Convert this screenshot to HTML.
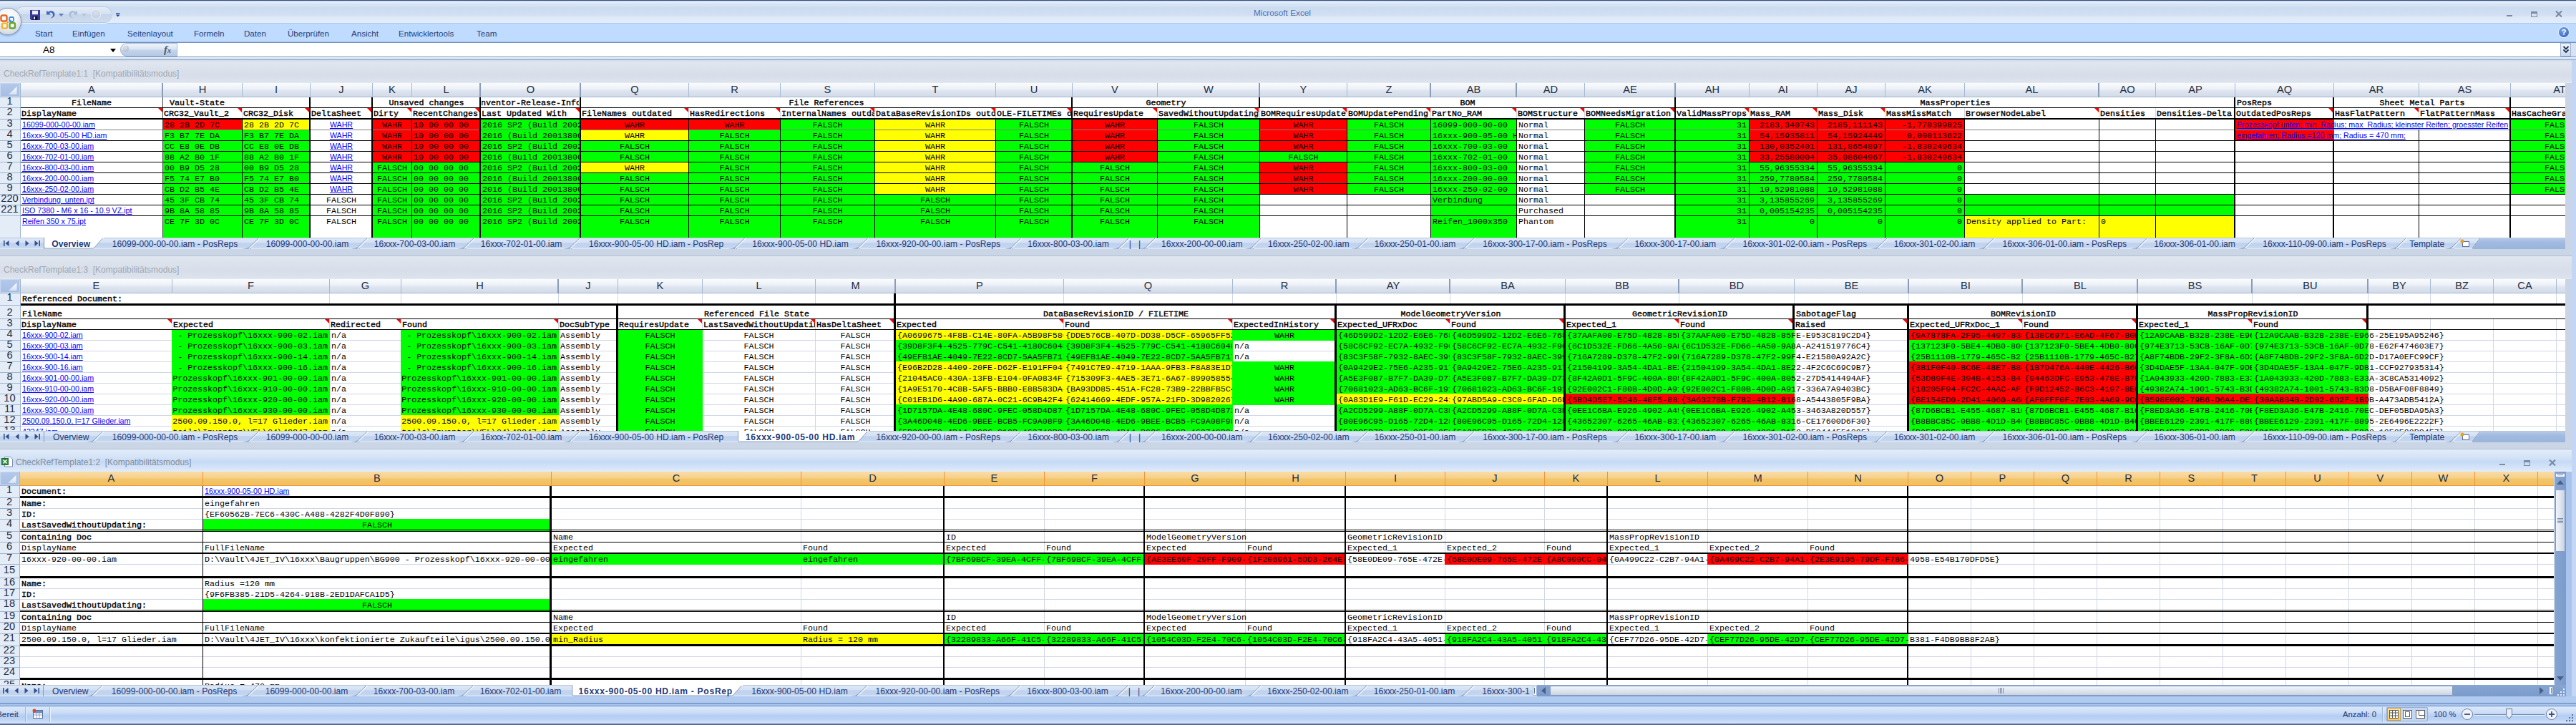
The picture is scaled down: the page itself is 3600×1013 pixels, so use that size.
<!DOCTYPE html><html><head><meta charset="utf-8"><title>Microsoft Excel</title><style>html,body{margin:0;padding:0}
body{width:3600px;height:1013px;position:relative;overflow:hidden;background:#dfe5ee;font-family:"Liberation Mono",monospace}
i{position:absolute;display:block}
.t{position:absolute;white-space:nowrap;overflow:hidden;font:11.67px "Liberation Mono",monospace;color:#000}
.b{-webkit-text-stroke:.4px #000}
.ui{font-family:"Liberation Sans",sans-serif;overflow:visible}
.l{font:10.67px "Liberation Sans",sans-serif;color:#00f;text-decoration:underline}
.h{font:14.67px "Liberation Sans",sans-serif;color:#1f2d42;text-align:center;overflow:visible}
.c{text-align:center}.r{text-align:right}
.rj{display:flex;justify-content:flex-end}
</style></head><body>
<i style="left:0px;top:0px;width:3600px;height:33px;background:linear-gradient(#31507f 0,#31507f 1px,#9db4d6 1px,#e6eefa 2px,#e3ecf8 4px,#d9e5f5 5px,#d3e1f3 9px,#cbdbf0 10px,#d2e0f3 22px,#dde8f7 23px,#e3edfa 32px,#a9c9f1 32px)"></i>
<i style="left:0px;top:33px;width:3600px;height:25px;background:#bfdbff"></i>
<i style="left:0px;top:58px;width:3600px;height:1px;background:#9fbfe8"></i>
<i style="left:0px;top:59px;width:3600px;height:1px;background:#7590b7"></i>
<i style="left:0px;top:60px;width:3600px;height:19px;background:#fff"></i>
<i style="left:0px;top:79px;width:3600px;height:1px;background:#6c8bb5"></i>
<i style="left:0px;top:80px;width:3600px;height:2px;background:#f4f8fd"></i>
<i style="left:0px;top:82px;width:3600px;height:1px;background:#7f9fcb"></i>
<i style="left:0px;top:83px;width:3600px;height:1px;background:#b4c8e4"></i>
<i style="left:22px;top:10px;width:134px;height:21px;background:linear-gradient(#e4edf8,#d3e0f1 45%,#c4d4ea 50%,#cfdcee);border-radius:11px;box-shadow:0 0 0 1px #b9cbe4,0 1px 0 1px #eef4fb"></i>
<i style="left:-7px;top:12px;width:36px;height:36px;border-radius:50%;background:radial-gradient(circle at 50% 35%,#fff 0,#f4f6fa 40%,#d5dbe6 75%,#b9c2d2 100%);box-shadow:0 0 0 1px #8e9bb3,0 1px 3px 1px rgba(60,80,120,.45)"></i>
<svg style="position:absolute;left:0;top:19px" width="24" height="24" viewBox="0 0 24 24"><rect x="1.5" y="2.5" width="8" height="8" rx="2" fill="none" stroke="#e8641b" stroke-width="2.4"/><rect x="13" y="5" width="6" height="6" rx="1.5" fill="none" stroke="#3f8fd6" stroke-width="1.8"/><rect x="3" y="13.5" width="7" height="7" rx="1.5" fill="none" stroke="#f3b21b" stroke-width="2.2"/><rect x="13.5" y="13" width="7.5" height="7.5" rx="2" fill="none" stroke="#6aa52e" stroke-width="2.4"/><circle cx="11" cy="12" r="1" fill="#e8641b"/><circle cx="14.5" cy="9.5" r="1" fill="#3f8fd6"/></svg>
<svg style="position:absolute;left:42px;top:14px" width="14" height="14" viewBox="0 0 14 14"><path d="M0 0h14v14H1.5L0 12.5z" fill="#3a3a9a"/><rect x="3" y="0.8" width="8" height="5.4" fill="#eef0fa"/><rect x="3.5" y="8.5" width="7" height="5.5" fill="#15154a"/><rect x="5" y="9.5" width="2" height="3.5" fill="#dfe3f5"/></svg>
<svg style="position:absolute;left:64px;top:13px" width="14" height="14" viewBox="0 0 14 14"><path d="M1 1.5v6h6L4.8 5.3C7 3.6 10 5 10 8c0 2.200-1.500 3.800-4 4.500 4-.2 6.500-2.300 6.500-5.500C12.500 2.500 7 .8 3.200 3.700z" fill="#3e68b8"/></svg>
<svg style="position:absolute;left:82px;top:19px" width="7" height="4"><path d="M0 0h7L3.500 4z" fill="#5f7fb8"/></svg>
<svg style="position:absolute;left:95px;top:13px" width="14" height="14" viewBox="0 0 14 14"><path d="M13 1.500v6H7l2.200-2.200C7 3.600 4 5 4 8c0 2.200 1.500 3.800 4 4.500-4-.2-6.500-2.300-6.500-5.500C1.500 2.500 7 .8 10.800 3.700z" fill="#a9bcd8"/></svg>
<svg style="position:absolute;left:114px;top:19px" width="7" height="4"><path d="M0 0h7L3.500 4z" fill="#b9c4d6"/></svg>
<i style="left:128px;top:14px;width:12px;height:12px;border-radius:50%;background:radial-gradient(circle at 50% 30%,#d9e1ed,#c6d1e3 60%,#d5deeb);box-shadow:0 0 0 1.200px #e6ecf5"></i>
<svg style="position:absolute;left:162px;top:18px" width="6" height="6"><path d="M0 0h5.500v1.300H0zM0 2.600h5.500L2.750 5.600z" fill="#23408f"/></svg>
<div class="t ui" style="text-align:center;color:#4b6cb1;font-size:11.8px;left:1700px;top:9px;width:184px;height:18px;line-height:18px">Microsoft Excel</div>
<i style="left:3503px;top:21px;width:8px;height:2px;background:#7b8ba6"></i>
<i style="left:3537px;top:16px;width:7px;height:4px;border:1px solid #7b8ba6;border-top-width:3px"></i>
<svg style="position:absolute;left:3571px;top:15px" width="10" height="9"><path d="M1 .5 9 8.500M9 .5 1 8.500" stroke="#7b8ba6" stroke-width="2.200"/></svg>
<div class="t ui" style="color:#1e3f7d;font-size:11.6px;left:49px;top:38px;width:120px;height:18px;line-height:18px">Start</div>
<div class="t ui" style="color:#1e3f7d;font-size:11.6px;left:101px;top:38px;width:120px;height:18px;line-height:18px">Einfügen</div>
<div class="t ui" style="color:#1e3f7d;font-size:11.6px;left:178px;top:38px;width:120px;height:18px;line-height:18px">Seitenlayout</div>
<div class="t ui" style="color:#1e3f7d;font-size:11.6px;left:271px;top:38px;width:120px;height:18px;line-height:18px">Formeln</div>
<div class="t ui" style="color:#1e3f7d;font-size:11.6px;left:341px;top:38px;width:120px;height:18px;line-height:18px">Daten</div>
<div class="t ui" style="color:#1e3f7d;font-size:11.6px;left:402px;top:38px;width:120px;height:18px;line-height:18px">Überprüfen</div>
<div class="t ui" style="color:#1e3f7d;font-size:11.6px;left:491px;top:38px;width:120px;height:18px;line-height:18px">Ansicht</div>
<div class="t ui" style="color:#1e3f7d;font-size:11.6px;left:557px;top:38px;width:120px;height:18px;line-height:18px">Entwicklertools</div>
<div class="t ui" style="color:#1e3f7d;font-size:11.6px;left:666px;top:38px;width:120px;height:18px;line-height:18px">Team</div>
<i style="left:3576px;top:38px;width:14px;height:14px;border-radius:50%;background:radial-gradient(circle at 40% 30%,#7aa7ea,#2457b5);box-shadow:0 0 0 1px #e8f0fb"></i>
<div class="t ui" style="text-align:center;color:#fff;font-weight:bold;font-size:11px;left:3576px;top:38px;width:14px;height:14px;line-height:14px">?</div>
<div class="t ui" style="color:#000;font-size:13.5px;left:60px;top:61px;width:40px;height:18px;line-height:18px">A8</div>
<svg style="position:absolute;left:154px;top:68px" width="8" height="5"><path d="M0 0h8L4 5z" fill="#000"/></svg>
<i style="left:168px;top:60px;width:80px;height:19px;border-radius:10px 0 0 10px;background:linear-gradient(#f1f5fb,#dbe5f3 45%,#c2d3ea 55%,#b4c8e4);box-shadow:inset 0 0 0 1px #a8bbd8"></i>
<i style="left:172px;top:64px;width:8px;height:8px;border-radius:50%;background:radial-gradient(circle at 40% 35%,#dfe3ea,#a9b1be)"></i>
<div class="t " style="font:italic bold 15px 'Liberation Serif',serif;color:#4d5a6e;left:229px;top:60px;width:20px;height:18px;line-height:18px">f<span style="font-size:10px">x</span></div>
<i style="left:3578px;top:60px;width:15px;height:19px;background:linear-gradient(#f1f5fb,#c9d8ee);box-shadow:inset 0 0 0 1px #9db3d3"></i>
<svg style="position:absolute;left:3582px;top:64px" width="8" height="11"><path d="M.5 1 4 4.500 7.500 1M.5 5.500 4 9 7.500 5.500" stroke="#1b2b4a" stroke-width="1.800" fill="none"/></svg>
<i style="left:3593px;top:60px;width:7px;height:19px;background:#d6e3f5"></i>
<i style="left:0px;top:84px;width:3594px;height:32px;background:linear-gradient(#d3dbe7 0,#e0e6ef 3px,#d7dee9 65%,#dde3ed 95%,#e6ebf3)"></i>
<div class="t ui" style="color:#a1a9b4;font-size:12px;white-space:pre;left:5px;top:94px;width:400px;height:18px;line-height:18px">CheckRefTemplate1:1  [Kompatibilitätsmodus]</div>
<i style="left:0px;top:116px;width:3585px;height:216px;background:#fff"></i>
<i style="left:227px;top:136px;width:1px;height:196px;background:#d0d7e5"></i>
<i style="left:338px;top:136px;width:1px;height:196px;background:#d0d7e5"></i>
<i style="left:433px;top:136px;width:1px;height:196px;background:#d0d7e5"></i>
<i style="left:520px;top:136px;width:1px;height:196px;background:#d0d7e5"></i>
<i style="left:575px;top:136px;width:1px;height:196px;background:#d0d7e5"></i>
<i style="left:671px;top:136px;width:1px;height:196px;background:#d0d7e5"></i>
<i style="left:811px;top:136px;width:1px;height:196px;background:#d0d7e5"></i>
<i style="left:962px;top:136px;width:1px;height:196px;background:#d0d7e5"></i>
<i style="left:1090px;top:136px;width:1px;height:196px;background:#d0d7e5"></i>
<i style="left:1222px;top:136px;width:1px;height:196px;background:#d0d7e5"></i>
<i style="left:1391px;top:136px;width:1px;height:196px;background:#d0d7e5"></i>
<i style="left:1498px;top:136px;width:1px;height:196px;background:#d0d7e5"></i>
<i style="left:1617px;top:136px;width:1px;height:196px;background:#d0d7e5"></i>
<i style="left:1760px;top:136px;width:1px;height:196px;background:#d0d7e5"></i>
<i style="left:1882px;top:136px;width:1px;height:196px;background:#d0d7e5"></i>
<i style="left:1999px;top:136px;width:1px;height:196px;background:#d0d7e5"></i>
<i style="left:2119px;top:136px;width:1px;height:196px;background:#d0d7e5"></i>
<i style="left:2214px;top:136px;width:1px;height:196px;background:#d0d7e5"></i>
<i style="left:2341px;top:136px;width:1px;height:196px;background:#d0d7e5"></i>
<i style="left:2444px;top:136px;width:1px;height:196px;background:#d0d7e5"></i>
<i style="left:2539px;top:136px;width:1px;height:196px;background:#d0d7e5"></i>
<i style="left:2634px;top:136px;width:1px;height:196px;background:#d0d7e5"></i>
<i style="left:2745px;top:136px;width:1px;height:196px;background:#d0d7e5"></i>
<i style="left:2933px;top:136px;width:1px;height:196px;background:#d0d7e5"></i>
<i style="left:3012px;top:136px;width:1px;height:196px;background:#d0d7e5"></i>
<i style="left:3123px;top:136px;width:1px;height:196px;background:#d0d7e5"></i>
<i style="left:3261px;top:136px;width:1px;height:196px;background:#d0d7e5"></i>
<i style="left:3380px;top:136px;width:1px;height:196px;background:#d0d7e5"></i>
<i style="left:3508px;top:136px;width:1px;height:196px;background:#d0d7e5"></i>
<i style="left:29px;top:150px;width:3556px;height:1px;background:#d0d7e5"></i>
<i style="left:29px;top:166px;width:3556px;height:1px;background:#d0d7e5"></i>
<i style="left:29px;top:181px;width:3556px;height:1px;background:#d0d7e5"></i>
<i style="left:29px;top:196px;width:3556px;height:1px;background:#d0d7e5"></i>
<i style="left:29px;top:211px;width:3556px;height:1px;background:#d0d7e5"></i>
<i style="left:29px;top:226px;width:3556px;height:1px;background:#d0d7e5"></i>
<i style="left:29px;top:241px;width:3556px;height:1px;background:#d0d7e5"></i>
<i style="left:29px;top:256px;width:3556px;height:1px;background:#d0d7e5"></i>
<i style="left:29px;top:271px;width:3556px;height:1px;background:#d0d7e5"></i>
<i style="left:29px;top:286px;width:3556px;height:1px;background:#d0d7e5"></i>
<i style="left:29px;top:301px;width:3556px;height:1px;background:#d0d7e5"></i>
<i style="left:228px;top:136px;width:205px;height:14px;background:#fff"></i>
<i style="left:521px;top:136px;width:150px;height:14px;background:#fff"></i>
<i style="left:812px;top:136px;width:686px;height:14px;background:#fff"></i>
<i style="left:1499px;top:136px;width:261px;height:14px;background:#fff"></i>
<i style="left:1761px;top:136px;width:580px;height:14px;background:#fff"></i>
<i style="left:2342px;top:136px;width:781px;height:14px;background:#fff"></i>
<i style="left:3262px;top:136px;width:246px;height:14px;background:#fff"></i>
<div class="t l" style="left:31px;top:167px;width:196px;height:15px;line-height:15px">16099-000-00-00.iam</div>
<div class="t l" style="left:31px;top:182px;width:196px;height:15px;line-height:15px">16xxx-900-05-00 HD.iam</div>
<div class="t l" style="left:31px;top:197px;width:196px;height:15px;line-height:15px">16xxx-700-03-00.iam</div>
<div class="t l" style="left:31px;top:212px;width:196px;height:15px;line-height:15px">16xxx-702-01-00.iam</div>
<div class="t l" style="left:31px;top:227px;width:196px;height:15px;line-height:15px">16xxx-800-03-00.iam</div>
<div class="t l" style="left:31px;top:242px;width:196px;height:15px;line-height:15px">16xxx-200-00-00.iam</div>
<div class="t l" style="left:31px;top:257px;width:196px;height:15px;line-height:15px">16xxx-250-02-00.iam</div>
<div class="t l" style="left:31px;top:272px;width:196px;height:15px;line-height:15px">Verbindung_unten.ipt</div>
<div class="t l" style="left:31px;top:287px;width:196px;height:15px;line-height:15px">ISO 7380 - M6 x 16 - 10.9 VZ.ipt</div>
<div class="t l" style="left:31px;top:302px;width:196px;height:15px;line-height:15px">Reifen 350 x 75.ipt</div>
<i style="left:227px;top:166px;width:112px;height:16px;background:#f00"></i>
<i style="left:227px;top:181px;width:112px;height:16px;background:#0f0"></i>
<i style="left:227px;top:196px;width:112px;height:16px;background:#0f0"></i>
<i style="left:227px;top:211px;width:112px;height:16px;background:#0f0"></i>
<i style="left:227px;top:226px;width:112px;height:16px;background:#0f0"></i>
<i style="left:227px;top:241px;width:112px;height:16px;background:#0f0"></i>
<i style="left:227px;top:256px;width:112px;height:16px;background:#0f0"></i>
<i style="left:227px;top:271px;width:112px;height:16px;background:#0f0"></i>
<i style="left:227px;top:286px;width:112px;height:16px;background:#0f0"></i>
<i style="left:227px;top:301px;width:112px;height:31px;background:#0f0"></i>
<div class="t " style="left:230px;top:168px;width:108px;height:15px;line-height:15px">28 2B 2D 7C</div>
<div class="t " style="left:230px;top:183px;width:108px;height:15px;line-height:15px">F3 B7 7E DA</div>
<div class="t " style="left:230px;top:198px;width:108px;height:15px;line-height:15px">CC E8 0E DB</div>
<div class="t " style="left:230px;top:213px;width:108px;height:15px;line-height:15px">88 A2 B0 1F</div>
<div class="t " style="left:230px;top:228px;width:108px;height:15px;line-height:15px">00 B9 D5 28</div>
<div class="t " style="left:230px;top:243px;width:108px;height:15px;line-height:15px">F5 74 E7 B0</div>
<div class="t " style="left:230px;top:258px;width:108px;height:15px;line-height:15px">CB D2 B5 4E</div>
<div class="t " style="left:230px;top:273px;width:108px;height:15px;line-height:15px">45 3F CB 74</div>
<div class="t " style="left:230px;top:288px;width:108px;height:15px;line-height:15px">9B 8A 58 85</div>
<div class="t " style="left:230px;top:303px;width:108px;height:15px;line-height:15px">CE 7F 3D 0C</div>
<i style="left:338px;top:166px;width:96px;height:16px;background:#ff0"></i>
<i style="left:338px;top:181px;width:96px;height:16px;background:#0f0"></i>
<i style="left:338px;top:196px;width:96px;height:16px;background:#0f0"></i>
<i style="left:338px;top:211px;width:96px;height:16px;background:#0f0"></i>
<i style="left:338px;top:226px;width:96px;height:16px;background:#0f0"></i>
<i style="left:338px;top:241px;width:96px;height:16px;background:#0f0"></i>
<i style="left:338px;top:256px;width:96px;height:16px;background:#0f0"></i>
<i style="left:338px;top:271px;width:96px;height:16px;background:#0f0"></i>
<i style="left:338px;top:286px;width:96px;height:16px;background:#0f0"></i>
<i style="left:338px;top:301px;width:96px;height:31px;background:#0f0"></i>
<div class="t " style="left:341px;top:168px;width:92px;height:15px;line-height:15px">28 2B 2D 7C</div>
<div class="t " style="left:341px;top:183px;width:92px;height:15px;line-height:15px">F3 B7 7E DA</div>
<div class="t " style="left:341px;top:198px;width:92px;height:15px;line-height:15px">CC E8 0E DB</div>
<div class="t " style="left:341px;top:213px;width:92px;height:15px;line-height:15px">88 A2 B0 1F</div>
<div class="t " style="left:341px;top:228px;width:92px;height:15px;line-height:15px">00 B9 D5 28</div>
<div class="t " style="left:341px;top:243px;width:92px;height:15px;line-height:15px">F5 74 E7 B0</div>
<div class="t " style="left:341px;top:258px;width:92px;height:15px;line-height:15px">CB D2 B5 4E</div>
<div class="t " style="left:341px;top:273px;width:92px;height:15px;line-height:15px">45 3F CB 74</div>
<div class="t " style="left:341px;top:288px;width:92px;height:15px;line-height:15px">9B 8A 58 85</div>
<div class="t " style="left:341px;top:303px;width:92px;height:15px;line-height:15px">CE 7F 3D 0C</div>
<div class="t l c" style="left:434px;top:167px;width:86px;height:15px;line-height:15px">WAHR</div>
<div class="t l c" style="left:434px;top:182px;width:86px;height:15px;line-height:15px">WAHR</div>
<div class="t l c" style="left:434px;top:197px;width:86px;height:15px;line-height:15px">WAHR</div>
<div class="t l c" style="left:434px;top:212px;width:86px;height:15px;line-height:15px">WAHR</div>
<div class="t l c" style="left:434px;top:227px;width:86px;height:15px;line-height:15px">WAHR</div>
<div class="t l c" style="left:434px;top:242px;width:86px;height:15px;line-height:15px">WAHR</div>
<div class="t l c" style="left:434px;top:257px;width:86px;height:15px;line-height:15px">WAHR</div>
<div class="t c" style="left:434px;top:273px;width:86px;height:15px;line-height:15px">FALSCH</div>
<div class="t c" style="left:434px;top:288px;width:86px;height:15px;line-height:15px">FALSCH</div>
<div class="t c" style="left:434px;top:303px;width:86px;height:15px;line-height:15px">FALSCH</div>
<i style="left:520px;top:166px;width:56px;height:16px;background:#f00"></i>
<i style="left:520px;top:181px;width:56px;height:16px;background:#f00"></i>
<i style="left:520px;top:196px;width:56px;height:16px;background:#f00"></i>
<i style="left:520px;top:211px;width:56px;height:16px;background:#f00"></i>
<i style="left:520px;top:226px;width:56px;height:16px;background:#0f0"></i>
<i style="left:520px;top:241px;width:56px;height:16px;background:#0f0"></i>
<i style="left:520px;top:256px;width:56px;height:16px;background:#0f0"></i>
<i style="left:520px;top:271px;width:56px;height:16px;background:#0f0"></i>
<i style="left:520px;top:286px;width:56px;height:16px;background:#0f0"></i>
<i style="left:520px;top:301px;width:56px;height:31px;background:#0f0"></i>
<div class="t c" style="left:521px;top:168px;width:54px;height:15px;line-height:15px">WAHR</div>
<div class="t c" style="left:521px;top:183px;width:54px;height:15px;line-height:15px">WAHR</div>
<div class="t c" style="left:521px;top:198px;width:54px;height:15px;line-height:15px">WAHR</div>
<div class="t c" style="left:521px;top:213px;width:54px;height:15px;line-height:15px">WAHR</div>
<div class="t c" style="left:521px;top:228px;width:54px;height:15px;line-height:15px">FALSCH</div>
<div class="t c" style="left:521px;top:243px;width:54px;height:15px;line-height:15px">FALSCH</div>
<div class="t c" style="left:521px;top:258px;width:54px;height:15px;line-height:15px">FALSCH</div>
<div class="t c" style="left:521px;top:273px;width:54px;height:15px;line-height:15px">FALSCH</div>
<div class="t c" style="left:521px;top:288px;width:54px;height:15px;line-height:15px">FALSCH</div>
<div class="t c" style="left:521px;top:303px;width:54px;height:15px;line-height:15px">FALSCH</div>
<i style="left:575px;top:166px;width:97px;height:16px;background:#f00"></i>
<i style="left:575px;top:181px;width:97px;height:16px;background:#f00"></i>
<i style="left:575px;top:196px;width:97px;height:16px;background:#f00"></i>
<i style="left:575px;top:211px;width:97px;height:16px;background:#f00"></i>
<i style="left:575px;top:226px;width:97px;height:16px;background:#0f0"></i>
<i style="left:575px;top:241px;width:97px;height:16px;background:#0f0"></i>
<i style="left:575px;top:256px;width:97px;height:16px;background:#0f0"></i>
<i style="left:575px;top:271px;width:97px;height:16px;background:#0f0"></i>
<i style="left:575px;top:286px;width:97px;height:16px;background:#0f0"></i>
<i style="left:575px;top:301px;width:97px;height:31px;background:#0f0"></i>
<div class="t " style="left:578px;top:168px;width:93px;height:15px;line-height:15px">10 00 00 00</div>
<div class="t " style="left:578px;top:183px;width:93px;height:15px;line-height:15px">10 00 00 00</div>
<div class="t " style="left:578px;top:198px;width:93px;height:15px;line-height:15px">10 00 00 00</div>
<div class="t " style="left:578px;top:213px;width:93px;height:15px;line-height:15px">10 00 00 00</div>
<div class="t " style="left:578px;top:228px;width:93px;height:15px;line-height:15px">00 00 00 00</div>
<div class="t " style="left:578px;top:243px;width:93px;height:15px;line-height:15px">00 00 00 00</div>
<div class="t " style="left:578px;top:258px;width:93px;height:15px;line-height:15px">00 00 00 00</div>
<div class="t " style="left:578px;top:273px;width:93px;height:15px;line-height:15px">00 00 00 00</div>
<div class="t " style="left:578px;top:288px;width:93px;height:15px;line-height:15px">00 00 00 00</div>
<div class="t " style="left:578px;top:303px;width:93px;height:15px;line-height:15px">00 00 00 00</div>
<i style="left:671px;top:166px;width:141px;height:16px;background:#0f0"></i>
<i style="left:671px;top:181px;width:141px;height:16px;background:#0f0"></i>
<i style="left:671px;top:196px;width:141px;height:16px;background:#0f0"></i>
<i style="left:671px;top:211px;width:141px;height:16px;background:#0f0"></i>
<i style="left:671px;top:226px;width:141px;height:16px;background:#0f0"></i>
<i style="left:671px;top:241px;width:141px;height:16px;background:#0f0"></i>
<i style="left:671px;top:256px;width:141px;height:16px;background:#0f0"></i>
<i style="left:671px;top:271px;width:141px;height:16px;background:#0f0"></i>
<i style="left:671px;top:286px;width:141px;height:16px;background:#0f0"></i>
<i style="left:671px;top:301px;width:141px;height:31px;background:#0f0"></i>
<div class="t " style="left:674px;top:168px;width:137px;height:15px;line-height:15px">2016 SP2 (Build 200220000, 220)</div>
<div class="t " style="left:674px;top:183px;width:137px;height:15px;line-height:15px">2016 (Build 200138000, 138)</div>
<div class="t " style="left:674px;top:198px;width:137px;height:15px;line-height:15px">2016 SP2 (Build 200220000, 220)</div>
<div class="t " style="left:674px;top:213px;width:137px;height:15px;line-height:15px">2016 (Build 200138000, 138)</div>
<div class="t " style="left:674px;top:228px;width:137px;height:15px;line-height:15px">2016 SP2 (Build 200220000, 220)</div>
<div class="t " style="left:674px;top:243px;width:137px;height:15px;line-height:15px">2016 (Build 200138000, 138)</div>
<div class="t " style="left:674px;top:258px;width:137px;height:15px;line-height:15px">2016 (Build 200138000, 138)</div>
<div class="t " style="left:674px;top:273px;width:137px;height:15px;line-height:15px">2016 SP2 (Build 200220000, 220)</div>
<div class="t " style="left:674px;top:288px;width:137px;height:15px;line-height:15px">2016 SP2 (Build 200220000, 220)</div>
<div class="t " style="left:674px;top:303px;width:137px;height:15px;line-height:15px">2016 SP2 (Build 200220000, 220)</div>
<i style="left:811px;top:166px;width:152px;height:16px;background:#f00"></i>
<i style="left:811px;top:181px;width:152px;height:16px;background:#ff0"></i>
<i style="left:811px;top:196px;width:152px;height:16px;background:#0f0"></i>
<i style="left:811px;top:211px;width:152px;height:16px;background:#0f0"></i>
<i style="left:811px;top:226px;width:152px;height:16px;background:#ff0"></i>
<i style="left:811px;top:241px;width:152px;height:16px;background:#0f0"></i>
<i style="left:811px;top:256px;width:152px;height:16px;background:#0f0"></i>
<i style="left:811px;top:271px;width:152px;height:16px;background:#0f0"></i>
<i style="left:811px;top:286px;width:152px;height:16px;background:#0f0"></i>
<i style="left:811px;top:301px;width:152px;height:31px;background:#0f0"></i>
<div class="t c" style="left:812px;top:168px;width:150px;height:15px;line-height:15px">WAHR</div>
<div class="t c" style="left:812px;top:183px;width:150px;height:15px;line-height:15px">WAHR</div>
<div class="t c" style="left:812px;top:198px;width:150px;height:15px;line-height:15px">FALSCH</div>
<div class="t c" style="left:812px;top:213px;width:150px;height:15px;line-height:15px">FALSCH</div>
<div class="t c" style="left:812px;top:228px;width:150px;height:15px;line-height:15px">WAHR</div>
<div class="t c" style="left:812px;top:243px;width:150px;height:15px;line-height:15px">FALSCH</div>
<div class="t c" style="left:812px;top:258px;width:150px;height:15px;line-height:15px">FALSCH</div>
<div class="t c" style="left:812px;top:273px;width:150px;height:15px;line-height:15px">FALSCH</div>
<div class="t c" style="left:812px;top:288px;width:150px;height:15px;line-height:15px">FALSCH</div>
<div class="t c" style="left:812px;top:303px;width:150px;height:15px;line-height:15px">FALSCH</div>
<i style="left:962px;top:166px;width:129px;height:16px;background:#f00"></i>
<i style="left:962px;top:181px;width:129px;height:16px;background:#0f0"></i>
<i style="left:962px;top:196px;width:129px;height:16px;background:#0f0"></i>
<i style="left:962px;top:211px;width:129px;height:16px;background:#0f0"></i>
<i style="left:962px;top:226px;width:129px;height:16px;background:#0f0"></i>
<i style="left:962px;top:241px;width:129px;height:16px;background:#0f0"></i>
<i style="left:962px;top:256px;width:129px;height:16px;background:#0f0"></i>
<i style="left:962px;top:271px;width:129px;height:16px;background:#0f0"></i>
<i style="left:962px;top:286px;width:129px;height:16px;background:#0f0"></i>
<i style="left:962px;top:301px;width:129px;height:31px;background:#0f0"></i>
<div class="t c" style="left:963px;top:168px;width:127px;height:15px;line-height:15px">WAHR</div>
<div class="t c" style="left:963px;top:183px;width:127px;height:15px;line-height:15px">FALSCH</div>
<div class="t c" style="left:963px;top:198px;width:127px;height:15px;line-height:15px">FALSCH</div>
<div class="t c" style="left:963px;top:213px;width:127px;height:15px;line-height:15px">FALSCH</div>
<div class="t c" style="left:963px;top:228px;width:127px;height:15px;line-height:15px">FALSCH</div>
<div class="t c" style="left:963px;top:243px;width:127px;height:15px;line-height:15px">FALSCH</div>
<div class="t c" style="left:963px;top:258px;width:127px;height:15px;line-height:15px">FALSCH</div>
<div class="t c" style="left:963px;top:273px;width:127px;height:15px;line-height:15px">FALSCH</div>
<div class="t c" style="left:963px;top:288px;width:127px;height:15px;line-height:15px">FALSCH</div>
<div class="t c" style="left:963px;top:303px;width:127px;height:15px;line-height:15px">FALSCH</div>
<i style="left:1090px;top:166px;width:133px;height:16px;background:#0f0"></i>
<i style="left:1090px;top:181px;width:133px;height:16px;background:#0f0"></i>
<i style="left:1090px;top:196px;width:133px;height:16px;background:#0f0"></i>
<i style="left:1090px;top:211px;width:133px;height:16px;background:#0f0"></i>
<i style="left:1090px;top:226px;width:133px;height:16px;background:#0f0"></i>
<i style="left:1090px;top:241px;width:133px;height:16px;background:#0f0"></i>
<i style="left:1090px;top:256px;width:133px;height:16px;background:#0f0"></i>
<i style="left:1090px;top:271px;width:133px;height:16px;background:#0f0"></i>
<i style="left:1090px;top:286px;width:133px;height:16px;background:#0f0"></i>
<i style="left:1090px;top:301px;width:133px;height:31px;background:#0f0"></i>
<div class="t c" style="left:1091px;top:168px;width:131px;height:15px;line-height:15px">FALSCH</div>
<div class="t c" style="left:1091px;top:183px;width:131px;height:15px;line-height:15px">FALSCH</div>
<div class="t c" style="left:1091px;top:198px;width:131px;height:15px;line-height:15px">FALSCH</div>
<div class="t c" style="left:1091px;top:213px;width:131px;height:15px;line-height:15px">FALSCH</div>
<div class="t c" style="left:1091px;top:228px;width:131px;height:15px;line-height:15px">FALSCH</div>
<div class="t c" style="left:1091px;top:243px;width:131px;height:15px;line-height:15px">FALSCH</div>
<div class="t c" style="left:1091px;top:258px;width:131px;height:15px;line-height:15px">FALSCH</div>
<div class="t c" style="left:1091px;top:273px;width:131px;height:15px;line-height:15px">FALSCH</div>
<div class="t c" style="left:1091px;top:288px;width:131px;height:15px;line-height:15px">FALSCH</div>
<div class="t c" style="left:1091px;top:303px;width:131px;height:15px;line-height:15px">FALSCH</div>
<i style="left:1222px;top:166px;width:170px;height:16px;background:#ff0"></i>
<i style="left:1222px;top:181px;width:170px;height:16px;background:#ff0"></i>
<i style="left:1222px;top:196px;width:170px;height:16px;background:#ff0"></i>
<i style="left:1222px;top:211px;width:170px;height:16px;background:#ff0"></i>
<i style="left:1222px;top:226px;width:170px;height:16px;background:#ff0"></i>
<i style="left:1222px;top:241px;width:170px;height:16px;background:#ff0"></i>
<i style="left:1222px;top:256px;width:170px;height:16px;background:#ff0"></i>
<i style="left:1222px;top:271px;width:170px;height:16px;background:#0f0"></i>
<i style="left:1222px;top:286px;width:170px;height:16px;background:#0f0"></i>
<i style="left:1222px;top:301px;width:170px;height:31px;background:#0f0"></i>
<div class="t c" style="left:1223px;top:168px;width:168px;height:15px;line-height:15px">WAHR</div>
<div class="t c" style="left:1223px;top:183px;width:168px;height:15px;line-height:15px">WAHR</div>
<div class="t c" style="left:1223px;top:198px;width:168px;height:15px;line-height:15px">WAHR</div>
<div class="t c" style="left:1223px;top:213px;width:168px;height:15px;line-height:15px">WAHR</div>
<div class="t c" style="left:1223px;top:228px;width:168px;height:15px;line-height:15px">WAHR</div>
<div class="t c" style="left:1223px;top:243px;width:168px;height:15px;line-height:15px">WAHR</div>
<div class="t c" style="left:1223px;top:258px;width:168px;height:15px;line-height:15px">WAHR</div>
<div class="t c" style="left:1223px;top:273px;width:168px;height:15px;line-height:15px">FALSCH</div>
<div class="t c" style="left:1223px;top:288px;width:168px;height:15px;line-height:15px">FALSCH</div>
<div class="t c" style="left:1223px;top:303px;width:168px;height:15px;line-height:15px">FALSCH</div>
<i style="left:1391px;top:166px;width:108px;height:16px;background:#0f0"></i>
<i style="left:1391px;top:181px;width:108px;height:16px;background:#0f0"></i>
<i style="left:1391px;top:196px;width:108px;height:16px;background:#0f0"></i>
<i style="left:1391px;top:211px;width:108px;height:16px;background:#0f0"></i>
<i style="left:1391px;top:226px;width:108px;height:16px;background:#0f0"></i>
<i style="left:1391px;top:241px;width:108px;height:16px;background:#0f0"></i>
<i style="left:1391px;top:256px;width:108px;height:16px;background:#0f0"></i>
<i style="left:1391px;top:271px;width:108px;height:16px;background:#0f0"></i>
<i style="left:1391px;top:286px;width:108px;height:16px;background:#0f0"></i>
<i style="left:1391px;top:301px;width:108px;height:31px;background:#0f0"></i>
<div class="t c" style="left:1392px;top:168px;width:106px;height:15px;line-height:15px">FALSCH</div>
<div class="t c" style="left:1392px;top:183px;width:106px;height:15px;line-height:15px">FALSCH</div>
<div class="t c" style="left:1392px;top:198px;width:106px;height:15px;line-height:15px">FALSCH</div>
<div class="t c" style="left:1392px;top:213px;width:106px;height:15px;line-height:15px">FALSCH</div>
<div class="t c" style="left:1392px;top:228px;width:106px;height:15px;line-height:15px">FALSCH</div>
<div class="t c" style="left:1392px;top:243px;width:106px;height:15px;line-height:15px">FALSCH</div>
<div class="t c" style="left:1392px;top:258px;width:106px;height:15px;line-height:15px">FALSCH</div>
<div class="t c" style="left:1392px;top:273px;width:106px;height:15px;line-height:15px">FALSCH</div>
<div class="t c" style="left:1392px;top:288px;width:106px;height:15px;line-height:15px">FALSCH</div>
<div class="t c" style="left:1392px;top:303px;width:106px;height:15px;line-height:15px">FALSCH</div>
<i style="left:1498px;top:166px;width:120px;height:16px;background:#f00"></i>
<i style="left:1498px;top:181px;width:120px;height:16px;background:#f00"></i>
<i style="left:1498px;top:196px;width:120px;height:16px;background:#f00"></i>
<i style="left:1498px;top:211px;width:120px;height:16px;background:#f00"></i>
<i style="left:1498px;top:226px;width:120px;height:16px;background:#0f0"></i>
<i style="left:1498px;top:241px;width:120px;height:16px;background:#0f0"></i>
<i style="left:1498px;top:256px;width:120px;height:16px;background:#0f0"></i>
<i style="left:1498px;top:271px;width:120px;height:16px;background:#0f0"></i>
<i style="left:1498px;top:286px;width:120px;height:16px;background:#0f0"></i>
<i style="left:1498px;top:301px;width:120px;height:31px;background:#0f0"></i>
<div class="t c" style="left:1499px;top:168px;width:118px;height:15px;line-height:15px">WAHR</div>
<div class="t c" style="left:1499px;top:183px;width:118px;height:15px;line-height:15px">WAHR</div>
<div class="t c" style="left:1499px;top:198px;width:118px;height:15px;line-height:15px">WAHR</div>
<div class="t c" style="left:1499px;top:213px;width:118px;height:15px;line-height:15px">WAHR</div>
<div class="t c" style="left:1499px;top:228px;width:118px;height:15px;line-height:15px">FALSCH</div>
<div class="t c" style="left:1499px;top:243px;width:118px;height:15px;line-height:15px">FALSCH</div>
<div class="t c" style="left:1499px;top:258px;width:118px;height:15px;line-height:15px">FALSCH</div>
<div class="t c" style="left:1499px;top:273px;width:118px;height:15px;line-height:15px">FALSCH</div>
<div class="t c" style="left:1499px;top:288px;width:118px;height:15px;line-height:15px">FALSCH</div>
<div class="t c" style="left:1499px;top:303px;width:118px;height:15px;line-height:15px">FALSCH</div>
<i style="left:1617px;top:166px;width:144px;height:16px;background:#0f0"></i>
<i style="left:1617px;top:181px;width:144px;height:16px;background:#0f0"></i>
<i style="left:1617px;top:196px;width:144px;height:16px;background:#0f0"></i>
<i style="left:1617px;top:211px;width:144px;height:16px;background:#0f0"></i>
<i style="left:1617px;top:226px;width:144px;height:16px;background:#0f0"></i>
<i style="left:1617px;top:241px;width:144px;height:16px;background:#0f0"></i>
<i style="left:1617px;top:256px;width:144px;height:16px;background:#0f0"></i>
<i style="left:1617px;top:271px;width:144px;height:16px;background:#0f0"></i>
<i style="left:1617px;top:286px;width:144px;height:16px;background:#0f0"></i>
<i style="left:1617px;top:301px;width:144px;height:31px;background:#0f0"></i>
<div class="t c" style="left:1618px;top:168px;width:142px;height:15px;line-height:15px">FALSCH</div>
<div class="t c" style="left:1618px;top:183px;width:142px;height:15px;line-height:15px">FALSCH</div>
<div class="t c" style="left:1618px;top:198px;width:142px;height:15px;line-height:15px">FALSCH</div>
<div class="t c" style="left:1618px;top:213px;width:142px;height:15px;line-height:15px">FALSCH</div>
<div class="t c" style="left:1618px;top:228px;width:142px;height:15px;line-height:15px">FALSCH</div>
<div class="t c" style="left:1618px;top:243px;width:142px;height:15px;line-height:15px">FALSCH</div>
<div class="t c" style="left:1618px;top:258px;width:142px;height:15px;line-height:15px">FALSCH</div>
<div class="t c" style="left:1618px;top:273px;width:142px;height:15px;line-height:15px">FALSCH</div>
<div class="t c" style="left:1618px;top:288px;width:142px;height:15px;line-height:15px">FALSCH</div>
<div class="t c" style="left:1618px;top:303px;width:142px;height:15px;line-height:15px">FALSCH</div>
<i style="left:1760px;top:166px;width:123px;height:16px;background:#f00"></i>
<i style="left:1760px;top:181px;width:123px;height:16px;background:#f00"></i>
<i style="left:1760px;top:196px;width:123px;height:16px;background:#f00"></i>
<i style="left:1760px;top:211px;width:123px;height:16px;background:#0f0"></i>
<i style="left:1760px;top:226px;width:123px;height:16px;background:#f00"></i>
<i style="left:1760px;top:241px;width:123px;height:16px;background:#f00"></i>
<i style="left:1760px;top:256px;width:123px;height:16px;background:#f00"></i>
<div class="t c" style="left:1761px;top:168px;width:121px;height:15px;line-height:15px">WAHR</div>
<div class="t c" style="left:1761px;top:183px;width:121px;height:15px;line-height:15px">WAHR</div>
<div class="t c" style="left:1761px;top:198px;width:121px;height:15px;line-height:15px">WAHR</div>
<div class="t c" style="left:1761px;top:213px;width:121px;height:15px;line-height:15px">FALSCH</div>
<div class="t c" style="left:1761px;top:228px;width:121px;height:15px;line-height:15px">WAHR</div>
<div class="t c" style="left:1761px;top:243px;width:121px;height:15px;line-height:15px">WAHR</div>
<div class="t c" style="left:1761px;top:258px;width:121px;height:15px;line-height:15px">WAHR</div>
<i style="left:1882px;top:166px;width:118px;height:16px;background:#0f0"></i>
<i style="left:1882px;top:181px;width:118px;height:16px;background:#0f0"></i>
<i style="left:1882px;top:196px;width:118px;height:16px;background:#0f0"></i>
<i style="left:1882px;top:211px;width:118px;height:16px;background:#0f0"></i>
<i style="left:1882px;top:226px;width:118px;height:16px;background:#0f0"></i>
<i style="left:1882px;top:241px;width:118px;height:16px;background:#0f0"></i>
<i style="left:1882px;top:256px;width:118px;height:16px;background:#0f0"></i>
<div class="t c" style="left:1883px;top:168px;width:116px;height:15px;line-height:15px">FALSCH</div>
<div class="t c" style="left:1883px;top:183px;width:116px;height:15px;line-height:15px">FALSCH</div>
<div class="t c" style="left:1883px;top:198px;width:116px;height:15px;line-height:15px">FALSCH</div>
<div class="t c" style="left:1883px;top:213px;width:116px;height:15px;line-height:15px">FALSCH</div>
<div class="t c" style="left:1883px;top:228px;width:116px;height:15px;line-height:15px">FALSCH</div>
<div class="t c" style="left:1883px;top:243px;width:116px;height:15px;line-height:15px">FALSCH</div>
<div class="t c" style="left:1883px;top:258px;width:116px;height:15px;line-height:15px">FALSCH</div>
<i style="left:1999px;top:166px;width:121px;height:16px;background:#0f0"></i>
<i style="left:1999px;top:181px;width:121px;height:16px;background:#0f0"></i>
<i style="left:1999px;top:196px;width:121px;height:16px;background:#0f0"></i>
<i style="left:1999px;top:211px;width:121px;height:16px;background:#0f0"></i>
<i style="left:1999px;top:226px;width:121px;height:16px;background:#0f0"></i>
<i style="left:1999px;top:241px;width:121px;height:16px;background:#0f0"></i>
<i style="left:1999px;top:256px;width:121px;height:16px;background:#0f0"></i>
<i style="left:1999px;top:271px;width:121px;height:16px;background:#0f0"></i>
<i style="left:1999px;top:286px;width:121px;height:16px;background:#0f0"></i>
<i style="left:1999px;top:301px;width:121px;height:31px;background:#0f0"></i>
<div class="t " style="left:2002px;top:168px;width:117px;height:15px;line-height:15px">16099-000-00-00</div>
<div class="t " style="left:2002px;top:183px;width:117px;height:15px;line-height:15px">16xxx-900-05-00 HD</div>
<div class="t " style="left:2002px;top:198px;width:117px;height:15px;line-height:15px">16xxx-700-03-00</div>
<div class="t " style="left:2002px;top:213px;width:117px;height:15px;line-height:15px">16xxx-702-01-00</div>
<div class="t " style="left:2002px;top:228px;width:117px;height:15px;line-height:15px">16xxx-800-03-00</div>
<div class="t " style="left:2002px;top:243px;width:117px;height:15px;line-height:15px">16xxx-200-00-00</div>
<div class="t " style="left:2002px;top:258px;width:117px;height:15px;line-height:15px">16xxx-250-02-00</div>
<div class="t " style="left:2002px;top:273px;width:117px;height:15px;line-height:15px">Verbindung</div>
<div class="t " style="left:2002px;top:303px;width:117px;height:15px;line-height:15px">Reifen_1000x350</div>
<div class="t " style="left:2122px;top:168px;width:92px;height:15px;line-height:15px">Normal</div>
<div class="t " style="left:2122px;top:183px;width:92px;height:15px;line-height:15px">Normal</div>
<div class="t " style="left:2122px;top:198px;width:92px;height:15px;line-height:15px">Normal</div>
<div class="t " style="left:2122px;top:213px;width:92px;height:15px;line-height:15px">Normal</div>
<div class="t " style="left:2122px;top:228px;width:92px;height:15px;line-height:15px">Normal</div>
<div class="t " style="left:2122px;top:243px;width:92px;height:15px;line-height:15px">Normal</div>
<div class="t " style="left:2122px;top:258px;width:92px;height:15px;line-height:15px">Normal</div>
<div class="t " style="left:2122px;top:273px;width:92px;height:15px;line-height:15px">Normal</div>
<div class="t " style="left:2122px;top:288px;width:92px;height:15px;line-height:15px">Purchased</div>
<div class="t " style="left:2122px;top:303px;width:92px;height:15px;line-height:15px">Phantom</div>
<i style="left:2214px;top:166px;width:128px;height:16px;background:#0f0"></i>
<i style="left:2214px;top:181px;width:128px;height:16px;background:#0f0"></i>
<i style="left:2214px;top:196px;width:128px;height:16px;background:#0f0"></i>
<i style="left:2214px;top:211px;width:128px;height:16px;background:#0f0"></i>
<i style="left:2214px;top:226px;width:128px;height:16px;background:#0f0"></i>
<i style="left:2214px;top:241px;width:128px;height:16px;background:#0f0"></i>
<i style="left:2214px;top:256px;width:128px;height:16px;background:#0f0"></i>
<div class="t c" style="left:2215px;top:168px;width:126px;height:15px;line-height:15px">FALSCH</div>
<div class="t c" style="left:2215px;top:183px;width:126px;height:15px;line-height:15px">FALSCH</div>
<div class="t c" style="left:2215px;top:198px;width:126px;height:15px;line-height:15px">FALSCH</div>
<div class="t c" style="left:2215px;top:213px;width:126px;height:15px;line-height:15px">FALSCH</div>
<div class="t c" style="left:2215px;top:228px;width:126px;height:15px;line-height:15px">FALSCH</div>
<div class="t c" style="left:2215px;top:243px;width:126px;height:15px;line-height:15px">FALSCH</div>
<div class="t c" style="left:2215px;top:258px;width:126px;height:15px;line-height:15px">FALSCH</div>
<i style="left:2341px;top:166px;width:104px;height:16px;background:#0f0"></i>
<i style="left:2341px;top:181px;width:104px;height:16px;background:#0f0"></i>
<i style="left:2341px;top:196px;width:104px;height:16px;background:#0f0"></i>
<i style="left:2341px;top:211px;width:104px;height:16px;background:#0f0"></i>
<i style="left:2341px;top:226px;width:104px;height:16px;background:#0f0"></i>
<i style="left:2341px;top:241px;width:104px;height:16px;background:#0f0"></i>
<i style="left:2341px;top:256px;width:104px;height:16px;background:#0f0"></i>
<i style="left:2341px;top:271px;width:104px;height:16px;background:#0f0"></i>
<i style="left:2341px;top:286px;width:104px;height:16px;background:#0f0"></i>
<i style="left:2341px;top:301px;width:104px;height:31px;background:#0f0"></i>
<div class="t r" style="left:2342px;top:168px;width:99px;height:15px;line-height:15px">31</div>
<div class="t r" style="left:2342px;top:183px;width:99px;height:15px;line-height:15px">31</div>
<div class="t r" style="left:2342px;top:198px;width:99px;height:15px;line-height:15px">31</div>
<div class="t r" style="left:2342px;top:213px;width:99px;height:15px;line-height:15px">31</div>
<div class="t r" style="left:2342px;top:228px;width:99px;height:15px;line-height:15px">31</div>
<div class="t r" style="left:2342px;top:243px;width:99px;height:15px;line-height:15px">31</div>
<div class="t r" style="left:2342px;top:258px;width:99px;height:15px;line-height:15px">31</div>
<div class="t r" style="left:2342px;top:273px;width:99px;height:15px;line-height:15px">31</div>
<div class="t r" style="left:2342px;top:288px;width:99px;height:15px;line-height:15px">31</div>
<div class="t r" style="left:2342px;top:303px;width:99px;height:15px;line-height:15px">31</div>
<i style="left:2444px;top:166px;width:96px;height:16px;background:#f00"></i>
<i style="left:2444px;top:181px;width:96px;height:16px;background:#f00"></i>
<i style="left:2444px;top:196px;width:96px;height:16px;background:#f00"></i>
<i style="left:2444px;top:211px;width:96px;height:16px;background:#f00"></i>
<i style="left:2444px;top:226px;width:96px;height:16px;background:#0f0"></i>
<i style="left:2444px;top:241px;width:96px;height:16px;background:#0f0"></i>
<i style="left:2444px;top:256px;width:96px;height:16px;background:#0f0"></i>
<i style="left:2444px;top:271px;width:96px;height:16px;background:#0f0"></i>
<i style="left:2444px;top:286px;width:96px;height:16px;background:#0f0"></i>
<i style="left:2444px;top:301px;width:96px;height:31px;background:#0f0"></i>
<div class="t r" style="left:2445px;top:168px;width:91px;height:15px;line-height:15px">2183,340743</div>
<div class="t r" style="left:2445px;top:183px;width:91px;height:15px;line-height:15px">54,15935811</div>
<div class="t r" style="left:2445px;top:198px;width:91px;height:15px;line-height:15px">130,0352401</div>
<div class="t r" style="left:2445px;top:213px;width:91px;height:15px;line-height:15px">33,25580004</div>
<div class="t r" style="left:2445px;top:228px;width:91px;height:15px;line-height:15px">55,96355334</div>
<div class="t r" style="left:2445px;top:243px;width:91px;height:15px;line-height:15px">259,7780584</div>
<div class="t r" style="left:2445px;top:258px;width:91px;height:15px;line-height:15px">10,52981088</div>
<div class="t r" style="left:2445px;top:273px;width:91px;height:15px;line-height:15px">3,135855269</div>
<div class="t r" style="left:2445px;top:288px;width:91px;height:15px;line-height:15px">0,005154235</div>
<div class="t r" style="left:2445px;top:303px;width:91px;height:15px;line-height:15px">0</div>
<i style="left:2539px;top:166px;width:96px;height:16px;background:#f00"></i>
<i style="left:2539px;top:181px;width:96px;height:16px;background:#f00"></i>
<i style="left:2539px;top:196px;width:96px;height:16px;background:#f00"></i>
<i style="left:2539px;top:211px;width:96px;height:16px;background:#f00"></i>
<i style="left:2539px;top:226px;width:96px;height:16px;background:#0f0"></i>
<i style="left:2539px;top:241px;width:96px;height:16px;background:#0f0"></i>
<i style="left:2539px;top:256px;width:96px;height:16px;background:#0f0"></i>
<i style="left:2539px;top:271px;width:96px;height:16px;background:#0f0"></i>
<i style="left:2539px;top:286px;width:96px;height:16px;background:#0f0"></i>
<i style="left:2539px;top:301px;width:96px;height:31px;background:#0f0"></i>
<div class="t r" style="left:2540px;top:168px;width:91px;height:15px;line-height:15px">2185,111143</div>
<div class="t r" style="left:2540px;top:183px;width:91px;height:15px;line-height:15px">54,15924449</div>
<div class="t r" style="left:2540px;top:198px;width:91px;height:15px;line-height:15px">131,8654897</div>
<div class="t r" style="left:2540px;top:213px;width:91px;height:15px;line-height:15px">35,08604967</div>
<div class="t r" style="left:2540px;top:228px;width:91px;height:15px;line-height:15px">55,96355334</div>
<div class="t r" style="left:2540px;top:243px;width:91px;height:15px;line-height:15px">259,7780584</div>
<div class="t r" style="left:2540px;top:258px;width:91px;height:15px;line-height:15px">10,52981088</div>
<div class="t r" style="left:2540px;top:273px;width:91px;height:15px;line-height:15px">3,135855269</div>
<div class="t r" style="left:2540px;top:288px;width:91px;height:15px;line-height:15px">0,005154235</div>
<div class="t r" style="left:2540px;top:303px;width:91px;height:15px;line-height:15px">0</div>
<i style="left:2634px;top:166px;width:112px;height:16px;background:#f00"></i>
<i style="left:2634px;top:181px;width:112px;height:16px;background:#f00"></i>
<i style="left:2634px;top:196px;width:112px;height:16px;background:#f00"></i>
<i style="left:2634px;top:211px;width:112px;height:16px;background:#f00"></i>
<i style="left:2634px;top:226px;width:112px;height:16px;background:#0f0"></i>
<i style="left:2634px;top:241px;width:112px;height:16px;background:#0f0"></i>
<i style="left:2634px;top:256px;width:112px;height:16px;background:#0f0"></i>
<i style="left:2634px;top:271px;width:112px;height:16px;background:#0f0"></i>
<i style="left:2634px;top:286px;width:112px;height:16px;background:#0f0"></i>
<i style="left:2634px;top:301px;width:112px;height:31px;background:#0f0"></i>
<div class="t r" style="left:2635px;top:168px;width:107px;height:15px;line-height:15px">-1,770399825</div>
<div class="t r" style="left:2635px;top:183px;width:107px;height:15px;line-height:15px">0,000113622</div>
<div class="t r" style="left:2635px;top:198px;width:107px;height:15px;line-height:15px">-1,830249634</div>
<div class="t r" style="left:2635px;top:213px;width:107px;height:15px;line-height:15px">-1,830249634</div>
<div class="t r" style="left:2635px;top:228px;width:107px;height:15px;line-height:15px">0</div>
<div class="t r" style="left:2635px;top:243px;width:107px;height:15px;line-height:15px">0</div>
<div class="t r" style="left:2635px;top:258px;width:107px;height:15px;line-height:15px">0</div>
<div class="t r" style="left:2635px;top:273px;width:107px;height:15px;line-height:15px">0</div>
<div class="t r" style="left:2635px;top:288px;width:107px;height:15px;line-height:15px">0</div>
<div class="t r" style="left:2635px;top:303px;width:107px;height:15px;line-height:15px">0</div>
<i style="left:2745px;top:271px;width:189px;height:16px;background:#0f0"></i>
<i style="left:2745px;top:286px;width:189px;height:16px;background:#0f0"></i>
<i style="left:2745px;top:301px;width:189px;height:31px;background:#ff0"></i>
<div class="t " style="left:2748px;top:303px;width:185px;height:15px;line-height:15px">Density applied to Part:</div>
<i style="left:2933px;top:271px;width:80px;height:16px;background:#0f0"></i>
<i style="left:2933px;top:286px;width:80px;height:16px;background:#0f0"></i>
<i style="left:2933px;top:301px;width:80px;height:31px;background:#ff0"></i>
<div class="t " style="left:2936px;top:303px;width:76px;height:15px;line-height:15px">0</div>
<i style="left:3012px;top:271px;width:112px;height:16px;background:#0f0"></i>
<i style="left:3012px;top:286px;width:112px;height:16px;background:#0f0"></i>
<i style="left:3012px;top:301px;width:112px;height:31px;background:#ff0"></i>
<i style="left:3123px;top:166px;width:139px;height:16px;background:#f00"></i>
<i style="left:3123px;top:181px;width:139px;height:16px;background:#f00"></i>
<i style="left:3508px;top:166px;width:77px;height:16px;background:#0f0"></i>
<i style="left:3508px;top:181px;width:77px;height:16px;background:#0f0"></i>
<i style="left:3508px;top:196px;width:77px;height:16px;background:#0f0"></i>
<i style="left:3508px;top:211px;width:77px;height:16px;background:#0f0"></i>
<i style="left:3508px;top:226px;width:77px;height:16px;background:#0f0"></i>
<i style="left:3508px;top:241px;width:77px;height:16px;background:#0f0"></i>
<i style="left:3508px;top:256px;width:77px;height:16px;background:#0f0"></i>
<div class="t c" style="clip-path:inset(0 60px 0 0);left:3509px;top:168px;width:136px;height:15px;line-height:15px">FALSCH</div>
<div class="t c" style="clip-path:inset(0 60px 0 0);left:3509px;top:183px;width:136px;height:15px;line-height:15px">FALSCH</div>
<div class="t c" style="clip-path:inset(0 60px 0 0);left:3509px;top:198px;width:136px;height:15px;line-height:15px">FALSCH</div>
<div class="t c" style="clip-path:inset(0 60px 0 0);left:3509px;top:213px;width:136px;height:15px;line-height:15px">FALSCH</div>
<div class="t c" style="clip-path:inset(0 60px 0 0);left:3509px;top:228px;width:136px;height:15px;line-height:15px">FALSCH</div>
<div class="t c" style="clip-path:inset(0 60px 0 0);left:3509px;top:243px;width:136px;height:15px;line-height:15px">FALSCH</div>
<div class="t c" style="clip-path:inset(0 60px 0 0);left:3509px;top:258px;width:136px;height:15px;line-height:15px">FALSCH</div>
<i style="left:28px;top:181px;width:3557px;height:1px;background:#808080"></i>
<i style="left:28px;top:196px;width:3557px;height:1px;background:#000"></i>
<i style="left:28px;top:211px;width:3557px;height:1px;background:#000"></i>
<i style="left:28px;top:226px;width:3557px;height:1px;background:#000"></i>
<i style="left:28px;top:241px;width:3557px;height:1px;background:#000"></i>
<i style="left:28px;top:256px;width:3557px;height:1px;background:#000"></i>
<i style="left:28px;top:271px;width:3557px;height:1px;background:#000"></i>
<i style="left:28px;top:286px;width:3557px;height:1px;background:#000"></i>
<i style="left:28px;top:301px;width:3557px;height:1px;background:#000"></i>
<i style="left:227px;top:135px;width:1px;height:197px;background:#444"></i>
<i style="left:338px;top:166px;width:1px;height:166px;background:#000"></i>
<i style="left:432px;top:135px;width:2px;height:197px;background:#000"></i>
<i style="left:519px;top:135px;width:2px;height:197px;background:#000"></i>
<i style="left:575px;top:166px;width:1px;height:166px;background:#000"></i>
<i style="left:670px;top:135px;width:2px;height:197px;background:#000"></i>
<i style="left:810px;top:135px;width:2px;height:197px;background:#000"></i>
<i style="left:962px;top:166px;width:1px;height:166px;background:#000"></i>
<i style="left:1090px;top:166px;width:1px;height:166px;background:#000"></i>
<i style="left:1222px;top:166px;width:1px;height:166px;background:#000"></i>
<i style="left:1391px;top:166px;width:1px;height:166px;background:#000"></i>
<i style="left:1497px;top:135px;width:2px;height:197px;background:#000"></i>
<i style="left:1617px;top:166px;width:1px;height:166px;background:#000"></i>
<i style="left:1759px;top:135px;width:2px;height:16px;background:#000"></i>
<i style="left:1760px;top:166px;width:1px;height:166px;background:#000"></i>
<i style="left:1882px;top:166px;width:1px;height:166px;background:#000"></i>
<i style="left:1999px;top:166px;width:1px;height:166px;background:#000"></i>
<i style="left:2119px;top:166px;width:1px;height:166px;background:#000"></i>
<i style="left:2214px;top:166px;width:1px;height:166px;background:#000"></i>
<i style="left:2340px;top:135px;width:2px;height:197px;background:#000"></i>
<i style="left:2444px;top:166px;width:1px;height:166px;background:#000"></i>
<i style="left:2539px;top:166px;width:1px;height:166px;background:#000"></i>
<i style="left:2634px;top:166px;width:1px;height:166px;background:#000"></i>
<i style="left:2745px;top:166px;width:1px;height:166px;background:#000"></i>
<i style="left:2933px;top:166px;width:1px;height:166px;background:#000"></i>
<i style="left:3012px;top:166px;width:1px;height:166px;background:#000"></i>
<i style="left:3122px;top:135px;width:2px;height:197px;background:#000"></i>
<i style="left:3260px;top:135px;width:2px;height:32px;background:#000"></i>
<i style="left:3260px;top:196px;width:2px;height:136px;background:#000"></i>
<i style="left:3380px;top:151px;width:1px;height:15px;background:#d0d7e5"></i>
<i style="left:3380px;top:181px;width:1px;height:151px;background:#000"></i>
<i style="left:3507px;top:135px;width:2px;height:197px;background:#000"></i>
<i style="left:28px;top:150px;width:3557px;height:1px;background:#000"></i>
<i style="left:28px;top:165px;width:3557px;height:2px;background:#000"></i>
<div class="t b c" style="left:29px;top:137px;width:198px;height:15px;line-height:15px">FileName</div>
<div class="t b" style="white-space:pre;left:230px;top:137px;width:203px;height:15px;line-height:15px"> Vault-State</div>
<div class="t b c" style="left:521px;top:137px;width:150px;height:15px;line-height:15px">Unsaved changes</div>
<div class="t b c" style="clip-path:inset(0 19px 0 24px);left:649px;top:137px;width:179px;height:15px;line-height:15px">Inventor-Release-Info</div>
<div class="t b c" style="left:812px;top:137px;width:686px;height:15px;line-height:15px">File References</div>
<div class="t b c" style="left:1499px;top:137px;width:261px;height:15px;line-height:15px">Geometry</div>
<div class="t b c" style="left:1761px;top:137px;width:580px;height:15px;line-height:15px">BOM</div>
<div class="t b c" style="left:2342px;top:137px;width:781px;height:15px;line-height:15px">MassProperties</div>
<div class="t b" style="left:3126px;top:137px;width:135px;height:15px;line-height:15px">PosReps</div>
<div class="t b c" style="left:3262px;top:137px;width:246px;height:15px;line-height:15px">Sheet Metal Parts</div>
<div class="t b" style="left:30px;top:152px;width:197px;height:15px;line-height:15px">DisplayName</div>
<svg style="position:absolute;left:221px;top:151px" width="6" height="6"><path d="M0 0h6v6z" fill="#f00"/></svg>
<div class="t b" style="left:229px;top:152px;width:109px;height:15px;line-height:15px">CRC32_Vault_2</div>
<svg style="position:absolute;left:332px;top:151px" width="6" height="6"><path d="M0 0h6v6z" fill="#f00"/></svg>
<div class="t b" style="left:340px;top:152px;width:93px;height:15px;line-height:15px">CRC32_Disk</div>
<svg style="position:absolute;left:426px;top:151px" width="6" height="6"><path d="M0 0h6v6z" fill="#f00"/></svg>
<div class="t b" style="left:435px;top:152px;width:85px;height:15px;line-height:15px">DeltaSheet</div>
<svg style="position:absolute;left:513px;top:151px" width="6" height="6"><path d="M0 0h6v6z" fill="#f00"/></svg>
<div class="t b" style="left:522px;top:152px;width:53px;height:15px;line-height:15px">Dirty</div>
<svg style="position:absolute;left:569px;top:151px" width="6" height="6"><path d="M0 0h6v6z" fill="#f00"/></svg>
<div class="t b" style="left:577px;top:152px;width:94px;height:15px;line-height:15px">RecentChanges</div>
<svg style="position:absolute;left:664px;top:151px" width="6" height="6"><path d="M0 0h6v6z" fill="#f00"/></svg>
<div class="t b" style="left:673px;top:152px;width:138px;height:15px;line-height:15px">Last Updated With</div>
<svg style="position:absolute;left:804px;top:151px" width="6" height="6"><path d="M0 0h6v6z" fill="#f00"/></svg>
<div class="t b" style="left:813px;top:152px;width:149px;height:15px;line-height:15px">FileNames outdated</div>
<svg style="position:absolute;left:956px;top:151px" width="6" height="6"><path d="M0 0h6v6z" fill="#f00"/></svg>
<div class="t b" style="left:964px;top:152px;width:126px;height:15px;line-height:15px">HasRedirections</div>
<svg style="position:absolute;left:1084px;top:151px" width="6" height="6"><path d="M0 0h6v6z" fill="#f00"/></svg>
<div class="t b" style="left:1092px;top:152px;width:130px;height:15px;line-height:15px">InternalNames outdated</div>
<svg style="position:absolute;left:1216px;top:151px" width="6" height="6"><path d="M0 0h6v6z" fill="#f00"/></svg>
<div class="t b" style="left:1224px;top:152px;width:167px;height:15px;line-height:15px">DataBaseRevisionIDs outdated</div>
<svg style="position:absolute;left:1385px;top:151px" width="6" height="6"><path d="M0 0h6v6z" fill="#f00"/></svg>
<div class="t b" style="left:1393px;top:152px;width:105px;height:15px;line-height:15px">OLE-FILETIMEs outdated</div>
<svg style="position:absolute;left:1491px;top:151px" width="6" height="6"><path d="M0 0h6v6z" fill="#f00"/></svg>
<div class="t b" style="left:1500px;top:152px;width:117px;height:15px;line-height:15px">RequiresUpdate</div>
<svg style="position:absolute;left:1611px;top:151px" width="6" height="6"><path d="M0 0h6v6z" fill="#f00"/></svg>
<div class="t b" style="left:1619px;top:152px;width:141px;height:15px;line-height:15px">SavedWithoutUpdating</div>
<svg style="position:absolute;left:1753px;top:151px" width="6" height="6"><path d="M0 0h6v6z" fill="#f00"/></svg>
<div class="t b" style="left:1762px;top:152px;width:120px;height:15px;line-height:15px">BOMRequiresUpdate</div>
<svg style="position:absolute;left:1876px;top:151px" width="6" height="6"><path d="M0 0h6v6z" fill="#f00"/></svg>
<div class="t b" style="left:1884px;top:152px;width:115px;height:15px;line-height:15px">BOMUpdatePending</div>
<svg style="position:absolute;left:1993px;top:151px" width="6" height="6"><path d="M0 0h6v6z" fill="#f00"/></svg>
<div class="t b" style="left:2001px;top:152px;width:118px;height:15px;line-height:15px">PartNo_RAM</div>
<svg style="position:absolute;left:2113px;top:151px" width="6" height="6"><path d="M0 0h6v6z" fill="#f00"/></svg>
<div class="t b" style="left:2121px;top:152px;width:93px;height:15px;line-height:15px">BOMStructure</div>
<svg style="position:absolute;left:2208px;top:151px" width="6" height="6"><path d="M0 0h6v6z" fill="#f00"/></svg>
<div class="t b" style="left:2216px;top:152px;width:125px;height:15px;line-height:15px">BOMNeedsMigration</div>
<svg style="position:absolute;left:2334px;top:151px" width="6" height="6"><path d="M0 0h6v6z" fill="#f00"/></svg>
<div class="t b" style="left:2343px;top:152px;width:101px;height:15px;line-height:15px">ValidMassProps</div>
<svg style="position:absolute;left:2438px;top:151px" width="6" height="6"><path d="M0 0h6v6z" fill="#f00"/></svg>
<div class="t b" style="left:2446px;top:152px;width:93px;height:15px;line-height:15px">Mass_RAM</div>
<svg style="position:absolute;left:2533px;top:151px" width="6" height="6"><path d="M0 0h6v6z" fill="#f00"/></svg>
<div class="t b" style="left:2541px;top:152px;width:93px;height:15px;line-height:15px">Mass_Disk</div>
<svg style="position:absolute;left:2628px;top:151px" width="6" height="6"><path d="M0 0h6v6z" fill="#f00"/></svg>
<div class="t b" style="left:2636px;top:152px;width:109px;height:15px;line-height:15px">MassMissMatch</div>
<div class="t b" style="left:2747px;top:152px;width:186px;height:15px;line-height:15px">BrowserNodeLabel</div>
<svg style="position:absolute;left:2927px;top:151px" width="6" height="6"><path d="M0 0h6v6z" fill="#f00"/></svg>
<div class="t b" style="left:2935px;top:152px;width:77px;height:15px;line-height:15px">Densities</div>
<div class="t b" style="left:3014px;top:152px;width:109px;height:15px;line-height:15px">Densities-Delta</div>
<div class="t b" style="left:3125px;top:152px;width:136px;height:15px;line-height:15px">OutdatedPosReps</div>
<svg style="position:absolute;left:3254px;top:151px" width="6" height="6"><path d="M0 0h6v6z" fill="#f00"/></svg>
<div class="t b" style="left:3263px;top:152px;width:117px;height:15px;line-height:15px">HasFlatPattern</div>
<svg style="position:absolute;left:3374px;top:151px" width="6" height="6"><path d="M0 0h6v6z" fill="#f00"/></svg>
<div class="t b" style="left:3382px;top:152px;width:126px;height:15px;line-height:15px">FlatPatternMass</div>
<svg style="position:absolute;left:3501px;top:151px" width="6" height="6"><path d="M0 0h6v6z" fill="#f00"/></svg>
<div class="t b" style="clip-path:inset(0 60px 0 0);left:3510px;top:152px;width:135px;height:15px;line-height:15px">HasCacheGraphics</div>
<i style="left:3380px;top:167px;width:1px;height:14px;background:#fff"></i>
<div class="t l" style="left:3126px;top:167px;width:381px;height:15px;line-height:15px">Prozesskopf unten; min_Radius; max_Radius; kleinster Reifen; groesster Reifen</div>
<div class="t l" style="left:3126px;top:182px;width:381px;height:15px;line-height:15px">eingefahren; Radius =120 mm; Radius = 470 mm;</div>
<i style="left:29px;top:116px;width:3556px;height:19px;background:linear-gradient(#f9fbfd,#eef2f8 40%,#dde4ef 60%,#d3dbe9)"></i>
<i style="left:29px;top:135px;width:3556px;height:1px;background:#9eb6ce"></i>
<i style="left:226px;top:116px;width:2px;height:20px;background:#8a9cb8"></i>
<i style="left:338px;top:116px;width:1px;height:20px;background:#a4b9d4"></i>
<i style="left:433px;top:116px;width:1px;height:20px;background:#a4b9d4"></i>
<i style="left:520px;top:116px;width:1px;height:20px;background:#a4b9d4"></i>
<i style="left:575px;top:116px;width:1px;height:20px;background:#a4b9d4"></i>
<i style="left:670px;top:116px;width:2px;height:20px;background:#8a9cb8"></i>
<i style="left:810px;top:116px;width:2px;height:20px;background:#8a9cb8"></i>
<i style="left:962px;top:116px;width:1px;height:20px;background:#a4b9d4"></i>
<i style="left:1090px;top:116px;width:1px;height:20px;background:#a4b9d4"></i>
<i style="left:1222px;top:116px;width:1px;height:20px;background:#a4b9d4"></i>
<i style="left:1391px;top:116px;width:1px;height:20px;background:#a4b9d4"></i>
<i style="left:1498px;top:116px;width:1px;height:20px;background:#a4b9d4"></i>
<i style="left:1617px;top:116px;width:1px;height:20px;background:#a4b9d4"></i>
<i style="left:1759px;top:116px;width:2px;height:20px;background:#8a9cb8"></i>
<i style="left:1882px;top:116px;width:1px;height:20px;background:#a4b9d4"></i>
<i style="left:1998px;top:116px;width:2px;height:20px;background:#8a9cb8"></i>
<i style="left:2118px;top:116px;width:2px;height:20px;background:#8a9cb8"></i>
<i style="left:2214px;top:116px;width:1px;height:20px;background:#a4b9d4"></i>
<i style="left:2340px;top:116px;width:2px;height:20px;background:#8a9cb8"></i>
<i style="left:2444px;top:116px;width:1px;height:20px;background:#a4b9d4"></i>
<i style="left:2539px;top:116px;width:1px;height:20px;background:#a4b9d4"></i>
<i style="left:2634px;top:116px;width:1px;height:20px;background:#a4b9d4"></i>
<i style="left:2745px;top:116px;width:1px;height:20px;background:#a4b9d4"></i>
<i style="left:2932px;top:116px;width:2px;height:20px;background:#8a9cb8"></i>
<i style="left:3012px;top:116px;width:1px;height:20px;background:#a4b9d4"></i>
<i style="left:3123px;top:116px;width:1px;height:20px;background:#a4b9d4"></i>
<i style="left:3261px;top:116px;width:1px;height:20px;background:#a4b9d4"></i>
<i style="left:3380px;top:116px;width:1px;height:20px;background:#a4b9d4"></i>
<i style="left:3508px;top:116px;width:1px;height:20px;background:#a4b9d4"></i>
<div class="t h" style="left:29px;top:116px;width:198px;height:19px;line-height:19px">A</div>
<div class="t h" style="left:228px;top:116px;width:110px;height:19px;line-height:19px">H</div>
<div class="t h" style="left:339px;top:116px;width:94px;height:19px;line-height:19px">I</div>
<div class="t h" style="left:434px;top:116px;width:86px;height:19px;line-height:19px">J</div>
<div class="t h" style="left:521px;top:116px;width:54px;height:19px;line-height:19px">K</div>
<div class="t h" style="left:576px;top:116px;width:95px;height:19px;line-height:19px">L</div>
<div class="t h" style="left:672px;top:116px;width:139px;height:19px;line-height:19px">O</div>
<div class="t h" style="left:812px;top:116px;width:150px;height:19px;line-height:19px">Q</div>
<div class="t h" style="left:963px;top:116px;width:127px;height:19px;line-height:19px">R</div>
<div class="t h" style="left:1091px;top:116px;width:131px;height:19px;line-height:19px">S</div>
<div class="t h" style="left:1223px;top:116px;width:168px;height:19px;line-height:19px">T</div>
<div class="t h" style="left:1392px;top:116px;width:106px;height:19px;line-height:19px">U</div>
<div class="t h" style="left:1499px;top:116px;width:118px;height:19px;line-height:19px">V</div>
<div class="t h" style="left:1618px;top:116px;width:142px;height:19px;line-height:19px">W</div>
<div class="t h" style="left:1761px;top:116px;width:121px;height:19px;line-height:19px">Y</div>
<div class="t h" style="left:1883px;top:116px;width:116px;height:19px;line-height:19px">Z</div>
<div class="t h" style="left:2000px;top:116px;width:119px;height:19px;line-height:19px">AB</div>
<div class="t h" style="left:2120px;top:116px;width:94px;height:19px;line-height:19px">AD</div>
<div class="t h" style="left:2215px;top:116px;width:126px;height:19px;line-height:19px">AE</div>
<div class="t h" style="left:2342px;top:116px;width:102px;height:19px;line-height:19px">AH</div>
<div class="t h" style="left:2445px;top:116px;width:94px;height:19px;line-height:19px">AI</div>
<div class="t h" style="left:2540px;top:116px;width:94px;height:19px;line-height:19px">AJ</div>
<div class="t h" style="left:2635px;top:116px;width:110px;height:19px;line-height:19px">AK</div>
<div class="t h" style="left:2746px;top:116px;width:187px;height:19px;line-height:19px">AL</div>
<div class="t h" style="left:2934px;top:116px;width:78px;height:19px;line-height:19px">AO</div>
<div class="t h" style="left:3013px;top:116px;width:110px;height:19px;line-height:19px">AP</div>
<div class="t h" style="left:3124px;top:116px;width:137px;height:19px;line-height:19px">AQ</div>
<div class="t h" style="left:3262px;top:116px;width:118px;height:19px;line-height:19px">AR</div>
<div class="t h" style="left:3381px;top:116px;width:127px;height:19px;line-height:19px">AS</div>
<div class="t h" style="clip-path:inset(0 60px 0 0);left:3509px;top:116px;width:136px;height:19px;line-height:19px">AT</div>
<i style="left:0px;top:116px;width:28px;height:216px;background:#e4ecf7"></i>
<i style="left:28px;top:116px;width:1px;height:216px;background:#9eb6ce"></i>
<i style="left:0px;top:135px;width:28px;height:1px;background:#9eb6ce"></i>
<i style="left:0px;top:150px;width:28px;height:1px;background:#9eb6ce"></i>
<i style="left:0px;top:166px;width:28px;height:1px;background:#9eb6ce"></i>
<i style="left:0px;top:181px;width:28px;height:1px;background:#9eb6ce"></i>
<i style="left:0px;top:196px;width:28px;height:1px;background:#9eb6ce"></i>
<i style="left:0px;top:211px;width:28px;height:1px;background:#9eb6ce"></i>
<i style="left:0px;top:226px;width:28px;height:1px;background:#9eb6ce"></i>
<i style="left:0px;top:241px;width:28px;height:1px;background:#9eb6ce"></i>
<i style="left:0px;top:256px;width:28px;height:1px;background:#9eb6ce"></i>
<i style="left:0px;top:271px;width:28px;height:1px;background:#9eb6ce"></i>
<i style="left:0px;top:286px;width:28px;height:1px;background:#9eb6ce"></i>
<i style="left:0px;top:301px;width:28px;height:1px;background:#9eb6ce"></i>
<div class="t h" style="left:0;top:134px;width:27px;height:15px;line-height:15px;text-align:center;clip-path:inset(0px 0 0px 0)">1</div>
<div class="t h" style="left:0;top:149px;width:27px;height:15px;line-height:15px;text-align:center;clip-path:inset(0px 0 0px 0)">2</div>
<div class="t h" style="left:0;top:165px;width:27px;height:15px;line-height:15px;text-align:center;clip-path:inset(0px 0 0px 0)">3</div>
<div class="t h" style="left:0;top:180px;width:27px;height:15px;line-height:15px;text-align:center;clip-path:inset(0px 0 0px 0)">4</div>
<div class="t h" style="left:0;top:195px;width:27px;height:15px;line-height:15px;text-align:center;clip-path:inset(0px 0 0px 0)">5</div>
<div class="t h" style="left:0;top:210px;width:27px;height:15px;line-height:15px;text-align:center;clip-path:inset(0px 0 0px 0)">6</div>
<div class="t h" style="left:0;top:225px;width:27px;height:15px;line-height:15px;text-align:center;clip-path:inset(0px 0 0px 0)">7</div>
<div class="t h" style="left:0;top:240px;width:27px;height:15px;line-height:15px;text-align:center;clip-path:inset(0px 0 0px 0)">8</div>
<div class="t h" style="left:0;top:255px;width:27px;height:15px;line-height:15px;text-align:center;clip-path:inset(0px 0 0px 0)">9</div>
<div class="t h" style="left:0;top:270px;width:27px;height:15px;line-height:15px;text-align:center;clip-path:inset(0px 0 0px 0)">220</div>
<div class="t h" style="left:0;top:285px;width:27px;height:15px;line-height:15px;text-align:center;clip-path:inset(0px 0 0px 0)">221</div>
<i style="left:0px;top:116px;width:28px;height:19px;background:linear-gradient(#b4c9ea,#a6bee4);box-shadow:0 0 0 1px #c9d8ef inset"></i>
<svg style="position:absolute;left:12px;top:121px" width="12" height="11"><defs><linearGradient id="cg116" x1="0" y1="0" x2="0" y2="1"><stop offset="0" stop-color="#fff"/><stop offset="1" stop-color="#d5e0f1"/></linearGradient></defs><path d="M11.500 0v11H0z" fill="url(#cg116)"/></svg>
<i style="left:3585px;top:116px;width:9px;height:232px;background:#c9d5e7"></i>
<i style="left:0px;top:332px;width:3585px;height:16px;background:linear-gradient(#dde7f6 0,#d6e2f4 40%,#bfd2ee 50%,#c3d5ef 85%,#e3ecf8 100%)"></i>
<i style="left:0px;top:332px;width:3585px;height:1px;background:#b9c7dd"></i>
<svg style="position:absolute;left:5px;top:336px" width="8" height="8"><path d="M0 0h1.600v8H0zM7.500 0v8L2.500 4z" fill="#2f4f8f"/></svg>
<svg style="position:absolute;left:21px;top:336px" width="6" height="8"><path d="M5.500 0v8L.5 4z" fill="#2f4f8f"/></svg>
<svg style="position:absolute;left:35px;top:336px" width="6" height="8"><path d="M.5 0v8L5.500 4z" fill="#2f4f8f"/></svg>
<svg style="position:absolute;left:48px;top:336px" width="8" height="8"><path d="M6.400 0H8v8H6.400zM.5 0v8L5.500 4z" fill="#2f4f8f"/></svg>
<svg style="position:absolute;left:0;top:332px" width="3585" height="16"><path d="M338.7 16H350.7V13z" fill="#9fb6da"/><path d="M345.7 14.5Q347.7 14.5 348.7 13L361.2 1" stroke="#8195b7" fill="none"/><path d="M347.7 15Q349.7 15 350.5 13L362.8 1" stroke="#f6f9fd" stroke-width="1.3" fill="none"/><path d="M490.5 16H502.5V13z" fill="#9fb6da"/><path d="M497.5 14.5Q499.5 14.5 500.5 13L513.0 1" stroke="#8195b7" fill="none"/><path d="M499.5 15Q501.5 15 502.3 13L514.6 1" stroke="#f6f9fd" stroke-width="1.3" fill="none"/><path d="M639.5 16H651.5V13z" fill="#9fb6da"/><path d="M646.5 14.5Q648.5 14.5 649.5 13L662.0 1" stroke="#8195b7" fill="none"/><path d="M648.5 15Q650.5 15 651.3 13L663.6 1" stroke="#f6f9fd" stroke-width="1.3" fill="none"/><path d="M787.4 16H799.4V13z" fill="#9fb6da"/><path d="M794.4 14.5Q796.4 14.5 797.4 13L809.9 1" stroke="#8195b7" fill="none"/><path d="M796.4 15Q798.4 15 799.2 13L811.5 1" stroke="#f6f9fd" stroke-width="1.3" fill="none"/><path d="M1018.1 16H1030.1V13z" fill="#9fb6da"/><path d="M1025.1 14.5Q1027.1 14.5 1028.1 13L1040.6 1" stroke="#8195b7" fill="none"/><path d="M1027.1 15Q1029.1 15 1029.9 13L1042.2 1" stroke="#f6f9fd" stroke-width="1.3" fill="none"/><path d="M1190.1 16H1202.1V13z" fill="#9fb6da"/><path d="M1197.1 14.5Q1199.1 14.5 1200.1 13L1212.6 1" stroke="#8195b7" fill="none"/><path d="M1199.1 15Q1201.1 15 1201.9 13L1214.2 1" stroke="#f6f9fd" stroke-width="1.3" fill="none"/><path d="M1404.1 16H1416.1V13z" fill="#9fb6da"/><path d="M1411.1 14.5Q1413.1 14.5 1414.1 13L1426.6 1" stroke="#8195b7" fill="none"/><path d="M1413.1 15Q1415.1 15 1415.9 13L1428.2 1" stroke="#f6f9fd" stroke-width="1.3" fill="none"/><path d="M1554.7 16H1566.7V13z" fill="#9fb6da"/><path d="M1561.7 14.5Q1563.7 14.5 1564.7 13L1577.2 1" stroke="#8195b7" fill="none"/><path d="M1563.7 15Q1565.7 15 1566.5 13L1578.8 1" stroke="#f6f9fd" stroke-width="1.3" fill="none"/><path d="M1591.6 16H1603.6V13z" fill="#9fb6da"/><path d="M1598.6 14.5Q1600.6 14.5 1601.6 13L1614.1 1" stroke="#8195b7" fill="none"/><path d="M1600.6 15Q1602.6 15 1603.4 13L1615.7 1" stroke="#f6f9fd" stroke-width="1.3" fill="none"/><path d="M1740.1 16H1752.1V13z" fill="#9fb6da"/><path d="M1747.1 14.5Q1749.1 14.5 1750.1 13L1762.6 1" stroke="#8195b7" fill="none"/><path d="M1749.1 15Q1751.1 15 1751.9 13L1764.2 1" stroke="#f6f9fd" stroke-width="1.3" fill="none"/><path d="M1888.5 16H1900.5V13z" fill="#9fb6da"/><path d="M1895.5 14.5Q1897.5 14.5 1898.5 13L1911.0 1" stroke="#8195b7" fill="none"/><path d="M1897.5 15Q1899.5 15 1900.3 13L1912.6 1" stroke="#f6f9fd" stroke-width="1.3" fill="none"/><path d="M2037.4 16H2049.4V13z" fill="#9fb6da"/><path d="M2044.4 14.5Q2046.4 14.5 2047.4 13L2059.9 1" stroke="#8195b7" fill="none"/><path d="M2046.4 15Q2048.4 15 2049.2 13L2061.5 1" stroke="#f6f9fd" stroke-width="1.3" fill="none"/><path d="M2252.2 16H2264.2V13z" fill="#9fb6da"/><path d="M2259.2 14.5Q2261.2 14.5 2262.2 13L2274.7 1" stroke="#8195b7" fill="none"/><path d="M2261.2 15Q2263.2 15 2264.0 13L2276.3 1" stroke="#f6f9fd" stroke-width="1.3" fill="none"/><path d="M2401.2 16H2413.2V13z" fill="#9fb6da"/><path d="M2408.2 14.5Q2410.2 14.5 2411.2 13L2423.7 1" stroke="#8195b7" fill="none"/><path d="M2410.2 15Q2412.2 15 2413.0 13L2425.3 1" stroke="#f6f9fd" stroke-width="1.3" fill="none"/><path d="M2614.5 16H2626.5V13z" fill="#9fb6da"/><path d="M2621.5 14.5Q2623.5 14.5 2624.5 13L2637.0 1" stroke="#8195b7" fill="none"/><path d="M2623.5 15Q2625.5 15 2626.3 13L2638.6 1" stroke="#f6f9fd" stroke-width="1.3" fill="none"/><path d="M2764.1 16H2776.1V13z" fill="#9fb6da"/><path d="M2771.1 14.5Q2773.1 14.5 2774.1 13L2786.6 1" stroke="#8195b7" fill="none"/><path d="M2773.1 15Q2775.1 15 2775.9 13L2788.2 1" stroke="#f6f9fd" stroke-width="1.3" fill="none"/><path d="M2978.1 16H2990.1V13z" fill="#9fb6da"/><path d="M2985.1 14.5Q2987.1 14.5 2988.1 13L3000.6 1" stroke="#8195b7" fill="none"/><path d="M2987.1 15Q2989.1 15 2989.9 13L3002.2 1" stroke="#f6f9fd" stroke-width="1.3" fill="none"/><path d="M3127.5 16H3139.5V13z" fill="#9fb6da"/><path d="M3134.5 14.5Q3136.5 14.5 3137.5 13L3150.0 1" stroke="#8195b7" fill="none"/><path d="M3136.5 15Q3138.5 15 3139.3 13L3151.6 1" stroke="#f6f9fd" stroke-width="1.3" fill="none"/><path d="M3339.8 16H3351.8V13z" fill="#9fb6da"/><path d="M3346.8 14.5Q3348.8 14.5 3349.8 13L3362.3 1" stroke="#8195b7" fill="none"/><path d="M3348.8 15Q3350.8 15 3351.6 13L3363.9 1" stroke="#f6f9fd" stroke-width="1.3" fill="none"/><path d="M3417.0 16H3429.0V13z" fill="#9fb6da"/><path d="M3424.0 14.5Q3426.0 14.5 3427.0 13L3439.5 1" stroke="#8195b7" fill="none"/><path d="M3426.0 15Q3428.0 15 3428.8 13L3441.1 1" stroke="#f6f9fd" stroke-width="1.3" fill="none"/><path d="M61.6 -1V13Q61.6 15 63.6 15H129.2Q131.2 15 132.2 13.5L145.2 -1z" fill="#fff" stroke="#8a9cbc"/><path d="M62.1 0H145.2" stroke="#fff" stroke-width="2.200"/><defs><linearGradient id="tg332" x1="0" y1="0" x2="0" y2="1"><stop offset="0" stop-color="#b6c9e7"/><stop offset=".4" stop-color="#a1b9df"/><stop offset="1" stop-color="#9ab4dc"/></linearGradient></defs><path d="M3455.0 16L3467.0 1H3585V16z" fill="url(#tg332)"/><path d="M3455.0 15L3466.0 1" stroke="#8195b7" fill="none"/></svg>
<i style="left:61px;top:333px;width:1px;height:15px;background:#8b9cb9"></i>
<div class="t ui" style="color:#1e3a78;font-size:12.1px;text-align:center;font-weight:bold;left:-20.8px;top:333px;width:240px;height:16px;line-height:16px">Overview</div>
<div class="t ui" style="color:#1e3a78;font-size:12.1px;text-align:center;left:124.5px;top:333px;width:240px;height:16px;line-height:16px">16099-000-00-00.iam - PosReps</div>
<div class="t ui" style="color:#1e3a78;font-size:12.1px;text-align:center;left:309.5px;top:333px;width:240px;height:16px;line-height:16px">16099-000-00-00.iam</div>
<div class="t ui" style="color:#1e3a78;font-size:12.1px;text-align:center;left:459.5px;top:333px;width:240px;height:16px;line-height:16px">16xxx-700-03-00.iam</div>
<div class="t ui" style="color:#1e3a78;font-size:12.1px;text-align:center;left:608.5px;top:333px;width:240px;height:16px;line-height:16px">16xxx-702-01-00.iam</div>
<div class="t ui" style="color:#1e3a78;font-size:12.1px;text-align:center;left:797.2px;top:333px;width:240px;height:16px;line-height:16px">16xxx-900-05-00 HD.iam - PosRep</div>
<div class="t ui" style="color:#1e3a78;font-size:12.1px;text-align:center;left:998.5px;top:333px;width:240px;height:16px;line-height:16px">16xxx-900-05-00 HD.iam</div>
<div class="t ui" style="color:#1e3a78;font-size:12.1px;text-align:center;left:1191.3px;top:333px;width:240px;height:16px;line-height:16px">16xxx-920-00-00.iam - PosReps</div>
<div class="t ui" style="color:#1e3a78;font-size:12.1px;text-align:center;left:1373.1px;top:333px;width:240px;height:16px;line-height:16px">16xxx-800-03-00.iam</div>
<div class="t ui" style="color:#1e3a78;font-size:12.1px;text-align:center;left:1466.0px;top:333px;width:240px;height:16px;line-height:16px">|   |</div>
<div class="t ui" style="color:#1e3a78;font-size:12.1px;text-align:center;left:1559.8px;top:333px;width:240px;height:16px;line-height:16px">16xxx-200-00-00.iam</div>
<div class="t ui" style="color:#1e3a78;font-size:12.1px;text-align:center;left:1708.8px;top:333px;width:240px;height:16px;line-height:16px">16xxx-250-02-00.iam</div>
<div class="t ui" style="color:#1e3a78;font-size:12.1px;text-align:center;left:1857.5px;top:333px;width:240px;height:16px;line-height:16px">16xxx-250-01-00.iam</div>
<div class="t ui" style="color:#1e3a78;font-size:12.1px;text-align:center;left:2039.0px;top:333px;width:240px;height:16px;line-height:16px">16xxx-300-17-00.iam - PosReps</div>
<div class="t ui" style="color:#1e3a78;font-size:12.1px;text-align:center;left:2221.2px;top:333px;width:240px;height:16px;line-height:16px">16xxx-300-17-00.iam</div>
<div class="t ui" style="color:#1e3a78;font-size:12.1px;text-align:center;left:2402.3px;top:333px;width:240px;height:16px;line-height:16px">16xxx-301-02-00.iam - PosReps</div>
<div class="t ui" style="color:#1e3a78;font-size:12.1px;text-align:center;left:2583.5px;top:333px;width:240px;height:16px;line-height:16px">16xxx-301-02-00.iam</div>
<div class="t ui" style="color:#1e3a78;font-size:12.1px;text-align:center;left:2765.3px;top:333px;width:240px;height:16px;line-height:16px">16xxx-306-01-00.iam - PosReps</div>
<div class="t ui" style="color:#1e3a78;font-size:12.1px;text-align:center;left:2947.1px;top:333px;width:240px;height:16px;line-height:16px">16xxx-306-01-00.iam</div>
<div class="t ui" style="color:#1e3a78;font-size:12.1px;text-align:center;left:3128.5px;top:333px;width:240px;height:16px;line-height:16px">16xxx-110-09-00.iam - PosReps</div>
<div class="t ui" style="color:#1e3a78;font-size:12.1px;text-align:center;left:3271.7px;top:333px;width:240px;height:16px;line-height:16px">Template</div>
<svg style="position:absolute;left:3438px;top:334px" width="14" height="12"><rect x="3.500" y="3.500" width="9" height="7" fill="#fff" stroke="#5a6f96"/><path d="M3 0v6M0 3h6M1 1l4 4M5 1 1 5" stroke="#e8a020" stroke-width="1.200"/></svg>
<i style="left:0px;top:348px;width:3600px;height:10px;background:#cad5e6"></i>
<i style="left:0px;top:357px;width:3600px;height:1px;background:#b3bfd2"></i>
<i style="left:0px;top:358px;width:3594px;height:32px;background:linear-gradient(#e0e6ef,#d7dee9 65%,#dde3ed 95%,#e6ebf3)"></i>
<div class="t ui" style="color:#a1a9b4;font-size:12px;white-space:pre;left:5px;top:368px;width:400px;height:18px;line-height:18px">CheckRefTemplate1:3  [Kompatibilitätsmodus]</div>
<i style="left:0px;top:390px;width:3585px;height:212px;background:#fff"></i>
<i style="left:240px;top:410px;width:1px;height:192px;background:#d0d7e5"></i>
<i style="left:460px;top:410px;width:1px;height:192px;background:#d0d7e5"></i>
<i style="left:560px;top:410px;width:1px;height:192px;background:#d0d7e5"></i>
<i style="left:780px;top:410px;width:1px;height:192px;background:#d0d7e5"></i>
<i style="left:863px;top:410px;width:1px;height:192px;background:#d0d7e5"></i>
<i style="left:981px;top:410px;width:1px;height:192px;background:#d0d7e5"></i>
<i style="left:1139px;top:410px;width:1px;height:192px;background:#d0d7e5"></i>
<i style="left:1251px;top:410px;width:1px;height:192px;background:#d0d7e5"></i>
<i style="left:1486px;top:410px;width:1px;height:192px;background:#d0d7e5"></i>
<i style="left:1722px;top:410px;width:1px;height:192px;background:#d0d7e5"></i>
<i style="left:1867px;top:410px;width:1px;height:192px;background:#d0d7e5"></i>
<i style="left:2026px;top:410px;width:1px;height:192px;background:#d0d7e5"></i>
<i style="left:2187px;top:410px;width:1px;height:192px;background:#d0d7e5"></i>
<i style="left:2346px;top:410px;width:1px;height:192px;background:#d0d7e5"></i>
<i style="left:2507px;top:410px;width:1px;height:192px;background:#d0d7e5"></i>
<i style="left:2667px;top:410px;width:1px;height:192px;background:#d0d7e5"></i>
<i style="left:2826px;top:410px;width:1px;height:192px;background:#d0d7e5"></i>
<i style="left:2987px;top:410px;width:1px;height:192px;background:#d0d7e5"></i>
<i style="left:3147px;top:410px;width:1px;height:192px;background:#d0d7e5"></i>
<i style="left:3309px;top:410px;width:1px;height:192px;background:#d0d7e5"></i>
<i style="left:3396px;top:410px;width:1px;height:192px;background:#d0d7e5"></i>
<i style="left:3484px;top:410px;width:1px;height:192px;background:#d0d7e5"></i>
<i style="left:3572px;top:410px;width:1px;height:192px;background:#d0d7e5"></i>
<i style="left:29px;top:426px;width:3556px;height:1px;background:#d0d7e5"></i>
<i style="left:29px;top:445px;width:3556px;height:1px;background:#d0d7e5"></i>
<i style="left:29px;top:460px;width:3556px;height:1px;background:#d0d7e5"></i>
<i style="left:29px;top:475px;width:3556px;height:1px;background:#d0d7e5"></i>
<i style="left:29px;top:490px;width:3556px;height:1px;background:#d0d7e5"></i>
<i style="left:29px;top:505px;width:3556px;height:1px;background:#d0d7e5"></i>
<i style="left:29px;top:520px;width:3556px;height:1px;background:#d0d7e5"></i>
<i style="left:29px;top:535px;width:3556px;height:1px;background:#d0d7e5"></i>
<i style="left:29px;top:550px;width:3556px;height:1px;background:#d0d7e5"></i>
<i style="left:29px;top:565px;width:3556px;height:1px;background:#d0d7e5"></i>
<i style="left:29px;top:580px;width:3556px;height:1px;background:#d0d7e5"></i>
<i style="left:29px;top:595px;width:3556px;height:1px;background:#d0d7e5"></i>
<i style="left:29px;top:410px;width:431px;height:16px;background:#fff"></i>
<i style="left:29px;top:427px;width:3555px;height:18px;background:#fff"></i>
<div class="t l" style="left:31px;top:461px;width:209px;height:15px;line-height:15px">16xxx-900-02.iam</div>
<div class="t l" style="left:31px;top:476px;width:209px;height:15px;line-height:15px">16xxx-900-03.iam</div>
<div class="t l" style="left:31px;top:491px;width:209px;height:15px;line-height:15px">16xxx-900-14.iam</div>
<div class="t l" style="left:31px;top:506px;width:209px;height:15px;line-height:15px">16xxx-900-16.iam</div>
<div class="t l" style="left:31px;top:521px;width:209px;height:15px;line-height:15px">16xxx-901-00-00.iam</div>
<div class="t l" style="left:31px;top:536px;width:209px;height:15px;line-height:15px">16xxx-910-00-00.iam</div>
<div class="t l" style="left:31px;top:551px;width:209px;height:15px;line-height:15px">16xxx-920-00-00.iam</div>
<div class="t l" style="left:31px;top:566px;width:209px;height:15px;line-height:15px">16xxx-930-00-00.iam</div>
<div class="t l" style="left:31px;top:581px;width:209px;height:15px;line-height:15px">2500.09.150.0, l=17 Glieder.iam</div>
<div class="t l" style="left:31px;top:596px;width:209px;height:15px;line-height:15px">42247.iam</div>
<i style="left:240px;top:460px;width:221px;height:16px;background:#0f0"></i>
<i style="left:240px;top:475px;width:221px;height:16px;background:#0f0"></i>
<i style="left:240px;top:490px;width:221px;height:16px;background:#0f0"></i>
<i style="left:240px;top:505px;width:221px;height:16px;background:#0f0"></i>
<i style="left:240px;top:520px;width:221px;height:16px;background:#0f0"></i>
<i style="left:240px;top:535px;width:221px;height:16px;background:#0f0"></i>
<i style="left:240px;top:550px;width:221px;height:16px;background:#0f0"></i>
<i style="left:240px;top:565px;width:221px;height:16px;background:#0f0"></i>
<i style="left:240px;top:580px;width:221px;height:16px;background:#ff0"></i>
<i style="left:240px;top:595px;width:221px;height:7px;background:#ff0"></i>
<div class="t rj" style="left:241px;top:462px;width:217px;height:15px;line-height:15px"><span>D:\Vault\4JET_IV\16xxx\Baugruppen\BG900 - Prozesskopf\16xxx-900-02.iam</span></div>
<div class="t rj" style="left:241px;top:477px;width:217px;height:15px;line-height:15px"><span>D:\Vault\4JET_IV\16xxx\Baugruppen\BG900 - Prozesskopf\16xxx-900-03.iam</span></div>
<div class="t rj" style="left:241px;top:492px;width:217px;height:15px;line-height:15px"><span>D:\Vault\4JET_IV\16xxx\Baugruppen\BG900 - Prozesskopf\16xxx-900-14.iam</span></div>
<div class="t rj" style="left:241px;top:507px;width:217px;height:15px;line-height:15px"><span>D:\Vault\4JET_IV\16xxx\Baugruppen\BG900 - Prozesskopf\16xxx-900-16.iam</span></div>
<div class="t rj" style="left:241px;top:522px;width:217px;height:15px;line-height:15px"><span>D:\Vault\4JET_IV\16xxx\Baugruppen\BG900 - Prozesskopf\16xxx-901-00-00.iam</span></div>
<div class="t rj" style="left:241px;top:537px;width:217px;height:15px;line-height:15px"><span>D:\Vault\4JET_IV\16xxx\Baugruppen\BG900 - Prozesskopf\16xxx-910-00-00.iam</span></div>
<div class="t rj" style="left:241px;top:552px;width:217px;height:15px;line-height:15px"><span>D:\Vault\4JET_IV\16xxx\Baugruppen\BG900 - Prozesskopf\16xxx-920-00-00.iam</span></div>
<div class="t rj" style="left:241px;top:567px;width:217px;height:15px;line-height:15px"><span>D:\Vault\4JET_IV\16xxx\Baugruppen\BG900 - Prozesskopf\16xxx-930-00-00.iam</span></div>
<div class="t rj" style="left:241px;top:582px;width:217px;height:15px;line-height:15px"><span>D:\Vault\4JET_IV\16xxx\konfektionierte Zukaufteile\igus\2500.09.150.0, l=17 Glieder.iam</span></div>
<div class="t rj" style="left:241px;top:597px;width:217px;height:15px;line-height:15px"><span>D:\Vault\Bibliotheken\Kaufteile\Inventor\VEL\04\42247.iam</span></div>
<i style="left:560px;top:460px;width:221px;height:16px;background:#0f0"></i>
<i style="left:560px;top:475px;width:221px;height:16px;background:#0f0"></i>
<i style="left:560px;top:490px;width:221px;height:16px;background:#0f0"></i>
<i style="left:560px;top:505px;width:221px;height:16px;background:#0f0"></i>
<i style="left:560px;top:520px;width:221px;height:16px;background:#0f0"></i>
<i style="left:560px;top:535px;width:221px;height:16px;background:#0f0"></i>
<i style="left:560px;top:550px;width:221px;height:16px;background:#0f0"></i>
<i style="left:560px;top:565px;width:221px;height:16px;background:#0f0"></i>
<i style="left:560px;top:580px;width:221px;height:16px;background:#ff0"></i>
<i style="left:560px;top:595px;width:221px;height:7px;background:#ff0"></i>
<div class="t rj" style="left:561px;top:462px;width:217px;height:15px;line-height:15px"><span>D:\Vault\4JET_IV\16xxx\Baugruppen\BG900 - Prozesskopf\16xxx-900-02.iam</span></div>
<div class="t rj" style="left:561px;top:477px;width:217px;height:15px;line-height:15px"><span>D:\Vault\4JET_IV\16xxx\Baugruppen\BG900 - Prozesskopf\16xxx-900-03.iam</span></div>
<div class="t rj" style="left:561px;top:492px;width:217px;height:15px;line-height:15px"><span>D:\Vault\4JET_IV\16xxx\Baugruppen\BG900 - Prozesskopf\16xxx-900-14.iam</span></div>
<div class="t rj" style="left:561px;top:507px;width:217px;height:15px;line-height:15px"><span>D:\Vault\4JET_IV\16xxx\Baugruppen\BG900 - Prozesskopf\16xxx-900-16.iam</span></div>
<div class="t rj" style="left:561px;top:522px;width:217px;height:15px;line-height:15px"><span>D:\Vault\4JET_IV\16xxx\Baugruppen\BG900 - Prozesskopf\16xxx-901-00-00.iam</span></div>
<div class="t rj" style="left:561px;top:537px;width:217px;height:15px;line-height:15px"><span>D:\Vault\4JET_IV\16xxx\Baugruppen\BG900 - Prozesskopf\16xxx-910-00-00.iam</span></div>
<div class="t rj" style="left:561px;top:552px;width:217px;height:15px;line-height:15px"><span>D:\Vault\4JET_IV\16xxx\Baugruppen\BG900 - Prozesskopf\16xxx-920-00-00.iam</span></div>
<div class="t rj" style="left:561px;top:567px;width:217px;height:15px;line-height:15px"><span>D:\Vault\4JET_IV\16xxx\Baugruppen\BG900 - Prozesskopf\16xxx-930-00-00.iam</span></div>
<div class="t rj" style="left:561px;top:582px;width:217px;height:15px;line-height:15px"><span>D:\Vault\4JET_IV\16xxx\konfektionierte Zukaufteile\igus\2500.09.150.0, l=17 Glieder.iam</span></div>
<div class="t rj" style="left:561px;top:597px;width:217px;height:15px;line-height:15px"><span>D:\Vault\Bibliotheken\Kaufteile\Inventor\VEL\04\42247.iam</span></div>
<div class="t " style="left:463px;top:462px;width:97px;height:15px;line-height:15px">n/a</div>
<div class="t " style="left:463px;top:477px;width:97px;height:15px;line-height:15px">n/a</div>
<div class="t " style="left:463px;top:492px;width:97px;height:15px;line-height:15px">n/a</div>
<div class="t " style="left:463px;top:507px;width:97px;height:15px;line-height:15px">n/a</div>
<div class="t " style="left:463px;top:522px;width:97px;height:15px;line-height:15px">n/a</div>
<div class="t " style="left:463px;top:537px;width:97px;height:15px;line-height:15px">n/a</div>
<div class="t " style="left:463px;top:552px;width:97px;height:15px;line-height:15px">n/a</div>
<div class="t " style="left:463px;top:567px;width:97px;height:15px;line-height:15px">n/a</div>
<div class="t " style="left:463px;top:582px;width:97px;height:15px;line-height:15px">n/a</div>
<div class="t " style="left:463px;top:597px;width:97px;height:15px;line-height:15px">n/a</div>
<div class="t " style="left:783px;top:462px;width:80px;height:15px;line-height:15px">Assembly</div>
<div class="t " style="left:783px;top:477px;width:80px;height:15px;line-height:15px">Assembly</div>
<div class="t " style="left:783px;top:492px;width:80px;height:15px;line-height:15px">Assembly</div>
<div class="t " style="left:783px;top:507px;width:80px;height:15px;line-height:15px">Assembly</div>
<div class="t " style="left:783px;top:522px;width:80px;height:15px;line-height:15px">Assembly</div>
<div class="t " style="left:783px;top:537px;width:80px;height:15px;line-height:15px">Assembly</div>
<div class="t " style="left:783px;top:552px;width:80px;height:15px;line-height:15px">Assembly</div>
<div class="t " style="left:783px;top:567px;width:80px;height:15px;line-height:15px">Assembly</div>
<div class="t " style="left:783px;top:582px;width:80px;height:15px;line-height:15px">Assembly</div>
<div class="t " style="left:783px;top:597px;width:80px;height:15px;line-height:15px">Assembly</div>
<i style="left:863px;top:460px;width:119px;height:16px;background:#0f0"></i>
<i style="left:863px;top:475px;width:119px;height:16px;background:#0f0"></i>
<i style="left:863px;top:490px;width:119px;height:16px;background:#0f0"></i>
<i style="left:863px;top:505px;width:119px;height:16px;background:#0f0"></i>
<i style="left:863px;top:520px;width:119px;height:16px;background:#0f0"></i>
<i style="left:863px;top:535px;width:119px;height:16px;background:#0f0"></i>
<i style="left:863px;top:550px;width:119px;height:16px;background:#0f0"></i>
<i style="left:863px;top:565px;width:119px;height:16px;background:#0f0"></i>
<i style="left:863px;top:580px;width:119px;height:16px;background:#0f0"></i>
<i style="left:863px;top:595px;width:119px;height:7px;background:#0f0"></i>
<div class="t c" style="left:864px;top:462px;width:117px;height:15px;line-height:15px">FALSCH</div>
<div class="t c" style="left:864px;top:477px;width:117px;height:15px;line-height:15px">FALSCH</div>
<div class="t c" style="left:864px;top:492px;width:117px;height:15px;line-height:15px">FALSCH</div>
<div class="t c" style="left:864px;top:507px;width:117px;height:15px;line-height:15px">FALSCH</div>
<div class="t c" style="left:864px;top:522px;width:117px;height:15px;line-height:15px">FALSCH</div>
<div class="t c" style="left:864px;top:537px;width:117px;height:15px;line-height:15px">FALSCH</div>
<div class="t c" style="left:864px;top:552px;width:117px;height:15px;line-height:15px">FALSCH</div>
<div class="t c" style="left:864px;top:567px;width:117px;height:15px;line-height:15px">FALSCH</div>
<div class="t c" style="left:864px;top:582px;width:117px;height:15px;line-height:15px">FALSCH</div>
<div class="t c" style="left:864px;top:597px;width:117px;height:15px;line-height:15px">FALSCH</div>
<div class="t c" style="left:982px;top:462px;width:157px;height:15px;line-height:15px">FALSCH</div>
<div class="t c" style="left:982px;top:477px;width:157px;height:15px;line-height:15px">FALSCH</div>
<div class="t c" style="left:982px;top:492px;width:157px;height:15px;line-height:15px">FALSCH</div>
<div class="t c" style="left:982px;top:507px;width:157px;height:15px;line-height:15px">FALSCH</div>
<div class="t c" style="left:982px;top:522px;width:157px;height:15px;line-height:15px">FALSCH</div>
<div class="t c" style="left:982px;top:537px;width:157px;height:15px;line-height:15px">FALSCH</div>
<div class="t c" style="left:982px;top:552px;width:157px;height:15px;line-height:15px">FALSCH</div>
<div class="t c" style="left:982px;top:567px;width:157px;height:15px;line-height:15px">FALSCH</div>
<div class="t c" style="left:982px;top:582px;width:157px;height:15px;line-height:15px">FALSCH</div>
<div class="t c" style="left:982px;top:597px;width:157px;height:15px;line-height:15px">FALSCH</div>
<div class="t c" style="left:1140px;top:462px;width:111px;height:15px;line-height:15px">FALSCH</div>
<div class="t c" style="left:1140px;top:477px;width:111px;height:15px;line-height:15px">FALSCH</div>
<div class="t c" style="left:1140px;top:492px;width:111px;height:15px;line-height:15px">FALSCH</div>
<div class="t c" style="left:1140px;top:507px;width:111px;height:15px;line-height:15px">FALSCH</div>
<div class="t c" style="left:1140px;top:522px;width:111px;height:15px;line-height:15px">FALSCH</div>
<div class="t c" style="left:1140px;top:537px;width:111px;height:15px;line-height:15px">FALSCH</div>
<div class="t c" style="left:1140px;top:552px;width:111px;height:15px;line-height:15px">FALSCH</div>
<div class="t c" style="left:1140px;top:567px;width:111px;height:15px;line-height:15px">FALSCH</div>
<div class="t c" style="left:1140px;top:582px;width:111px;height:15px;line-height:15px">FALSCH</div>
<div class="t c" style="left:1140px;top:597px;width:111px;height:15px;line-height:15px">FALSCH</div>
<i style="left:1251px;top:460px;width:236px;height:16px;background:#ff0"></i>
<i style="left:1251px;top:475px;width:236px;height:16px;background:#0f0"></i>
<i style="left:1251px;top:490px;width:236px;height:16px;background:#0f0"></i>
<i style="left:1251px;top:505px;width:236px;height:16px;background:#ff0"></i>
<i style="left:1251px;top:520px;width:236px;height:16px;background:#ff0"></i>
<i style="left:1251px;top:535px;width:236px;height:16px;background:#ff0"></i>
<i style="left:1251px;top:550px;width:236px;height:16px;background:#ff0"></i>
<i style="left:1251px;top:565px;width:236px;height:16px;background:#0f0"></i>
<i style="left:1251px;top:580px;width:236px;height:16px;background:#0f0"></i>
<i style="left:1251px;top:595px;width:236px;height:7px;background:#0f0"></i>
<div class="t " style="left:1254px;top:462px;width:232px;height:15px;line-height:15px">{A0699675-4F8B-C14E-80FA-A5B98F58C6F2}</div>
<div class="t " style="left:1254px;top:477px;width:232px;height:15px;line-height:15px">{39D8F3F4-4525-779C-C541-4180C6048D31}</div>
<div class="t " style="left:1254px;top:492px;width:232px;height:15px;line-height:15px">{49EFB1AE-4049-7E22-8CD7-5AA5FB717E60}</div>
<div class="t " style="left:1254px;top:507px;width:232px;height:15px;line-height:15px">{E96B2D28-4409-20FE-D62F-E191FF0492B5}</div>
<div class="t " style="left:1254px;top:522px;width:232px;height:15px;line-height:15px">{21045AC0-430A-13FB-E104-0FA0834F4C2A}</div>
<div class="t " style="left:1254px;top:537px;width:232px;height:15px;line-height:15px">{1A9E5170-4C8B-5AF5-BBB0-E8B583DA4B77}</div>
<div class="t " style="left:1254px;top:552px;width:232px;height:15px;line-height:15px">{C01EB1D6-4A90-687A-0C21-6C9B42F48E13}</div>
<div class="t " style="left:1254px;top:567px;width:232px;height:15px;line-height:15px">{1D7157DA-4E48-680C-9FEC-058D4D872A96}</div>
<div class="t " style="left:1254px;top:582px;width:232px;height:15px;line-height:15px">{3A46D048-4ED6-9BEE-BCB5-FC9A08F98D04}</div>
<div class="t " style="left:1254px;top:597px;width:232px;height:15px;line-height:15px">{5B004EE0-4BA4-B0C6-C10B-460740B01F5C}</div>
<i style="left:1486px;top:460px;width:237px;height:16px;background:#ff0"></i>
<i style="left:1486px;top:475px;width:237px;height:16px;background:#0f0"></i>
<i style="left:1486px;top:490px;width:237px;height:16px;background:#0f0"></i>
<i style="left:1486px;top:505px;width:237px;height:16px;background:#ff0"></i>
<i style="left:1486px;top:520px;width:237px;height:16px;background:#ff0"></i>
<i style="left:1486px;top:535px;width:237px;height:16px;background:#ff0"></i>
<i style="left:1486px;top:550px;width:237px;height:16px;background:#ff0"></i>
<i style="left:1486px;top:565px;width:237px;height:16px;background:#0f0"></i>
<i style="left:1486px;top:580px;width:237px;height:16px;background:#0f0"></i>
<i style="left:1486px;top:595px;width:237px;height:7px;background:#0f0"></i>
<div class="t " style="left:1489px;top:462px;width:233px;height:15px;line-height:15px">{DDE576CB-407D-DD38-D5CF-65965FF52E1A}</div>
<div class="t " style="left:1489px;top:477px;width:233px;height:15px;line-height:15px">{39D8F3F4-4525-779C-C541-4180C6048D31}</div>
<div class="t " style="left:1489px;top:492px;width:233px;height:15px;line-height:15px">{49EFB1AE-4049-7E22-8CD7-5AA5FB717E60}</div>
<div class="t " style="left:1489px;top:507px;width:233px;height:15px;line-height:15px">{7491C7E9-4719-1AAA-9FB3-F8A83E1D7C55}</div>
<div class="t " style="left:1489px;top:522px;width:233px;height:15px;line-height:15px">{715309F3-4AE5-3E71-6A67-899058554D0E}</div>
<div class="t " style="left:1489px;top:537px;width:233px;height:15px;line-height:15px">{BA93DD85-451A-FC28-73B9-22BBFB5C4A91}</div>
<div class="t " style="left:1489px;top:552px;width:233px;height:15px;line-height:15px">{62414669-4EDF-957A-21FD-3D9820267F3B}</div>
<div class="t " style="left:1489px;top:567px;width:233px;height:15px;line-height:15px">{1D7157DA-4E48-680C-9FEC-058D4D872A96}</div>
<div class="t " style="left:1489px;top:582px;width:233px;height:15px;line-height:15px">{3A46D048-4ED6-9BEE-BCB5-FC9A08F98D04}</div>
<div class="t " style="left:1489px;top:597px;width:233px;height:15px;line-height:15px">{5B004EE0-4BA4-B0C6-C10B-460740B01F5C}</div>
<i style="left:1722px;top:460px;width:146px;height:16px;background:#0f0"></i>
<div class="t c" style="left:1723px;top:462px;width:144px;height:15px;line-height:15px">WAHR</div>
<div class="t " style="left:1725px;top:477px;width:142px;height:15px;line-height:15px">n/a</div>
<div class="t " style="left:1725px;top:492px;width:142px;height:15px;line-height:15px">n/a</div>
<i style="left:1722px;top:505px;width:146px;height:16px;background:#0f0"></i>
<div class="t c" style="left:1723px;top:507px;width:144px;height:15px;line-height:15px">WAHR</div>
<i style="left:1722px;top:520px;width:146px;height:16px;background:#0f0"></i>
<div class="t c" style="left:1723px;top:522px;width:144px;height:15px;line-height:15px">WAHR</div>
<i style="left:1722px;top:535px;width:146px;height:16px;background:#0f0"></i>
<div class="t c" style="left:1723px;top:537px;width:144px;height:15px;line-height:15px">WAHR</div>
<i style="left:1722px;top:550px;width:146px;height:16px;background:#0f0"></i>
<div class="t c" style="left:1723px;top:552px;width:144px;height:15px;line-height:15px">WAHR</div>
<div class="t " style="left:1725px;top:567px;width:142px;height:15px;line-height:15px">n/a</div>
<div class="t " style="left:1725px;top:582px;width:142px;height:15px;line-height:15px">n/a</div>
<div class="t " style="left:1725px;top:597px;width:142px;height:15px;line-height:15px">n/a</div>
<i style="left:1867px;top:460px;width:160px;height:16px;background:#0f0"></i>
<i style="left:1867px;top:475px;width:160px;height:16px;background:#0f0"></i>
<i style="left:1867px;top:490px;width:160px;height:16px;background:#0f0"></i>
<i style="left:1867px;top:505px;width:160px;height:16px;background:#0f0"></i>
<i style="left:1867px;top:520px;width:160px;height:16px;background:#0f0"></i>
<i style="left:1867px;top:535px;width:160px;height:16px;background:#0f0"></i>
<i style="left:1867px;top:550px;width:160px;height:16px;background:#ff0"></i>
<i style="left:1867px;top:565px;width:160px;height:16px;background:#0f0"></i>
<i style="left:1867px;top:580px;width:160px;height:16px;background:#0f0"></i>
<i style="left:1867px;top:595px;width:160px;height:7px;background:#0f0"></i>
<div class="t " style="left:1870px;top:462px;width:156px;height:15px;line-height:15px">{46D599D2-12D2-E6E6-7683-4C2B9A517E03}</div>
<div class="t " style="left:1870px;top:477px;width:156px;height:15px;line-height:15px">{58C6CF92-EC7A-4932-F900-4C2B9A517E03}</div>
<div class="t " style="left:1870px;top:492px;width:156px;height:15px;line-height:15px">{83C3F58F-7932-8AEC-3991-4C2B9A517E03}</div>
<div class="t " style="left:1870px;top:507px;width:156px;height:15px;line-height:15px">{0A9429E2-75E6-A235-9171-4C2B9A517E03}</div>
<div class="t " style="left:1870px;top:522px;width:156px;height:15px;line-height:15px">{A5E3F087-B7F7-DA39-D732-4C2B9A517E03}</div>
<div class="t " style="left:1870px;top:537px;width:156px;height:15px;line-height:15px">{70681023-AD63-BC6F-1913-4C2B9A517E03}</div>
<div class="t " style="left:1870px;top:552px;width:156px;height:15px;line-height:15px">{0A83D1E9-F61D-EC29-2411-4C2B9A517E03}</div>
<div class="t " style="left:1870px;top:567px;width:156px;height:15px;line-height:15px">{A2CD5299-A88F-0D7A-C3D5-4C2B9A517E03}</div>
<div class="t " style="left:1870px;top:582px;width:156px;height:15px;line-height:15px">{80E96C95-D165-72D4-1285-4C2B9A517E03}</div>
<div class="t " style="left:1870px;top:597px;width:156px;height:15px;line-height:15px">{5A0C5B7D-4B50-9956-0F14-4C2B9A517E03}</div>
<i style="left:2026px;top:460px;width:162px;height:16px;background:#0f0"></i>
<i style="left:2026px;top:475px;width:162px;height:16px;background:#0f0"></i>
<i style="left:2026px;top:490px;width:162px;height:16px;background:#0f0"></i>
<i style="left:2026px;top:505px;width:162px;height:16px;background:#0f0"></i>
<i style="left:2026px;top:520px;width:162px;height:16px;background:#0f0"></i>
<i style="left:2026px;top:535px;width:162px;height:16px;background:#0f0"></i>
<i style="left:2026px;top:550px;width:162px;height:16px;background:#ff0"></i>
<i style="left:2026px;top:565px;width:162px;height:16px;background:#0f0"></i>
<i style="left:2026px;top:580px;width:162px;height:16px;background:#0f0"></i>
<i style="left:2026px;top:595px;width:162px;height:7px;background:#0f0"></i>
<div class="t " style="left:2029px;top:462px;width:158px;height:15px;line-height:15px">{46D599D2-12D2-E6E6-7683-4C2B9A517E03}</div>
<div class="t " style="left:2029px;top:477px;width:158px;height:15px;line-height:15px">{58C6CF92-EC7A-4932-F900-4C2B9A517E03}</div>
<div class="t " style="left:2029px;top:492px;width:158px;height:15px;line-height:15px">{83C3F58F-7932-8AEC-3991-4C2B9A517E03}</div>
<div class="t " style="left:2029px;top:507px;width:158px;height:15px;line-height:15px">{0A9429E2-75E6-A235-9171-4C2B9A517E03}</div>
<div class="t " style="left:2029px;top:522px;width:158px;height:15px;line-height:15px">{A5E3F087-B7F7-DA39-D732-4C2B9A517E03}</div>
<div class="t " style="left:2029px;top:537px;width:158px;height:15px;line-height:15px">{70681023-AD63-BC6F-1913-4C2B9A517E03}</div>
<div class="t " style="left:2029px;top:552px;width:158px;height:15px;line-height:15px">{97ABD5A9-C3C0-6FAD-D6D2-4C2B9A517E03}</div>
<div class="t " style="left:2029px;top:567px;width:158px;height:15px;line-height:15px">{A2CD5299-A88F-0D7A-C3D5-4C2B9A517E03}</div>
<div class="t " style="left:2029px;top:582px;width:158px;height:15px;line-height:15px">{80E96C95-D165-72D4-1285-4C2B9A517E03}</div>
<div class="t " style="left:2029px;top:597px;width:158px;height:15px;line-height:15px">{5A0C5B7D-4B50-9956-0F14-4C2B9A517E03}</div>
<i style="left:2187px;top:460px;width:160px;height:16px;background:#0f0"></i>
<i style="left:2187px;top:475px;width:160px;height:16px;background:#0f0"></i>
<i style="left:2187px;top:490px;width:160px;height:16px;background:#0f0"></i>
<i style="left:2187px;top:505px;width:160px;height:16px;background:#0f0"></i>
<i style="left:2187px;top:520px;width:160px;height:16px;background:#0f0"></i>
<i style="left:2187px;top:535px;width:160px;height:16px;background:#0f0"></i>
<i style="left:2187px;top:550px;width:160px;height:16px;background:#f00"></i>
<i style="left:2187px;top:565px;width:160px;height:16px;background:#0f0"></i>
<i style="left:2187px;top:580px;width:160px;height:16px;background:#0f0"></i>
<i style="left:2187px;top:595px;width:160px;height:7px;background:#0f0"></i>
<div class="t " style="left:2190px;top:462px;width:156px;height:15px;line-height:15px">{37AAFA00-E75D-4828-85FE-E953C819C2D4}</div>
<div class="t " style="left:2190px;top:477px;width:156px;height:15px;line-height:15px">{6C1D532E-FD66-4A50-9A8A-A241519776C4}</div>
<div class="t " style="left:2190px;top:492px;width:156px;height:15px;line-height:15px">{716A7289-D378-47F2-99F4-E21580A92A2C}</div>
<div class="t " style="left:2190px;top:507px;width:156px;height:15px;line-height:15px">{21504199-3A54-4DA1-8E22-4F2C6C69C9B7}</div>
<div class="t " style="left:2190px;top:522px;width:156px;height:15px;line-height:15px">{8F42A0D1-5F9C-400A-8052-27D5414494AF}</div>
<div class="t " style="left:2190px;top:537px;width:156px;height:15px;line-height:15px">{92E002C1-F80B-4D0D-A917-336A7A9403BC}</div>
<div class="t " style="left:2190px;top:552px;width:156px;height:15px;line-height:15px">{5BD4D5E7-5C46-48F5-8811-A5443805F9BA}</div>
<div class="t " style="left:2190px;top:567px;width:156px;height:15px;line-height:15px">{0EE1C6BA-E926-4902-A453-3463A820D557}</div>
<div class="t " style="left:2190px;top:582px;width:156px;height:15px;line-height:15px">{43652307-6265-46AB-8316-CE17600D6F30}</div>
<div class="t " style="left:2190px;top:597px;width:156px;height:15px;line-height:15px">{01001F00-CB90-4991-B1F9-BF0444551895}</div>
<i style="left:2346px;top:460px;width:162px;height:16px;background:#0f0"></i>
<i style="left:2346px;top:475px;width:162px;height:16px;background:#0f0"></i>
<i style="left:2346px;top:490px;width:162px;height:16px;background:#0f0"></i>
<i style="left:2346px;top:505px;width:162px;height:16px;background:#0f0"></i>
<i style="left:2346px;top:520px;width:162px;height:16px;background:#0f0"></i>
<i style="left:2346px;top:535px;width:162px;height:16px;background:#0f0"></i>
<i style="left:2346px;top:550px;width:162px;height:16px;background:#f00"></i>
<i style="left:2346px;top:565px;width:162px;height:16px;background:#0f0"></i>
<i style="left:2346px;top:580px;width:162px;height:16px;background:#0f0"></i>
<i style="left:2346px;top:595px;width:162px;height:7px;background:#0f0"></i>
<div class="t " style="left:2349px;top:462px;width:318px;height:15px;line-height:15px">{37AAFA00-E75D-4828-85FE-E953C819C2D4}</div>
<div class="t " style="left:2349px;top:477px;width:318px;height:15px;line-height:15px">{6C1D532E-FD66-4A50-9A8A-A241519776C4}</div>
<div class="t " style="left:2349px;top:492px;width:318px;height:15px;line-height:15px">{716A7289-D378-47F2-99F4-E21580A92A2C}</div>
<div class="t " style="left:2349px;top:507px;width:318px;height:15px;line-height:15px">{21504199-3A54-4DA1-8E22-4F2C6C69C9B7}</div>
<div class="t " style="left:2349px;top:522px;width:318px;height:15px;line-height:15px">{8F42A0D1-5F9C-400A-8052-27D5414494AF}</div>
<div class="t " style="left:2349px;top:537px;width:318px;height:15px;line-height:15px">{92E002C1-F80B-4D0D-A917-336A7A9403BC}</div>
<div class="t " style="left:2349px;top:552px;width:318px;height:15px;line-height:15px">{3A63278B-F782-4B12-8168-A5443805F9BA}</div>
<div class="t " style="left:2349px;top:567px;width:318px;height:15px;line-height:15px">{0EE1C6BA-E926-4902-A453-3463A820D557}</div>
<div class="t " style="left:2349px;top:582px;width:318px;height:15px;line-height:15px">{43652307-6265-46AB-8316-CE17600D6F30}</div>
<div class="t " style="left:2349px;top:597px;width:318px;height:15px;line-height:15px">{01001F00-CB90-4991-B1F9-BF0444551895}</div>
<i style="left:2667px;top:460px;width:160px;height:16px;background:#f00"></i>
<i style="left:2667px;top:475px;width:160px;height:16px;background:#0f0"></i>
<i style="left:2667px;top:490px;width:160px;height:16px;background:#0f0"></i>
<i style="left:2667px;top:505px;width:160px;height:16px;background:#f00"></i>
<i style="left:2667px;top:520px;width:160px;height:16px;background:#f00"></i>
<i style="left:2667px;top:535px;width:160px;height:16px;background:#f00"></i>
<i style="left:2667px;top:550px;width:160px;height:16px;background:#f00"></i>
<i style="left:2667px;top:565px;width:160px;height:16px;background:#0f0"></i>
<i style="left:2667px;top:580px;width:160px;height:16px;background:#0f0"></i>
<i style="left:2667px;top:595px;width:160px;height:7px;background:#0f0"></i>
<div class="t " style="left:2670px;top:462px;width:156px;height:15px;line-height:15px">{9A7878FA-2F95-4497-8334-7D21A03C55F1}</div>
<div class="t " style="left:2670px;top:477px;width:156px;height:15px;line-height:15px">{137123F0-5BE4-4DB0-8004-7D21A03C55F1}</div>
<div class="t " style="left:2670px;top:492px;width:156px;height:15px;line-height:15px">{25B1110B-1779-465C-B274-7D21A03C55F1}</div>
<div class="t " style="left:2670px;top:507px;width:156px;height:15px;line-height:15px">{3B1F0F40-BC6E-48E7-B844-7D21A03C55F1}</div>
<div class="t " style="left:2670px;top:522px;width:156px;height:15px;line-height:15px">{53D89F4E-394B-4153-B474-7D21A03C55F1}</div>
<div class="t " style="left:2670px;top:537px;width:156px;height:15px;line-height:15px">{18205F94-FC2C-4AAC-AF14-7D21A03C55F1}</div>
<div class="t " style="left:2670px;top:552px;width:156px;height:15px;line-height:15px">{BE154ED0-2D41-4060-A6D4-7D21A03C55F1}</div>
<div class="t " style="left:2670px;top:567px;width:156px;height:15px;line-height:15px">{87D6BCB1-E455-4687-B104-7D21A03C55F1}</div>
<div class="t " style="left:2670px;top:582px;width:156px;height:15px;line-height:15px">{B8BBC85C-0BB8-4D1D-B404-7D21A03C55F1}</div>
<div class="t " style="left:2670px;top:597px;width:156px;height:15px;line-height:15px">{B0FCB49E-7EA0-490B-90C4-7D21A03C55F1}</div>
<i style="left:2826px;top:460px;width:162px;height:16px;background:#f00"></i>
<i style="left:2826px;top:475px;width:162px;height:16px;background:#0f0"></i>
<i style="left:2826px;top:490px;width:162px;height:16px;background:#0f0"></i>
<i style="left:2826px;top:505px;width:162px;height:16px;background:#f00"></i>
<i style="left:2826px;top:520px;width:162px;height:16px;background:#f00"></i>
<i style="left:2826px;top:535px;width:162px;height:16px;background:#f00"></i>
<i style="left:2826px;top:550px;width:162px;height:16px;background:#f00"></i>
<i style="left:2826px;top:565px;width:162px;height:16px;background:#0f0"></i>
<i style="left:2826px;top:580px;width:162px;height:16px;background:#0f0"></i>
<i style="left:2826px;top:595px;width:162px;height:7px;background:#0f0"></i>
<div class="t " style="left:2829px;top:462px;width:158px;height:15px;line-height:15px">{138C6971-E6AD-4F67-B0E4-7D21A03C55F1}</div>
<div class="t " style="left:2829px;top:477px;width:158px;height:15px;line-height:15px">{137123F0-5BE4-4DB0-8004-7D21A03C55F1}</div>
<div class="t " style="left:2829px;top:492px;width:158px;height:15px;line-height:15px">{25B1110B-1779-465C-B274-7D21A03C55F1}</div>
<div class="t " style="left:2829px;top:507px;width:158px;height:15px;line-height:15px">{1B7D476A-440E-4426-B604-7D21A03C55F1}</div>
<div class="t " style="left:2829px;top:522px;width:158px;height:15px;line-height:15px">{94463DFC-E953-478E-B704-7D21A03C55F1}</div>
<div class="t " style="left:2829px;top:537px;width:158px;height:15px;line-height:15px">{F9D12452-B6C3-4197-BE04-7D21A03C55F1}</div>
<div class="t " style="left:2829px;top:552px;width:158px;height:15px;line-height:15px">{AF0FFF0F-7E03-4A69-9C04-7D21A03C55F1}</div>
<div class="t " style="left:2829px;top:567px;width:158px;height:15px;line-height:15px">{87D6BCB1-E455-4687-B104-7D21A03C55F1}</div>
<div class="t " style="left:2829px;top:582px;width:158px;height:15px;line-height:15px">{B8BBC85C-0BB8-4D1D-B404-7D21A03C55F1}</div>
<div class="t " style="left:2829px;top:597px;width:158px;height:15px;line-height:15px">{B0FCB49E-7EA0-490B-90C4-7D21A03C55F1}</div>
<i style="left:2987px;top:460px;width:161px;height:16px;background:#0f0"></i>
<i style="left:2987px;top:475px;width:161px;height:16px;background:#0f0"></i>
<i style="left:2987px;top:490px;width:161px;height:16px;background:#0f0"></i>
<i style="left:2987px;top:505px;width:161px;height:16px;background:#0f0"></i>
<i style="left:2987px;top:520px;width:161px;height:16px;background:#0f0"></i>
<i style="left:2987px;top:535px;width:161px;height:16px;background:#0f0"></i>
<i style="left:2987px;top:550px;width:161px;height:16px;background:#f00"></i>
<i style="left:2987px;top:565px;width:161px;height:16px;background:#0f0"></i>
<i style="left:2987px;top:580px;width:161px;height:16px;background:#0f0"></i>
<i style="left:2987px;top:595px;width:161px;height:7px;background:#0f0"></i>
<div class="t " style="left:2990px;top:462px;width:157px;height:15px;line-height:15px">{12A9CAAB-B328-238E-E966-25E195A95246}</div>
<div class="t " style="left:2990px;top:477px;width:157px;height:15px;line-height:15px">{974E3713-53CB-16AF-0D78-E62F474603E7}</div>
<div class="t " style="left:2990px;top:492px;width:157px;height:15px;line-height:15px">{A8F74BDB-29F2-3F8A-6D2D-D17A0EFC99CF}</div>
<div class="t " style="left:2990px;top:507px;width:157px;height:15px;line-height:15px">{3D4DAE5F-13A4-047F-9DB1-CCF927935314}</div>
<div class="t " style="left:2990px;top:522px;width:157px;height:15px;line-height:15px">{1A043933-420D-7883-E33A-3C8CA5314092}</div>
<div class="t " style="left:2990px;top:537px;width:157px;height:15px;line-height:15px">{49382A74-1001-5743-B3D8-D5BAF08F8849}</div>
<div class="t " style="left:2990px;top:552px;width:157px;height:15px;line-height:15px">{B598E002-79B6-D6A4-DE1B-A473ADB5412A}</div>
<div class="t " style="left:2990px;top:567px;width:157px;height:15px;line-height:15px">{F8ED3A36-E47B-2416-70EC-DEF05BDA95A3}</div>
<div class="t " style="left:2990px;top:582px;width:157px;height:15px;line-height:15px">{BBEE6129-2391-417F-8895-2E6496E2222F}</div>
<div class="t " style="left:2990px;top:597px;width:157px;height:15px;line-height:15px">{21BB4BE7-EBBB-0B99-E999-19E0E90BC4E7}</div>
<i style="left:3147px;top:460px;width:163px;height:16px;background:#0f0"></i>
<i style="left:3147px;top:475px;width:163px;height:16px;background:#0f0"></i>
<i style="left:3147px;top:490px;width:163px;height:16px;background:#0f0"></i>
<i style="left:3147px;top:505px;width:163px;height:16px;background:#0f0"></i>
<i style="left:3147px;top:520px;width:163px;height:16px;background:#0f0"></i>
<i style="left:3147px;top:535px;width:163px;height:16px;background:#0f0"></i>
<i style="left:3147px;top:550px;width:163px;height:16px;background:#f00"></i>
<i style="left:3147px;top:565px;width:163px;height:16px;background:#0f0"></i>
<i style="left:3147px;top:580px;width:163px;height:16px;background:#0f0"></i>
<i style="left:3147px;top:595px;width:163px;height:7px;background:#0f0"></i>
<div class="t " style="left:3150px;top:462px;width:334px;height:15px;line-height:15px">{12A9CAAB-B328-238E-E966-25E195A95246}</div>
<div class="t " style="left:3150px;top:477px;width:334px;height:15px;line-height:15px">{974E3713-53CB-16AF-0D78-E62F474603E7}</div>
<div class="t " style="left:3150px;top:492px;width:334px;height:15px;line-height:15px">{A8F74BDB-29F2-3F8A-6D2D-D17A0EFC99CF}</div>
<div class="t " style="left:3150px;top:507px;width:334px;height:15px;line-height:15px">{3D4DAE5F-13A4-047F-9DB1-CCF927935314}</div>
<div class="t " style="left:3150px;top:522px;width:334px;height:15px;line-height:15px">{1A043933-420D-7883-E33A-3C8CA5314092}</div>
<div class="t " style="left:3150px;top:537px;width:334px;height:15px;line-height:15px">{49382A74-1001-5743-B3D8-D5BAF08F8849}</div>
<div class="t " style="left:3150px;top:552px;width:334px;height:15px;line-height:15px">{30AA884B-2D02-6D2F-1BDB-A473ADB5412A}</div>
<div class="t " style="left:3150px;top:567px;width:334px;height:15px;line-height:15px">{F8ED3A36-E47B-2416-70EC-DEF05BDA95A3}</div>
<div class="t " style="left:3150px;top:582px;width:334px;height:15px;line-height:15px">{BBEE6129-2391-417F-8895-2E6496E2222F}</div>
<div class="t " style="left:3150px;top:597px;width:334px;height:15px;line-height:15px">{21BB4BE7-EBBB-0B99-E999-19E0E90BC4E7}</div>
<div class="t b" style="left:31px;top:411px;width:209px;height:15px;line-height:15px">Referenced Document:</div>
<div class="t b" style="left:31px;top:432px;width:209px;height:15px;line-height:15px">FileName</div>
<div class="t b c" style="left:864px;top:432px;width:387px;height:15px;line-height:15px">Referenced File State</div>
<div class="t b c" style="left:1252px;top:432px;width:615px;height:15px;line-height:15px">DataBaseRevisionID / FILETIME</div>
<div class="t b c" style="left:1868px;top:432px;width:319px;height:15px;line-height:15px">ModelGeometryVersion</div>
<div class="t b c" style="left:2188px;top:432px;width:319px;height:15px;line-height:15px">GeometricRevisionID</div>
<div class="t b" style="left:2510px;top:432px;width:157px;height:15px;line-height:15px">SabotageFlag</div>
<div class="t b c" style="left:2668px;top:432px;width:319px;height:15px;line-height:15px">BOMRevisionID</div>
<div class="t b c" style="left:2988px;top:432px;width:321px;height:15px;line-height:15px">MassPropRevisionID</div>
<div class="t b" style="left:30px;top:447px;width:210px;height:15px;line-height:15px">DisplayName</div>
<svg style="position:absolute;left:234px;top:446px" width="6" height="6"><path d="M0 0h6v6z" fill="#f00"/></svg>
<div class="t b" style="left:242px;top:447px;width:218px;height:15px;line-height:15px">Expected</div>
<svg style="position:absolute;left:454px;top:446px" width="6" height="6"><path d="M0 0h6v6z" fill="#f00"/></svg>
<div class="t b" style="left:462px;top:447px;width:98px;height:15px;line-height:15px">Redirected</div>
<svg style="position:absolute;left:554px;top:446px" width="6" height="6"><path d="M0 0h6v6z" fill="#f00"/></svg>
<div class="t b" style="left:562px;top:447px;width:218px;height:15px;line-height:15px">Found</div>
<svg style="position:absolute;left:774px;top:446px" width="6" height="6"><path d="M0 0h6v6z" fill="#f00"/></svg>
<div class="t b" style="left:782px;top:447px;width:81px;height:15px;line-height:15px">DocSubType</div>
<div class="t b" style="left:865px;top:447px;width:116px;height:15px;line-height:15px">RequiresUpdate</div>
<svg style="position:absolute;left:975px;top:446px" width="6" height="6"><path d="M0 0h6v6z" fill="#f00"/></svg>
<div class="t b" style="left:983px;top:447px;width:156px;height:15px;line-height:15px">LastSavedWithoutUpdating</div>
<svg style="position:absolute;left:1133px;top:446px" width="6" height="6"><path d="M0 0h6v6z" fill="#f00"/></svg>
<div class="t b" style="left:1141px;top:447px;width:110px;height:15px;line-height:15px">HasDeltaSheet</div>
<svg style="position:absolute;left:1243px;top:446px" width="6" height="6"><path d="M0 0h6v6z" fill="#f00"/></svg>
<div class="t b" style="left:1253px;top:447px;width:233px;height:15px;line-height:15px">Expected</div>
<svg style="position:absolute;left:1480px;top:446px" width="6" height="6"><path d="M0 0h6v6z" fill="#f00"/></svg>
<div class="t b" style="left:1488px;top:447px;width:234px;height:15px;line-height:15px">Found</div>
<svg style="position:absolute;left:1716px;top:446px" width="6" height="6"><path d="M0 0h6v6z" fill="#f00"/></svg>
<div class="t b" style="left:1724px;top:447px;width:143px;height:15px;line-height:15px">ExpectedInHistory</div>
<svg style="position:absolute;left:1859px;top:446px" width="6" height="6"><path d="M0 0h6v6z" fill="#f00"/></svg>
<div class="t b" style="left:1869px;top:447px;width:157px;height:15px;line-height:15px">Expected_UFRxDoc</div>
<svg style="position:absolute;left:2020px;top:446px" width="6" height="6"><path d="M0 0h6v6z" fill="#f00"/></svg>
<div class="t b" style="left:2028px;top:447px;width:159px;height:15px;line-height:15px">Found</div>
<svg style="position:absolute;left:2179px;top:446px" width="6" height="6"><path d="M0 0h6v6z" fill="#f00"/></svg>
<div class="t b" style="left:2189px;top:447px;width:157px;height:15px;line-height:15px">Expected_1</div>
<svg style="position:absolute;left:2340px;top:446px" width="6" height="6"><path d="M0 0h6v6z" fill="#f00"/></svg>
<div class="t b" style="left:2348px;top:447px;width:159px;height:15px;line-height:15px">Found</div>
<svg style="position:absolute;left:2499px;top:446px" width="6" height="6"><path d="M0 0h6v6z" fill="#f00"/></svg>
<div class="t b" style="left:2509px;top:447px;width:158px;height:15px;line-height:15px">Raised</div>
<svg style="position:absolute;left:2659px;top:446px" width="6" height="6"><path d="M0 0h6v6z" fill="#f00"/></svg>
<div class="t b" style="left:2669px;top:447px;width:157px;height:15px;line-height:15px">Expected_UFRxDoc_1</div>
<svg style="position:absolute;left:2820px;top:446px" width="6" height="6"><path d="M0 0h6v6z" fill="#f00"/></svg>
<div class="t b" style="left:2828px;top:447px;width:159px;height:15px;line-height:15px">Found</div>
<svg style="position:absolute;left:2979px;top:446px" width="6" height="6"><path d="M0 0h6v6z" fill="#f00"/></svg>
<div class="t b" style="left:2989px;top:447px;width:158px;height:15px;line-height:15px">Expected_1</div>
<svg style="position:absolute;left:3141px;top:446px" width="6" height="6"><path d="M0 0h6v6z" fill="#f00"/></svg>
<div class="t b" style="left:3149px;top:447px;width:160px;height:15px;line-height:15px">Found</div>
<svg style="position:absolute;left:3301px;top:446px" width="6" height="6"><path d="M0 0h6v6z" fill="#f00"/></svg>
<i style="left:28px;top:424px;width:3557px;height:3px;background:#000"></i>
<i style="left:28px;top:445px;width:3557px;height:1px;background:#000"></i>
<i style="left:28px;top:460px;width:3557px;height:1px;background:#000"></i>
<i style="left:2985px;top:426px;width:3px;height:176px;background:#000"></i>
<i style="left:2505px;top:426px;width:3px;height:35px;background:#000"></i>
<i style="left:1865px;top:426px;width:3px;height:176px;background:#000"></i>
<i style="left:2665px;top:426px;width:3px;height:176px;background:#000"></i>
<i style="left:1249px;top:409px;width:3px;height:193px;background:#000"></i>
<i style="left:2185px;top:426px;width:3px;height:176px;background:#000"></i>
<i style="left:861px;top:426px;width:3px;height:176px;background:#000"></i>
<i style="left:3307px;top:426px;width:3px;height:35px;background:#000"></i>
<i style="left:29px;top:390px;width:3556px;height:19px;background:linear-gradient(#f9fbfd,#eef2f8 40%,#dde4ef 60%,#d3dbe9)"></i>
<i style="left:29px;top:409px;width:3556px;height:1px;background:#9eb6ce"></i>
<i style="left:240px;top:390px;width:1px;height:20px;background:#a4b9d4"></i>
<i style="left:460px;top:390px;width:1px;height:20px;background:#a4b9d4"></i>
<i style="left:560px;top:390px;width:1px;height:20px;background:#a4b9d4"></i>
<i style="left:779px;top:390px;width:2px;height:20px;background:#8a9cb8"></i>
<i style="left:863px;top:390px;width:1px;height:20px;background:#a4b9d4"></i>
<i style="left:981px;top:390px;width:1px;height:20px;background:#a4b9d4"></i>
<i style="left:1139px;top:390px;width:1px;height:20px;background:#a4b9d4"></i>
<i style="left:1250px;top:390px;width:2px;height:20px;background:#8a9cb8"></i>
<i style="left:1486px;top:390px;width:1px;height:20px;background:#a4b9d4"></i>
<i style="left:1722px;top:390px;width:1px;height:20px;background:#a4b9d4"></i>
<i style="left:1866px;top:390px;width:2px;height:20px;background:#8a9cb8"></i>
<i style="left:2025px;top:390px;width:2px;height:20px;background:#8a9cb8"></i>
<i style="left:2187px;top:390px;width:1px;height:20px;background:#a4b9d4"></i>
<i style="left:2345px;top:390px;width:2px;height:20px;background:#8a9cb8"></i>
<i style="left:2507px;top:390px;width:1px;height:20px;background:#a4b9d4"></i>
<i style="left:2666px;top:390px;width:2px;height:20px;background:#8a9cb8"></i>
<i style="left:2825px;top:390px;width:2px;height:20px;background:#8a9cb8"></i>
<i style="left:2986px;top:390px;width:2px;height:20px;background:#8a9cb8"></i>
<i style="left:3146px;top:390px;width:2px;height:20px;background:#8a9cb8"></i>
<i style="left:3308px;top:390px;width:2px;height:20px;background:#8a9cb8"></i>
<i style="left:3396px;top:390px;width:1px;height:20px;background:#a4b9d4"></i>
<i style="left:3484px;top:390px;width:1px;height:20px;background:#a4b9d4"></i>
<i style="left:3572px;top:390px;width:1px;height:20px;background:#a4b9d4"></i>
<div class="t h" style="left:29px;top:390px;width:211px;height:19px;line-height:19px">E</div>
<div class="t h" style="left:241px;top:390px;width:219px;height:19px;line-height:19px">F</div>
<div class="t h" style="left:461px;top:390px;width:99px;height:19px;line-height:19px">G</div>
<div class="t h" style="left:561px;top:390px;width:219px;height:19px;line-height:19px">H</div>
<div class="t h" style="left:781px;top:390px;width:82px;height:19px;line-height:19px">J</div>
<div class="t h" style="left:864px;top:390px;width:117px;height:19px;line-height:19px">K</div>
<div class="t h" style="left:982px;top:390px;width:157px;height:19px;line-height:19px">L</div>
<div class="t h" style="left:1140px;top:390px;width:111px;height:19px;line-height:19px">M</div>
<div class="t h" style="left:1252px;top:390px;width:234px;height:19px;line-height:19px">P</div>
<div class="t h" style="left:1487px;top:390px;width:235px;height:19px;line-height:19px">Q</div>
<div class="t h" style="left:1723px;top:390px;width:144px;height:19px;line-height:19px">R</div>
<div class="t h" style="left:1868px;top:390px;width:158px;height:19px;line-height:19px">AY</div>
<div class="t h" style="left:2027px;top:390px;width:160px;height:19px;line-height:19px">BA</div>
<div class="t h" style="left:2188px;top:390px;width:158px;height:19px;line-height:19px">BB</div>
<div class="t h" style="left:2347px;top:390px;width:160px;height:19px;line-height:19px">BD</div>
<div class="t h" style="left:2508px;top:390px;width:159px;height:19px;line-height:19px">BE</div>
<div class="t h" style="left:2668px;top:390px;width:158px;height:19px;line-height:19px">BI</div>
<div class="t h" style="left:2827px;top:390px;width:160px;height:19px;line-height:19px">BL</div>
<div class="t h" style="left:2988px;top:390px;width:159px;height:19px;line-height:19px">BS</div>
<div class="t h" style="left:3148px;top:390px;width:161px;height:19px;line-height:19px">BU</div>
<div class="t h" style="left:3310px;top:390px;width:86px;height:19px;line-height:19px">BY</div>
<div class="t h" style="left:3397px;top:390px;width:87px;height:19px;line-height:19px">BZ</div>
<div class="t h" style="left:3485px;top:390px;width:87px;height:19px;line-height:19px">CA</div>
<div class="t h" style="clip-path:inset(0 75px 0 0);left:3573px;top:390px;width:87px;height:19px;line-height:19px">CB</div>
<i style="left:0px;top:390px;width:28px;height:212px;background:#e4ecf7"></i>
<i style="left:28px;top:390px;width:1px;height:212px;background:#9eb6ce"></i>
<i style="left:0px;top:409px;width:28px;height:1px;background:#9eb6ce"></i>
<i style="left:0px;top:426px;width:28px;height:1px;background:#9eb6ce"></i>
<i style="left:0px;top:445px;width:28px;height:1px;background:#9eb6ce"></i>
<i style="left:0px;top:460px;width:28px;height:1px;background:#9eb6ce"></i>
<i style="left:0px;top:475px;width:28px;height:1px;background:#9eb6ce"></i>
<i style="left:0px;top:490px;width:28px;height:1px;background:#9eb6ce"></i>
<i style="left:0px;top:505px;width:28px;height:1px;background:#9eb6ce"></i>
<i style="left:0px;top:520px;width:28px;height:1px;background:#9eb6ce"></i>
<i style="left:0px;top:535px;width:28px;height:1px;background:#9eb6ce"></i>
<i style="left:0px;top:550px;width:28px;height:1px;background:#9eb6ce"></i>
<i style="left:0px;top:565px;width:28px;height:1px;background:#9eb6ce"></i>
<i style="left:0px;top:580px;width:28px;height:1px;background:#9eb6ce"></i>
<i style="left:0px;top:595px;width:28px;height:1px;background:#9eb6ce"></i>
<div class="t h" style="left:0;top:408px;width:27px;height:15px;line-height:15px;text-align:center;clip-path:inset(0px 0 0px 0)">1</div>
<div class="t h" style="left:0;top:429px;width:27px;height:15px;line-height:15px;text-align:center;clip-path:inset(0px 0 0px 0)">2</div>
<div class="t h" style="left:0;top:444px;width:27px;height:15px;line-height:15px;text-align:center;clip-path:inset(0px 0 0px 0)">3</div>
<div class="t h" style="left:0;top:459px;width:27px;height:15px;line-height:15px;text-align:center;clip-path:inset(0px 0 0px 0)">4</div>
<div class="t h" style="left:0;top:474px;width:27px;height:15px;line-height:15px;text-align:center;clip-path:inset(0px 0 0px 0)">5</div>
<div class="t h" style="left:0;top:489px;width:27px;height:15px;line-height:15px;text-align:center;clip-path:inset(0px 0 0px 0)">6</div>
<div class="t h" style="left:0;top:504px;width:27px;height:15px;line-height:15px;text-align:center;clip-path:inset(0px 0 0px 0)">7</div>
<div class="t h" style="left:0;top:519px;width:27px;height:15px;line-height:15px;text-align:center;clip-path:inset(0px 0 0px 0)">8</div>
<div class="t h" style="left:0;top:534px;width:27px;height:15px;line-height:15px;text-align:center;clip-path:inset(0px 0 0px 0)">9</div>
<div class="t h" style="left:0;top:549px;width:27px;height:15px;line-height:15px;text-align:center;clip-path:inset(0px 0 0px 0)">10</div>
<div class="t h" style="left:0;top:564px;width:27px;height:15px;line-height:15px;text-align:center;clip-path:inset(0px 0 0px 0)">11</div>
<div class="t h" style="left:0;top:579px;width:27px;height:15px;line-height:15px;text-align:center;clip-path:inset(0px 0 0px 0)">12</div>
<div class="t h" style="left:0;top:594px;width:27px;height:15px;line-height:15px;text-align:center;clip-path:inset(0px 0 8px 0)">13</div>
<i style="left:0px;top:390px;width:28px;height:19px;background:linear-gradient(#b4c9ea,#a6bee4);box-shadow:0 0 0 1px #c9d8ef inset"></i>
<svg style="position:absolute;left:12px;top:395px" width="12" height="11"><defs><linearGradient id="cg390" x1="0" y1="0" x2="0" y2="1"><stop offset="0" stop-color="#fff"/><stop offset="1" stop-color="#d5e0f1"/></linearGradient></defs><path d="M11.500 0v11H0z" fill="url(#cg390)"/></svg>
<i style="left:3585px;top:390px;width:9px;height:228px;background:#c9d5e7"></i>
<i style="left:0px;top:602px;width:3585px;height:16px;background:linear-gradient(#dde7f6 0,#d6e2f4 40%,#bfd2ee 50%,#c3d5ef 85%,#e3ecf8 100%)"></i>
<i style="left:0px;top:602px;width:3585px;height:1px;background:#b9c7dd"></i>
<svg style="position:absolute;left:5px;top:606px" width="8" height="8"><path d="M0 0h1.600v8H0zM7.500 0v8L2.500 4z" fill="#2f4f8f"/></svg>
<svg style="position:absolute;left:21px;top:606px" width="6" height="8"><path d="M5.500 0v8L.5 4z" fill="#2f4f8f"/></svg>
<svg style="position:absolute;left:35px;top:606px" width="6" height="8"><path d="M.5 0v8L5.500 4z" fill="#2f4f8f"/></svg>
<svg style="position:absolute;left:48px;top:606px" width="8" height="8"><path d="M6.400 0H8v8H6.400zM.5 0v8L5.500 4z" fill="#2f4f8f"/></svg>
<svg style="position:absolute;left:0;top:602px" width="3585" height="16"><path d="M121.2 16H133.2V13z" fill="#9fb6da"/><path d="M128.2 14.5Q130.2 14.5 131.2 13L143.7 1" stroke="#8195b7" fill="none"/><path d="M130.2 15Q132.2 15 133.0 13L145.3 1" stroke="#f6f9fd" stroke-width="1.3" fill="none"/><path d="M338.7 16H350.7V13z" fill="#9fb6da"/><path d="M345.7 14.5Q347.7 14.5 348.7 13L361.2 1" stroke="#8195b7" fill="none"/><path d="M347.7 15Q349.7 15 350.5 13L362.8 1" stroke="#f6f9fd" stroke-width="1.3" fill="none"/><path d="M490.5 16H502.5V13z" fill="#9fb6da"/><path d="M497.5 14.5Q499.5 14.5 500.5 13L513.0 1" stroke="#8195b7" fill="none"/><path d="M499.5 15Q501.5 15 502.3 13L514.6 1" stroke="#f6f9fd" stroke-width="1.3" fill="none"/><path d="M639.5 16H651.5V13z" fill="#9fb6da"/><path d="M646.5 14.5Q648.5 14.5 649.5 13L662.0 1" stroke="#8195b7" fill="none"/><path d="M648.5 15Q650.5 15 651.3 13L663.6 1" stroke="#f6f9fd" stroke-width="1.3" fill="none"/><path d="M787.4 16H799.4V13z" fill="#9fb6da"/><path d="M794.4 14.5Q796.4 14.5 797.4 13L809.9 1" stroke="#8195b7" fill="none"/><path d="M796.4 15Q798.4 15 799.2 13L811.5 1" stroke="#f6f9fd" stroke-width="1.3" fill="none"/><path d="M1404.1 16H1416.1V13z" fill="#9fb6da"/><path d="M1411.1 14.5Q1413.1 14.5 1414.1 13L1426.6 1" stroke="#8195b7" fill="none"/><path d="M1413.1 15Q1415.1 15 1415.9 13L1428.2 1" stroke="#f6f9fd" stroke-width="1.3" fill="none"/><path d="M1554.7 16H1566.7V13z" fill="#9fb6da"/><path d="M1561.7 14.5Q1563.7 14.5 1564.7 13L1577.2 1" stroke="#8195b7" fill="none"/><path d="M1563.7 15Q1565.7 15 1566.5 13L1578.8 1" stroke="#f6f9fd" stroke-width="1.3" fill="none"/><path d="M1591.6 16H1603.6V13z" fill="#9fb6da"/><path d="M1598.6 14.5Q1600.6 14.5 1601.6 13L1614.1 1" stroke="#8195b7" fill="none"/><path d="M1600.6 15Q1602.6 15 1603.4 13L1615.7 1" stroke="#f6f9fd" stroke-width="1.3" fill="none"/><path d="M1740.1 16H1752.1V13z" fill="#9fb6da"/><path d="M1747.1 14.5Q1749.1 14.5 1750.1 13L1762.6 1" stroke="#8195b7" fill="none"/><path d="M1749.1 15Q1751.1 15 1751.9 13L1764.2 1" stroke="#f6f9fd" stroke-width="1.3" fill="none"/><path d="M1888.5 16H1900.5V13z" fill="#9fb6da"/><path d="M1895.5 14.5Q1897.5 14.5 1898.5 13L1911.0 1" stroke="#8195b7" fill="none"/><path d="M1897.5 15Q1899.5 15 1900.3 13L1912.6 1" stroke="#f6f9fd" stroke-width="1.3" fill="none"/><path d="M2037.4 16H2049.4V13z" fill="#9fb6da"/><path d="M2044.4 14.5Q2046.4 14.5 2047.4 13L2059.9 1" stroke="#8195b7" fill="none"/><path d="M2046.4 15Q2048.4 15 2049.2 13L2061.5 1" stroke="#f6f9fd" stroke-width="1.3" fill="none"/><path d="M2252.2 16H2264.2V13z" fill="#9fb6da"/><path d="M2259.2 14.5Q2261.2 14.5 2262.2 13L2274.7 1" stroke="#8195b7" fill="none"/><path d="M2261.2 15Q2263.2 15 2264.0 13L2276.3 1" stroke="#f6f9fd" stroke-width="1.3" fill="none"/><path d="M2401.2 16H2413.2V13z" fill="#9fb6da"/><path d="M2408.2 14.5Q2410.2 14.5 2411.2 13L2423.7 1" stroke="#8195b7" fill="none"/><path d="M2410.2 15Q2412.2 15 2413.0 13L2425.3 1" stroke="#f6f9fd" stroke-width="1.3" fill="none"/><path d="M2614.5 16H2626.5V13z" fill="#9fb6da"/><path d="M2621.5 14.5Q2623.5 14.5 2624.5 13L2637.0 1" stroke="#8195b7" fill="none"/><path d="M2623.5 15Q2625.5 15 2626.3 13L2638.6 1" stroke="#f6f9fd" stroke-width="1.3" fill="none"/><path d="M2764.1 16H2776.1V13z" fill="#9fb6da"/><path d="M2771.1 14.5Q2773.1 14.5 2774.1 13L2786.6 1" stroke="#8195b7" fill="none"/><path d="M2773.1 15Q2775.1 15 2775.9 13L2788.2 1" stroke="#f6f9fd" stroke-width="1.3" fill="none"/><path d="M2978.1 16H2990.1V13z" fill="#9fb6da"/><path d="M2985.1 14.5Q2987.1 14.5 2988.1 13L3000.6 1" stroke="#8195b7" fill="none"/><path d="M2987.1 15Q2989.1 15 2989.9 13L3002.2 1" stroke="#f6f9fd" stroke-width="1.3" fill="none"/><path d="M3127.5 16H3139.5V13z" fill="#9fb6da"/><path d="M3134.5 14.5Q3136.5 14.5 3137.5 13L3150.0 1" stroke="#8195b7" fill="none"/><path d="M3136.5 15Q3138.5 15 3139.3 13L3151.6 1" stroke="#f6f9fd" stroke-width="1.3" fill="none"/><path d="M3339.8 16H3351.8V13z" fill="#9fb6da"/><path d="M3346.8 14.5Q3348.8 14.5 3349.8 13L3362.3 1" stroke="#8195b7" fill="none"/><path d="M3348.8 15Q3350.8 15 3351.6 13L3363.9 1" stroke="#f6f9fd" stroke-width="1.3" fill="none"/><path d="M3417.0 16H3429.0V13z" fill="#9fb6da"/><path d="M3424.0 14.5Q3426.0 14.5 3427.0 13L3439.5 1" stroke="#8195b7" fill="none"/><path d="M3426.0 15Q3428.0 15 3428.8 13L3441.1 1" stroke="#f6f9fd" stroke-width="1.3" fill="none"/><path d="M1031.5 -1V13Q1031.5 15 1033.5 15H1197.8Q1199.8 15 1200.8 13.5L1213.8 -1z" fill="#fff" stroke="#8a9cbc"/><path d="M1032.0 0H1213.8" stroke="#fff" stroke-width="2.200"/><defs><linearGradient id="tg602" x1="0" y1="0" x2="0" y2="1"><stop offset="0" stop-color="#b6c9e7"/><stop offset=".4" stop-color="#a1b9df"/><stop offset="1" stop-color="#9ab4dc"/></linearGradient></defs><path d="M3455.0 16L3467.0 1H3585V16z" fill="url(#tg602)"/><path d="M3455.0 15L3466.0 1" stroke="#8195b7" fill="none"/></svg>
<i style="left:61px;top:603px;width:1px;height:15px;background:#8b9cb9"></i>
<div class="t ui" style="color:#1e3a78;font-size:12.1px;text-align:center;left:-20.8px;top:603px;width:240px;height:16px;line-height:16px">Overview</div>
<div class="t ui" style="color:#1e3a78;font-size:12.1px;text-align:center;left:124.5px;top:603px;width:240px;height:16px;line-height:16px">16099-000-00-00.iam - PosReps</div>
<div class="t ui" style="color:#1e3a78;font-size:12.1px;text-align:center;left:309.5px;top:603px;width:240px;height:16px;line-height:16px">16099-000-00-00.iam</div>
<div class="t ui" style="color:#1e3a78;font-size:12.1px;text-align:center;left:459.5px;top:603px;width:240px;height:16px;line-height:16px">16xxx-700-03-00.iam</div>
<div class="t ui" style="color:#1e3a78;font-size:12.1px;text-align:center;left:608.5px;top:603px;width:240px;height:16px;line-height:16px">16xxx-702-01-00.iam</div>
<div class="t ui" style="color:#1e3a78;font-size:12.1px;text-align:center;left:797.2px;top:603px;width:240px;height:16px;line-height:16px">16xxx-900-05-00 HD.iam - PosRep</div>
<div class="t ui" style="color:#1e3a78;font-size:12.1px;text-align:center;font-weight:bold;letter-spacing:.7px;left:998.5px;top:603px;width:240px;height:16px;line-height:16px">16xxx-900-05-00 HD.iam</div>
<div class="t ui" style="color:#1e3a78;font-size:12.1px;text-align:center;left:1191.3px;top:603px;width:240px;height:16px;line-height:16px">16xxx-920-00-00.iam - PosReps</div>
<div class="t ui" style="color:#1e3a78;font-size:12.1px;text-align:center;left:1373.1px;top:603px;width:240px;height:16px;line-height:16px">16xxx-800-03-00.iam</div>
<div class="t ui" style="color:#1e3a78;font-size:12.1px;text-align:center;left:1466.0px;top:603px;width:240px;height:16px;line-height:16px">|   |</div>
<div class="t ui" style="color:#1e3a78;font-size:12.1px;text-align:center;left:1559.8px;top:603px;width:240px;height:16px;line-height:16px">16xxx-200-00-00.iam</div>
<div class="t ui" style="color:#1e3a78;font-size:12.1px;text-align:center;left:1708.8px;top:603px;width:240px;height:16px;line-height:16px">16xxx-250-02-00.iam</div>
<div class="t ui" style="color:#1e3a78;font-size:12.1px;text-align:center;left:1857.5px;top:603px;width:240px;height:16px;line-height:16px">16xxx-250-01-00.iam</div>
<div class="t ui" style="color:#1e3a78;font-size:12.1px;text-align:center;left:2039.0px;top:603px;width:240px;height:16px;line-height:16px">16xxx-300-17-00.iam - PosReps</div>
<div class="t ui" style="color:#1e3a78;font-size:12.1px;text-align:center;left:2221.2px;top:603px;width:240px;height:16px;line-height:16px">16xxx-300-17-00.iam</div>
<div class="t ui" style="color:#1e3a78;font-size:12.1px;text-align:center;left:2402.3px;top:603px;width:240px;height:16px;line-height:16px">16xxx-301-02-00.iam - PosReps</div>
<div class="t ui" style="color:#1e3a78;font-size:12.1px;text-align:center;left:2583.5px;top:603px;width:240px;height:16px;line-height:16px">16xxx-301-02-00.iam</div>
<div class="t ui" style="color:#1e3a78;font-size:12.1px;text-align:center;left:2765.3px;top:603px;width:240px;height:16px;line-height:16px">16xxx-306-01-00.iam - PosReps</div>
<div class="t ui" style="color:#1e3a78;font-size:12.1px;text-align:center;left:2947.1px;top:603px;width:240px;height:16px;line-height:16px">16xxx-306-01-00.iam</div>
<div class="t ui" style="color:#1e3a78;font-size:12.1px;text-align:center;left:3128.5px;top:603px;width:240px;height:16px;line-height:16px">16xxx-110-09-00.iam - PosReps</div>
<div class="t ui" style="color:#1e3a78;font-size:12.1px;text-align:center;left:3271.7px;top:603px;width:240px;height:16px;line-height:16px">Template</div>
<svg style="position:absolute;left:3438px;top:604px" width="14" height="12"><rect x="3.500" y="3.500" width="9" height="7" fill="#fff" stroke="#5a6f96"/><path d="M3 0v6M0 3h6M1 1l4 4M5 1 1 5" stroke="#e8a020" stroke-width="1.200"/></svg>
<i style="left:0px;top:618px;width:3600px;height:10px;background:#cad5e6"></i>
<i style="left:0px;top:627px;width:3600px;height:1px;background:#b3bfd2"></i>
<i style="left:0px;top:628px;width:3594px;height:31px;background:linear-gradient(#e3edfa 0,#d4e3f7 35%,#c6daf5 55%,#d6e5f9 85%,#e2edfb 100%)"></i>
<i style="left:3586px;top:659px;width:8px;height:314px;background:#a9c4ec"></i>
<div class="t ui" style="color:#858e9c;font-size:12px;white-space:pre;left:22px;top:637px;width:400px;height:18px;line-height:18px">CheckRefTemplate1:2  [Kompatibilitätsmodus]</div>
<svg style="position:absolute;left:2px;top:637px" width="16" height="16"><path d="M4.500 1.500h8l3 3v10.500h-11z" fill="#fff" stroke="#7f8ea8"/><rect x="0.500" y="3.500" width="9" height="9" fill="#2d8a3e" stroke="#1d6a2c"/><path d="M2.500 5.500l5 5M7.500 5.500l-5 5" stroke="#fff" stroke-width="1.500"/></svg>
<i style="left:3493px;top:648px;width:8px;height:2px;background:#7b8ba6"></i>
<i style="left:3527px;top:643px;width:7px;height:4px;border:1px solid #7b8ba6;border-top-width:3px"></i>
<svg style="position:absolute;left:3562px;top:642px" width="10" height="9"><path d="M1 .5 9 8.500M9 .5 1 8.500" stroke="#7b8ba6" stroke-width="2.200"/></svg>
<i style="left:0px;top:659px;width:3569px;height:298px;background:#fff"></i>
<i style="left:283px;top:679px;width:1px;height:278px;background:#d0d7e5"></i>
<i style="left:770px;top:679px;width:1px;height:278px;background:#d0d7e5"></i>
<i style="left:1119px;top:679px;width:1px;height:278px;background:#d0d7e5"></i>
<i style="left:1319px;top:679px;width:1px;height:278px;background:#d0d7e5"></i>
<i style="left:1459px;top:679px;width:1px;height:278px;background:#d0d7e5"></i>
<i style="left:1599px;top:679px;width:1px;height:278px;background:#d0d7e5"></i>
<i style="left:1740px;top:679px;width:1px;height:278px;background:#d0d7e5"></i>
<i style="left:1880px;top:679px;width:1px;height:278px;background:#d0d7e5"></i>
<i style="left:2019px;top:679px;width:1px;height:278px;background:#d0d7e5"></i>
<i style="left:2158px;top:679px;width:1px;height:278px;background:#d0d7e5"></i>
<i style="left:2246px;top:679px;width:1px;height:278px;background:#d0d7e5"></i>
<i style="left:2386px;top:679px;width:1px;height:278px;background:#d0d7e5"></i>
<i style="left:2526px;top:679px;width:1px;height:278px;background:#d0d7e5"></i>
<i style="left:2666px;top:679px;width:1px;height:278px;background:#d0d7e5"></i>
<i style="left:2754px;top:679px;width:1px;height:278px;background:#d0d7e5"></i>
<i style="left:2842px;top:679px;width:1px;height:278px;background:#d0d7e5"></i>
<i style="left:2930px;top:679px;width:1px;height:278px;background:#d0d7e5"></i>
<i style="left:3018px;top:679px;width:1px;height:278px;background:#d0d7e5"></i>
<i style="left:3106px;top:679px;width:1px;height:278px;background:#d0d7e5"></i>
<i style="left:3194px;top:679px;width:1px;height:278px;background:#d0d7e5"></i>
<i style="left:3282px;top:679px;width:1px;height:278px;background:#d0d7e5"></i>
<i style="left:3370px;top:679px;width:1px;height:278px;background:#d0d7e5"></i>
<i style="left:3458px;top:679px;width:1px;height:278px;background:#d0d7e5"></i>
<i style="left:3546px;top:679px;width:1px;height:278px;background:#d0d7e5"></i>
<i style="left:28px;top:695px;width:3541px;height:1px;background:#d0d7e5"></i>
<i style="left:28px;top:710px;width:3541px;height:1px;background:#d0d7e5"></i>
<i style="left:28px;top:725px;width:3541px;height:1px;background:#d0d7e5"></i>
<i style="left:28px;top:742px;width:3541px;height:1px;background:#d0d7e5"></i>
<i style="left:28px;top:757px;width:3541px;height:1px;background:#d0d7e5"></i>
<i style="left:28px;top:773px;width:3541px;height:1px;background:#d0d7e5"></i>
<i style="left:28px;top:788px;width:3541px;height:1px;background:#d0d7e5"></i>
<i style="left:28px;top:807px;width:3541px;height:1px;background:#d0d7e5"></i>
<i style="left:28px;top:822px;width:3541px;height:1px;background:#d0d7e5"></i>
<i style="left:28px;top:837px;width:3541px;height:1px;background:#d0d7e5"></i>
<i style="left:28px;top:854px;width:3541px;height:1px;background:#d0d7e5"></i>
<i style="left:28px;top:869px;width:3541px;height:1px;background:#d0d7e5"></i>
<i style="left:28px;top:885px;width:3541px;height:1px;background:#d0d7e5"></i>
<i style="left:28px;top:902px;width:3541px;height:1px;background:#d0d7e5"></i>
<i style="left:28px;top:917px;width:3541px;height:1px;background:#d0d7e5"></i>
<i style="left:28px;top:932px;width:3541px;height:1px;background:#d0d7e5"></i>
<i style="left:28px;top:949px;width:3541px;height:1px;background:#d0d7e5"></i>
<i style="left:283px;top:725px;width:488px;height:18px;background:#0f0"></i>
<i style="left:283px;top:837px;width:488px;height:18px;background:#0f0"></i>
<i style="left:770px;top:773px;width:350px;height:16px;background:#0f0"></i>
<i style="left:1119px;top:773px;width:201px;height:16px;background:#0f0"></i>
<i style="left:1319px;top:773px;width:141px;height:16px;background:#0f0"></i>
<i style="left:1459px;top:773px;width:141px;height:16px;background:#0f0"></i>
<i style="left:1599px;top:773px;width:142px;height:16px;background:#f00"></i>
<i style="left:1740px;top:773px;width:141px;height:16px;background:#f00"></i>
<i style="left:2019px;top:773px;width:140px;height:16px;background:#f00"></i>
<i style="left:2158px;top:773px;width:89px;height:16px;background:#f00"></i>
<i style="left:2386px;top:773px;width:141px;height:16px;background:#f00"></i>
<i style="left:2526px;top:773px;width:141px;height:16px;background:#f00"></i>
<i style="left:770px;top:885px;width:350px;height:18px;background:#ff0"></i>
<i style="left:1119px;top:885px;width:201px;height:18px;background:#ff0"></i>
<i style="left:1319px;top:885px;width:141px;height:18px;background:#0f0"></i>
<i style="left:1459px;top:885px;width:141px;height:18px;background:#0f0"></i>
<i style="left:1599px;top:885px;width:142px;height:18px;background:#0f0"></i>
<i style="left:1740px;top:885px;width:141px;height:18px;background:#0f0"></i>
<i style="left:2019px;top:885px;width:140px;height:18px;background:#0f0"></i>
<i style="left:2158px;top:885px;width:89px;height:18px;background:#0f0"></i>
<i style="left:2386px;top:885px;width:141px;height:18px;background:#0f0"></i>
<i style="left:2526px;top:885px;width:141px;height:18px;background:#0f0"></i>
<div class="t b" style="left:30px;top:680px;width:253px;height:15px;line-height:15px">Document:</div>
<div class="t l" style="left:286px;top:679px;width:484px;height:15px;line-height:15px">16xxx-900-05-00 HD.iam</div>
<div class="t b" style="left:30px;top:697px;width:253px;height:15px;line-height:15px">Name:</div>
<div class="t " style="left:286px;top:697px;width:484px;height:15px;line-height:15px">eingefahren</div>
<div class="t b" style="left:30px;top:712px;width:253px;height:15px;line-height:15px">ID:</div>
<div class="t " style="left:286px;top:712px;width:484px;height:15px;line-height:15px">{EF60562B-7EC6-430C-A488-4282F4D0F890}</div>
<div class="t b" style="left:30px;top:727px;width:253px;height:15px;line-height:15px">LastSavedWithoutUpdating:</div>
<div class="t c" style="left:284px;top:727px;width:486px;height:15px;line-height:15px">FALSCH</div>
<div class="t b" style="left:30px;top:744px;width:253px;height:15px;line-height:15px">Containing Doc</div>
<div class="t " style="left:773px;top:744px;width:546px;height:15px;line-height:15px">Name</div>
<div class="t " style="left:1322px;top:744px;width:277px;height:15px;line-height:15px">ID</div>
<div class="t " style="left:1602px;top:744px;width:278px;height:15px;line-height:15px">ModelGeometryVersion</div>
<div class="t " style="left:1883px;top:744px;width:275px;height:15px;line-height:15px">GeometricRevisionID</div>
<div class="t " style="left:2249px;top:744px;width:277px;height:15px;line-height:15px">MassPropRevisionID</div>
<div class="t " style="left:30px;top:759px;width:253px;height:15px;line-height:15px">DisplayName</div>
<div class="t " style="left:286px;top:759px;width:484px;height:15px;line-height:15px">FullFileName</div>
<div class="t " style="left:773px;top:759px;width:346px;height:15px;line-height:15px">Expected</div>
<div class="t " style="left:1122px;top:759px;width:197px;height:15px;line-height:15px">Found</div>
<div class="t " style="left:1322px;top:759px;width:137px;height:15px;line-height:15px">Expected</div>
<div class="t " style="left:1462px;top:759px;width:137px;height:15px;line-height:15px">Found</div>
<div class="t " style="left:1602px;top:759px;width:138px;height:15px;line-height:15px">Expected</div>
<div class="t " style="left:1743px;top:759px;width:137px;height:15px;line-height:15px">Found</div>
<div class="t " style="left:1883px;top:759px;width:136px;height:15px;line-height:15px">Expected_1</div>
<div class="t " style="left:2022px;top:759px;width:136px;height:15px;line-height:15px">Expected_2</div>
<div class="t " style="left:2161px;top:759px;width:85px;height:15px;line-height:15px">Found</div>
<div class="t " style="left:2249px;top:759px;width:137px;height:15px;line-height:15px">Expected_1</div>
<div class="t " style="left:2389px;top:759px;width:137px;height:15px;line-height:15px">Expected_2</div>
<div class="t " style="left:2529px;top:759px;width:137px;height:15px;line-height:15px">Found</div>
<div class="t b" style="left:30px;top:809px;width:253px;height:15px;line-height:15px">Name:</div>
<div class="t " style="left:286px;top:809px;width:484px;height:15px;line-height:15px">Radius =120 mm</div>
<div class="t b" style="left:30px;top:824px;width:253px;height:15px;line-height:15px">ID:</div>
<div class="t " style="left:286px;top:824px;width:484px;height:15px;line-height:15px">{9F6FB385-21D5-4264-918B-2ED1DAFCA1D5}</div>
<div class="t b" style="left:30px;top:839px;width:253px;height:15px;line-height:15px">LastSavedWithoutUpdating:</div>
<div class="t c" style="left:284px;top:839px;width:486px;height:15px;line-height:15px">FALSCH</div>
<div class="t b" style="left:30px;top:856px;width:253px;height:15px;line-height:15px">Containing Doc</div>
<div class="t " style="left:773px;top:856px;width:546px;height:15px;line-height:15px">Name</div>
<div class="t " style="left:1322px;top:856px;width:277px;height:15px;line-height:15px">ID</div>
<div class="t " style="left:1602px;top:856px;width:278px;height:15px;line-height:15px">ModelGeometryVersion</div>
<div class="t " style="left:1883px;top:856px;width:275px;height:15px;line-height:15px">GeometricRevisionID</div>
<div class="t " style="left:2249px;top:856px;width:277px;height:15px;line-height:15px">MassPropRevisionID</div>
<div class="t " style="left:30px;top:871px;width:253px;height:15px;line-height:15px">DisplayName</div>
<div class="t " style="left:286px;top:871px;width:484px;height:15px;line-height:15px">FullFileName</div>
<div class="t " style="left:773px;top:871px;width:346px;height:15px;line-height:15px">Expected</div>
<div class="t " style="left:1122px;top:871px;width:197px;height:15px;line-height:15px">Found</div>
<div class="t " style="left:1322px;top:871px;width:137px;height:15px;line-height:15px">Expected</div>
<div class="t " style="left:1462px;top:871px;width:137px;height:15px;line-height:15px">Found</div>
<div class="t " style="left:1602px;top:871px;width:138px;height:15px;line-height:15px">Expected</div>
<div class="t " style="left:1743px;top:871px;width:137px;height:15px;line-height:15px">Found</div>
<div class="t " style="left:1883px;top:871px;width:136px;height:15px;line-height:15px">Expected_1</div>
<div class="t " style="left:2022px;top:871px;width:136px;height:15px;line-height:15px">Expected_2</div>
<div class="t " style="left:2161px;top:871px;width:85px;height:15px;line-height:15px">Found</div>
<div class="t " style="left:2249px;top:871px;width:137px;height:15px;line-height:15px">Expected_1</div>
<div class="t " style="left:2389px;top:871px;width:137px;height:15px;line-height:15px">Expected_2</div>
<div class="t " style="left:2529px;top:871px;width:137px;height:15px;line-height:15px">Found</div>
<div class="t b" style="left:30px;top:952px;width:253px;height:15px;line-height:15px">Name:</div>
<div class="t " style="left:286px;top:952px;width:484px;height:15px;line-height:15px">Radius = 470 mm</div>
<div class="t " style="left:30px;top:775px;width:253px;height:15px;line-height:15px">16xxx-920-00-00.iam</div>
<div class="t " style="left:286px;top:775px;width:484px;height:15px;line-height:15px">D:\Vault\4JET_IV\16xxx\Baugruppen\BG900 - Prozesskopf\16xxx-920-00-00.iam</div>
<div class="t " style="left:773px;top:775px;width:346px;height:15px;line-height:15px">eingefahren</div>
<div class="t " style="left:1122px;top:775px;width:197px;height:15px;line-height:15px">eingefahren</div>
<div class="t " style="left:1322px;top:775px;width:137px;height:15px;line-height:15px">{7BF69BCF-39EA-4CFF-9D13-5A7C2E41B088}</div>
<div class="t " style="left:1462px;top:775px;width:137px;height:15px;line-height:15px">{7BF69BCF-39EA-4CFF-9D13-5A7C2E41B088}</div>
<div class="t " style="left:1602px;top:775px;width:138px;height:15px;line-height:15px">{AE3EE69F-29FF-F909-1C55-70D2A3B49E16}</div>
<div class="t " style="left:1743px;top:775px;width:137px;height:15px;line-height:15px">{1F206961-5DD3-264E-8A47-D09C3B5E7F21}</div>
<div class="t " style="left:1883px;top:775px;width:136px;height:15px;line-height:15px">{58E0DE09-765E-472E-B1A0-3C9D5E7F2A46}</div>
<div class="t " style="left:2022px;top:775px;width:136px;height:15px;line-height:15px">{58E0DE09-765E-472E-B1A0-3C9D5E7F2A46}</div>
<div class="t " style="left:2161px;top:775px;width:85px;height:15px;line-height:15px">{A8C090CC-0453-4E1B-9D27-6F3A8B5C1E70}</div>
<div class="t " style="left:2249px;top:775px;width:137px;height:15px;line-height:15px">{0A499C22-C2B7-94A1-4958-E54B170DFD5E}</div>
<div class="t " style="left:2389px;top:775px;width:137px;height:15px;line-height:15px">{0A499C22-C2B7-94A1-4958-E54B170DFD5E}</div>
<div class="t " style="left:2529px;top:775px;width:313px;height:15px;line-height:15px">{2E3E9105-79DF-F786-4958-E54B170DFD5E}</div>
<div class="t " style="left:30px;top:887px;width:253px;height:15px;line-height:15px">2500.09.150.0, l=17 Glieder.iam</div>
<div class="t " style="left:286px;top:887px;width:484px;height:15px;line-height:15px">D:\Vault\4JET_IV\16xxx\konfektionierte Zukaufteile\igus\2500.09.150.0, l=17 Glieder.iam</div>
<div class="t " style="left:773px;top:887px;width:346px;height:15px;line-height:15px">min_Radius</div>
<div class="t " style="left:1122px;top:887px;width:197px;height:15px;line-height:15px">Radius = 120 mm</div>
<div class="t " style="left:1322px;top:887px;width:137px;height:15px;line-height:15px">{32289833-A66F-41C5-9D13-5A7C2E41B088}</div>
<div class="t " style="left:1462px;top:887px;width:137px;height:15px;line-height:15px">{32289833-A66F-41C5-9D13-5A7C2E41B088}</div>
<div class="t " style="left:1602px;top:887px;width:138px;height:15px;line-height:15px">{1054C03D-F2E4-70C6-1C55-70D2A3B49E16}</div>
<div class="t " style="left:1743px;top:887px;width:137px;height:15px;line-height:15px">{1054C03D-F2E4-70C6-1C55-70D2A3B49E16}</div>
<div class="t " style="left:1883px;top:887px;width:136px;height:15px;line-height:15px">{918FA2C4-43A5-4051-B1A0-3C9D5E7F2A46}</div>
<div class="t " style="left:2022px;top:887px;width:136px;height:15px;line-height:15px">{918FA2C4-43A5-4051-B1A0-3C9D5E7F2A46}</div>
<div class="t " style="left:2161px;top:887px;width:85px;height:15px;line-height:15px">{918FA2C4-43A5-4051-B1A0-3C9D5E7F2A46}</div>
<div class="t " style="left:2249px;top:887px;width:137px;height:15px;line-height:15px">{CEF77D26-95DE-42D7-B381-F4DB9BB8F2AB}</div>
<div class="t " style="left:2389px;top:887px;width:137px;height:15px;line-height:15px">{CEF77D26-95DE-42D7-B381-F4DB9BB8F2AB}</div>
<div class="t " style="left:2529px;top:887px;width:313px;height:15px;line-height:15px">{CEF77D26-95DE-42D7-B381-F4DB9BB8F2AB}</div>
<i style="left:27px;top:693px;width:3542px;height:3px;background:#000"></i>
<i style="left:28px;top:740px;width:3541px;height:1px;background:#000"></i>
<i style="left:28px;top:742px;width:3541px;height:1px;background:#000"></i>
<i style="left:28px;top:852px;width:3541px;height:1px;background:#000"></i>
<i style="left:28px;top:854px;width:3541px;height:1px;background:#000"></i>
<i style="left:27px;top:757px;width:3542px;height:1px;background:#000"></i>
<i style="left:27px;top:869px;width:3542px;height:1px;background:#000"></i>
<i style="left:27px;top:772px;width:3542px;height:2px;background:#000"></i>
<i style="left:27px;top:884px;width:3542px;height:2px;background:#000"></i>
<i style="left:27px;top:805px;width:3542px;height:3px;background:#000"></i>
<i style="left:27px;top:900px;width:3542px;height:3px;background:#000"></i>
<i style="left:27px;top:947px;width:3542px;height:3px;background:#000"></i>
<i style="left:283px;top:678px;width:1px;height:279px;background:#000"></i>
<i style="left:768px;top:678px;width:3px;height:279px;background:#000"></i>
<i style="left:1318px;top:678px;width:2px;height:279px;background:#000"></i>
<i style="left:1598px;top:678px;width:2px;height:279px;background:#000"></i>
<i style="left:1879px;top:678px;width:2px;height:279px;background:#000"></i>
<i style="left:2245px;top:678px;width:2px;height:279px;background:#000"></i>
<i style="left:2665px;top:678px;width:2px;height:96px;background:#000"></i>
<i style="left:2665px;top:788px;width:2px;height:98px;background:#000"></i>
<i style="left:2665px;top:902px;width:2px;height:55px;background:#000"></i>
<i style="left:28px;top:659px;width:3541px;height:19px;background:linear-gradient(#f9dca6,#f7d08a 45%,#f3c56a 55%,#f1c160)"></i>
<i style="left:28px;top:678px;width:3541px;height:1px;background:#f29536"></i>
<i style="left:283px;top:659px;width:1px;height:20px;background:#f29536"></i>
<i style="left:770px;top:659px;width:1px;height:20px;background:#f29536"></i>
<i style="left:1119px;top:659px;width:1px;height:20px;background:#f29536"></i>
<i style="left:1319px;top:659px;width:1px;height:20px;background:#f29536"></i>
<i style="left:1459px;top:659px;width:1px;height:20px;background:#f29536"></i>
<i style="left:1599px;top:659px;width:1px;height:20px;background:#f29536"></i>
<i style="left:1740px;top:659px;width:1px;height:20px;background:#f29536"></i>
<i style="left:1880px;top:659px;width:1px;height:20px;background:#f29536"></i>
<i style="left:2019px;top:659px;width:1px;height:20px;background:#f29536"></i>
<i style="left:2158px;top:659px;width:1px;height:20px;background:#f29536"></i>
<i style="left:2246px;top:659px;width:1px;height:20px;background:#f29536"></i>
<i style="left:2386px;top:659px;width:1px;height:20px;background:#f29536"></i>
<i style="left:2526px;top:659px;width:1px;height:20px;background:#f29536"></i>
<i style="left:2666px;top:659px;width:1px;height:20px;background:#f29536"></i>
<i style="left:2754px;top:659px;width:1px;height:20px;background:#f29536"></i>
<i style="left:2842px;top:659px;width:1px;height:20px;background:#f29536"></i>
<i style="left:2930px;top:659px;width:1px;height:20px;background:#f29536"></i>
<i style="left:3018px;top:659px;width:1px;height:20px;background:#f29536"></i>
<i style="left:3106px;top:659px;width:1px;height:20px;background:#f29536"></i>
<i style="left:3194px;top:659px;width:1px;height:20px;background:#f29536"></i>
<i style="left:3282px;top:659px;width:1px;height:20px;background:#f29536"></i>
<i style="left:3370px;top:659px;width:1px;height:20px;background:#f29536"></i>
<i style="left:3458px;top:659px;width:1px;height:20px;background:#f29536"></i>
<i style="left:3546px;top:659px;width:1px;height:20px;background:#f29536"></i>
<div class="t h" style="left:28px;top:659px;width:255px;height:19px;line-height:19px">A</div>
<div class="t h" style="left:284px;top:659px;width:486px;height:19px;line-height:19px">B</div>
<div class="t h" style="left:771px;top:659px;width:348px;height:19px;line-height:19px">C</div>
<div class="t h" style="left:1120px;top:659px;width:199px;height:19px;line-height:19px">D</div>
<div class="t h" style="left:1320px;top:659px;width:139px;height:19px;line-height:19px">E</div>
<div class="t h" style="left:1460px;top:659px;width:139px;height:19px;line-height:19px">F</div>
<div class="t h" style="left:1600px;top:659px;width:140px;height:19px;line-height:19px">G</div>
<div class="t h" style="left:1741px;top:659px;width:139px;height:19px;line-height:19px">H</div>
<div class="t h" style="left:1881px;top:659px;width:138px;height:19px;line-height:19px">I</div>
<div class="t h" style="left:2020px;top:659px;width:138px;height:19px;line-height:19px">J</div>
<div class="t h" style="left:2159px;top:659px;width:87px;height:19px;line-height:19px">K</div>
<div class="t h" style="left:2247px;top:659px;width:139px;height:19px;line-height:19px">L</div>
<div class="t h" style="left:2387px;top:659px;width:139px;height:19px;line-height:19px">M</div>
<div class="t h" style="left:2527px;top:659px;width:139px;height:19px;line-height:19px">N</div>
<div class="t h" style="left:2667px;top:659px;width:87px;height:19px;line-height:19px">O</div>
<div class="t h" style="left:2755px;top:659px;width:87px;height:19px;line-height:19px">P</div>
<div class="t h" style="left:2843px;top:659px;width:87px;height:19px;line-height:19px">Q</div>
<div class="t h" style="left:2931px;top:659px;width:87px;height:19px;line-height:19px">R</div>
<div class="t h" style="left:3019px;top:659px;width:87px;height:19px;line-height:19px">S</div>
<div class="t h" style="left:3107px;top:659px;width:87px;height:19px;line-height:19px">T</div>
<div class="t h" style="left:3195px;top:659px;width:87px;height:19px;line-height:19px">U</div>
<div class="t h" style="left:3283px;top:659px;width:87px;height:19px;line-height:19px">V</div>
<div class="t h" style="left:3371px;top:659px;width:87px;height:19px;line-height:19px">W</div>
<div class="t h" style="left:3459px;top:659px;width:87px;height:19px;line-height:19px">X</div>
<div class="t h" style="clip-path:inset(0 65px 0 0);left:3547px;top:659px;width:87px;height:19px;line-height:19px">Y</div>
<i style="left:0px;top:659px;width:27px;height:298px;background:#e4ecf7"></i>
<i style="left:27px;top:659px;width:1px;height:298px;background:#9eb6ce"></i>
<i style="left:0px;top:678px;width:27px;height:1px;background:#9eb6ce"></i>
<i style="left:0px;top:695px;width:27px;height:1px;background:#9eb6ce"></i>
<i style="left:0px;top:710px;width:27px;height:1px;background:#9eb6ce"></i>
<i style="left:0px;top:725px;width:27px;height:1px;background:#9eb6ce"></i>
<i style="left:0px;top:742px;width:27px;height:1px;background:#9eb6ce"></i>
<i style="left:0px;top:757px;width:27px;height:1px;background:#9eb6ce"></i>
<i style="left:0px;top:773px;width:27px;height:1px;background:#9eb6ce"></i>
<i style="left:0px;top:788px;width:27px;height:1px;background:#9eb6ce"></i>
<i style="left:0px;top:807px;width:27px;height:1px;background:#9eb6ce"></i>
<i style="left:0px;top:822px;width:27px;height:1px;background:#9eb6ce"></i>
<i style="left:0px;top:837px;width:27px;height:1px;background:#9eb6ce"></i>
<i style="left:0px;top:854px;width:27px;height:1px;background:#9eb6ce"></i>
<i style="left:0px;top:869px;width:27px;height:1px;background:#9eb6ce"></i>
<i style="left:0px;top:885px;width:27px;height:1px;background:#9eb6ce"></i>
<i style="left:0px;top:902px;width:27px;height:1px;background:#9eb6ce"></i>
<i style="left:0px;top:917px;width:27px;height:1px;background:#9eb6ce"></i>
<i style="left:0px;top:932px;width:27px;height:1px;background:#9eb6ce"></i>
<i style="left:0px;top:949px;width:27px;height:1px;background:#9eb6ce"></i>
<div class="t h" style="left:0;top:677px;width:26px;height:15px;line-height:15px;text-align:center;clip-path:inset(0px 0 0px 0)">1</div>
<div class="t h" style="left:0;top:694px;width:26px;height:15px;line-height:15px;text-align:center;clip-path:inset(0px 0 0px 0)">2</div>
<div class="t h" style="left:0;top:709px;width:26px;height:15px;line-height:15px;text-align:center;clip-path:inset(0px 0 0px 0)">3</div>
<div class="t h" style="left:0;top:724px;width:26px;height:15px;line-height:15px;text-align:center;clip-path:inset(0px 0 0px 0)">4</div>
<div class="t h" style="left:0;top:741px;width:26px;height:15px;line-height:15px;text-align:center;clip-path:inset(0px 0 0px 0)">5</div>
<div class="t h" style="left:0;top:756px;width:26px;height:15px;line-height:15px;text-align:center;clip-path:inset(0px 0 0px 0)">6</div>
<div class="t h" style="left:0;top:772px;width:26px;height:15px;line-height:15px;text-align:center;clip-path:inset(0px 0 0px 0)">7</div>
<div class="t h" style="left:0;top:789px;width:26px;height:15px;line-height:15px;text-align:center;clip-path:inset(0px 0 0px 0)">15</div>
<div class="t h" style="left:0;top:806px;width:26px;height:15px;line-height:15px;text-align:center;clip-path:inset(0px 0 0px 0)">16</div>
<div class="t h" style="left:0;top:821px;width:26px;height:15px;line-height:15px;text-align:center;clip-path:inset(0px 0 0px 0)">17</div>
<div class="t h" style="left:0;top:836px;width:26px;height:15px;line-height:15px;text-align:center;clip-path:inset(0px 0 0px 0)">18</div>
<div class="t h" style="left:0;top:853px;width:26px;height:15px;line-height:15px;text-align:center;clip-path:inset(0px 0 0px 0)">19</div>
<div class="t h" style="left:0;top:868px;width:26px;height:15px;line-height:15px;text-align:center;clip-path:inset(0px 0 0px 0)">20</div>
<div class="t h" style="left:0;top:884px;width:26px;height:15px;line-height:15px;text-align:center;clip-path:inset(0px 0 0px 0)">21</div>
<div class="t h" style="left:0;top:901px;width:26px;height:15px;line-height:15px;text-align:center;clip-path:inset(0px 0 0px 0)">22</div>
<div class="t h" style="left:0;top:916px;width:26px;height:15px;line-height:15px;text-align:center;clip-path:inset(0px 0 0px 0)">23</div>
<div class="t h" style="left:0;top:931px;width:26px;height:15px;line-height:15px;text-align:center;clip-path:inset(0px 0 0px 0)">24</div>
<div class="t h" style="left:0;top:949px;width:26px;height:15px;line-height:15px;text-align:center;clip-path:inset(0px 0 8px 0)">25</div>
<i style="left:0px;top:659px;width:27px;height:19px;background:linear-gradient(#b4c9ea,#a6bee4);box-shadow:0 0 0 1px #c9d8ef inset"></i>
<svg style="position:absolute;left:11px;top:664px" width="12" height="11"><defs><linearGradient id="cg659" x1="0" y1="0" x2="0" y2="1"><stop offset="0" stop-color="#fff"/><stop offset="1" stop-color="#d5e0f1"/></linearGradient></defs><path d="M11.500 0v11H0z" fill="url(#cg659)"/></svg>
<i style="left:3570px;top:659px;width:16px;height:298px;background:linear-gradient(90deg,#86a5d2,#7b9bcb)"></i>
<i style="left:3571px;top:661px;width:14px;height:6px;background:#f2f6fc;box-shadow:0 0 0 1px #8ea3c4 inset"></i>
<i style="left:3574px;top:663px;width:8px;height:1px;background:#6d7f9e"></i>
<svg style="position:absolute;left:3573px;top:671px" width="10" height="6"><path d="M0 6h10L5 0z" fill="#4a5f88"/></svg>
<i style="left:3571px;top:684px;width:14px;height:87px;border-radius:2px;background:linear-gradient(90deg,#f4f7fc,#dfe6f1 50%,#c5d0e2);box-shadow:0 0 0 1px #8a9cba inset"></i>
<i style="left:3574px;top:724px;width:8px;height:1px;background:#7d8da8"></i>
<i style="left:3574px;top:726px;width:8px;height:1px;background:#7d8da8"></i>
<i style="left:3574px;top:728px;width:8px;height:1px;background:#7d8da8"></i>
<i style="left:3574px;top:730px;width:8px;height:1px;background:#7d8da8"></i>
<svg style="position:absolute;left:3573px;top:945px" width="10" height="6"><path d="M0 0h10L5 6z" fill="#4a5f88"/></svg>
<i style="left:0px;top:957px;width:2142px;height:16px;background:linear-gradient(#dde7f6 0,#d6e2f4 40%,#bfd2ee 50%,#c3d5ef 85%,#e3ecf8 100%)"></i>
<i style="left:0px;top:957px;width:2142px;height:1px;background:#b9c7dd"></i>
<svg style="position:absolute;left:4px;top:961px" width="8" height="8"><path d="M0 0h1.600v8H0zM7.500 0v8L2.500 4z" fill="#2f4f8f"/></svg>
<svg style="position:absolute;left:20px;top:961px" width="6" height="8"><path d="M5.500 0v8L.5 4z" fill="#2f4f8f"/></svg>
<svg style="position:absolute;left:34px;top:961px" width="6" height="8"><path d="M.5 0v8L5.500 4z" fill="#2f4f8f"/></svg>
<svg style="position:absolute;left:47px;top:961px" width="8" height="8"><path d="M6.400 0H8v8H6.400zM.5 0v8L5.500 4z" fill="#2f4f8f"/></svg>
<svg style="position:absolute;left:0;top:957px" width="2142" height="16"><path d="M120.2 16H132.2V13z" fill="#9fb6da"/><path d="M127.2 14.5Q129.2 14.5 130.2 13L142.7 1" stroke="#8195b7" fill="none"/><path d="M129.2 15Q131.2 15 132.0 13L144.3 1" stroke="#f6f9fd" stroke-width="1.3" fill="none"/><path d="M337.7 16H349.7V13z" fill="#9fb6da"/><path d="M344.7 14.5Q346.7 14.5 347.7 13L360.2 1" stroke="#8195b7" fill="none"/><path d="M346.7 15Q348.7 15 349.5 13L361.8 1" stroke="#f6f9fd" stroke-width="1.3" fill="none"/><path d="M489.5 16H501.5V13z" fill="#9fb6da"/><path d="M496.5 14.5Q498.5 14.5 499.5 13L512.0 1" stroke="#8195b7" fill="none"/><path d="M498.5 15Q500.5 15 501.3 13L513.6 1" stroke="#f6f9fd" stroke-width="1.3" fill="none"/><path d="M638.5 16H650.5V13z" fill="#9fb6da"/><path d="M645.5 14.5Q647.5 14.5 648.5 13L661.0 1" stroke="#8195b7" fill="none"/><path d="M647.5 15Q649.5 15 650.3 13L662.6 1" stroke="#f6f9fd" stroke-width="1.3" fill="none"/><path d="M1189.1 16H1201.1V13z" fill="#9fb6da"/><path d="M1196.1 14.5Q1198.1 14.5 1199.1 13L1211.6 1" stroke="#8195b7" fill="none"/><path d="M1198.1 15Q1200.1 15 1200.9 13L1213.2 1" stroke="#f6f9fd" stroke-width="1.3" fill="none"/><path d="M1403.1 16H1415.1V13z" fill="#9fb6da"/><path d="M1410.1 14.5Q1412.1 14.5 1413.1 13L1425.6 1" stroke="#8195b7" fill="none"/><path d="M1412.1 15Q1414.1 15 1414.9 13L1427.2 1" stroke="#f6f9fd" stroke-width="1.3" fill="none"/><path d="M1553.7 16H1565.7V13z" fill="#9fb6da"/><path d="M1560.7 14.5Q1562.7 14.5 1563.7 13L1576.2 1" stroke="#8195b7" fill="none"/><path d="M1562.7 15Q1564.7 15 1565.5 13L1577.8 1" stroke="#f6f9fd" stroke-width="1.3" fill="none"/><path d="M1590.6 16H1602.6V13z" fill="#9fb6da"/><path d="M1597.6 14.5Q1599.6 14.5 1600.6 13L1613.1 1" stroke="#8195b7" fill="none"/><path d="M1599.6 15Q1601.6 15 1602.4 13L1614.7 1" stroke="#f6f9fd" stroke-width="1.3" fill="none"/><path d="M1739.1 16H1751.1V13z" fill="#9fb6da"/><path d="M1746.1 14.5Q1748.1 14.5 1749.1 13L1761.6 1" stroke="#8195b7" fill="none"/><path d="M1748.1 15Q1750.1 15 1750.9 13L1763.2 1" stroke="#f6f9fd" stroke-width="1.3" fill="none"/><path d="M1887.5 16H1899.5V13z" fill="#9fb6da"/><path d="M1894.5 14.5Q1896.5 14.5 1897.5 13L1910.0 1" stroke="#8195b7" fill="none"/><path d="M1896.5 15Q1898.5 15 1899.3 13L1911.6 1" stroke="#f6f9fd" stroke-width="1.3" fill="none"/><path d="M2036.4 16H2048.4V13z" fill="#9fb6da"/><path d="M2043.4 14.5Q2045.4 14.5 2046.4 13L2058.9 1" stroke="#8195b7" fill="none"/><path d="M2045.4 15Q2047.4 15 2048.2 13L2060.5 1" stroke="#f6f9fd" stroke-width="1.3" fill="none"/><path d="M799.8 -1V13Q799.8 15 801.8 15H1022.2Q1024.2 15 1025.2 13.5L1038.2 -1z" fill="#fff" stroke="#8a9cbc"/><path d="M800.2 0H1038.2" stroke="#fff" stroke-width="2.200"/></svg>
<i style="left:60px;top:958px;width:1px;height:15px;background:#8b9cb9"></i>
<div class="t ui" style="color:#1e3a78;font-size:12.1px;text-align:center;left:-21.8px;top:958px;width:240px;height:16px;line-height:16px">Overview</div>
<div class="t ui" style="color:#1e3a78;font-size:12.1px;text-align:center;left:123.5px;top:958px;width:240px;height:16px;line-height:16px">16099-000-00-00.iam - PosReps</div>
<div class="t ui" style="color:#1e3a78;font-size:12.1px;text-align:center;left:308.5px;top:958px;width:240px;height:16px;line-height:16px">16099-000-00-00.iam</div>
<div class="t ui" style="color:#1e3a78;font-size:12.1px;text-align:center;left:458.5px;top:958px;width:240px;height:16px;line-height:16px">16xxx-700-03-00.iam</div>
<div class="t ui" style="color:#1e3a78;font-size:12.1px;text-align:center;left:607.5px;top:958px;width:240px;height:16px;line-height:16px">16xxx-702-01-00.iam</div>
<div class="t ui" style="color:#1e3a78;font-size:12.1px;text-align:center;font-weight:bold;letter-spacing:.7px;left:796.2px;top:958px;width:240px;height:16px;line-height:16px">16xxx-900-05-00 HD.iam - PosRep</div>
<div class="t ui" style="color:#1e3a78;font-size:12.1px;text-align:center;left:997.5px;top:958px;width:240px;height:16px;line-height:16px">16xxx-900-05-00 HD.iam</div>
<div class="t ui" style="color:#1e3a78;font-size:12.1px;text-align:center;left:1190.3px;top:958px;width:240px;height:16px;line-height:16px">16xxx-920-00-00.iam - PosReps</div>
<div class="t ui" style="color:#1e3a78;font-size:12.1px;text-align:center;left:1372.1px;top:958px;width:240px;height:16px;line-height:16px">16xxx-800-03-00.iam</div>
<div class="t ui" style="color:#1e3a78;font-size:12.1px;text-align:center;left:1465.0px;top:958px;width:240px;height:16px;line-height:16px">|   |</div>
<div class="t ui" style="color:#1e3a78;font-size:12.1px;text-align:center;left:1558.8px;top:958px;width:240px;height:16px;line-height:16px">16xxx-200-00-00.iam</div>
<div class="t ui" style="color:#1e3a78;font-size:12.1px;text-align:center;left:1707.8px;top:958px;width:240px;height:16px;line-height:16px">16xxx-250-02-00.iam</div>
<div class="t ui" style="color:#1e3a78;font-size:12.1px;text-align:center;left:1856.5px;top:958px;width:240px;height:16px;line-height:16px">16xxx-250-01-00.iam</div>
<div class="t ui" style="color:#1e3a78;font-size:12.1px;text-align:center;clip-path:inset(0 140.0px 0 0);left:2038.0px;top:958px;width:240px;height:16px;line-height:16px">16xxx-300-17-00.iam - PosReps</div>
<i style="left:2148px;top:957px;width:1438px;height:16px;background:linear-gradient(#86a5d2,#7b9bcb)"></i>
<i style="left:2142px;top:958px;width:6px;height:14px;background:#f8fafd;box-shadow:0 0 0 1px #9fb4d6 inset"></i>
<i style="left:2144px;top:961px;width:1px;height:8px;background:#5d6f90"></i>
<svg style="position:absolute;left:2154px;top:960px" width="6" height="10"><path d="M6 0v10L0 5z" fill="#4a5f88"/></svg>
<i style="left:2166px;top:958px;width:1262px;height:14px;border-radius:2px;background:linear-gradient(#f4f7fc,#dfe6f1 50%,#c5d0e2);box-shadow:0 0 0 1px #8a9cba inset"></i>
<i style="left:2793px;top:961px;width:1px;height:8px;background:#7d8da8"></i>
<i style="left:2795px;top:961px;width:1px;height:8px;background:#7d8da8"></i>
<i style="left:2797px;top:961px;width:1px;height:8px;background:#7d8da8"></i>
<i style="left:2799px;top:961px;width:1px;height:8px;background:#7d8da8"></i>
<svg style="position:absolute;left:3549px;top:960px" width="6" height="10"><path d="M0 0v10L6 5z" fill="#4a5f88"/></svg>
<i style="left:3562px;top:959px;width:6px;height:12px;background:#f2f6fc;box-shadow:0 0 0 1px #8ea3c4 inset"></i>
<i style="left:3565px;top:961px;width:1px;height:8px;background:#6d7f9e"></i>
<svg style="position:absolute;left:3572px;top:960px" width="12" height="12"><path d="M10 2h2v2h-2zM6 6h2v2H6zM10 6h2v2h-2zM2 10h2v2H2zM6 10h2v2H6zM10 10h2v2h-2z" fill="#e8eef8"/></svg>
<i style="left:3594px;top:84px;width:6px;height:889px;background:#c3d7f4"></i>
<i style="left:0px;top:973px;width:3600px;height:9px;background:#b0caf0"></i>
<i style="left:0px;top:982px;width:3600px;height:1px;background:#5b7db1"></i>
<i style="left:0px;top:983px;width:3600px;height:3px;background:#a8c4ed"></i>
<i style="left:0px;top:986px;width:3600px;height:1px;background:#6a8cc0"></i>
<i style="left:0px;top:987px;width:3600px;height:24px;background:linear-gradient(#dce9fb 0,#cbddf7 35%,#b3cdf2 55%,#bcd3f4 75%,#d6e5f9 100%)"></i>
<i style="left:0px;top:1011px;width:3600px;height:2px;background:#4f6d9c"></i>
<div class="t ui" style="color:#1e3a78;font-size:11.8px;left:-5px;top:988px;width:40px;height:20px;line-height:20px">Bereit</div>
<i style="left:35px;top:988px;width:1px;height:21px;background:#9db6dc"></i>
<i style="left:36px;top:988px;width:1px;height:21px;background:#e8f0fb"></i>
<svg style="position:absolute;left:45px;top:990px" width="15" height="14"><rect x="1.500" y="2.500" width="13" height="11" fill="#fff" stroke="#5a6f96"/><path d="M2 6h12M2 9h12M6 6v7M10 6v7" stroke="#8fa3c6"/><rect x="2" y="3" width="12" height="3" fill="#6f8fc4"/><circle cx="3" cy="3" r="2.500" fill="#d84a2a"/></svg>
<i style="left:69px;top:988px;width:1px;height:21px;background:#9db6dc"></i>
<i style="left:70px;top:988px;width:1px;height:21px;background:#e8f0fb"></i>
<div class="t ui" style="color:#1e3a78;font-size:11.3px;left:3274px;top:988px;width:60px;height:20px;line-height:20px">Anzahl: 0</div>
<i style="left:3329px;top:988px;width:1px;height:21px;background:#9db6dc"></i>
<i style="left:3330px;top:988px;width:1px;height:21px;background:#e8f0fb"></i>
<i style="left:3335px;top:988px;width:58px;height:20px;background:#c3d7f4;box-shadow:0 0 0 1px #98afd4 inset;border-radius:2px"></i>
<i style="left:3336px;top:989px;width:19px;height:18px;background:linear-gradient(#fde6a8,#fbc95a);box-shadow:0 0 0 1px #c8a04a inset"></i>
<svg style="position:absolute;left:3339px;top:992px" width="13" height="12"><rect x=".5" y=".5" width="12" height="11" fill="#fff" stroke="#5a5a5a"/><path d="M.5 4h12M.5 8h12M4.500 .5v11M8.500 .5v11" stroke="#5a5a5a"/></svg>
<svg style="position:absolute;left:3358px;top:992px" width="13" height="12"><rect x=".5" y=".5" width="12" height="11" fill="#fff" stroke="#5a5a5a"/><rect x="3.500" y="2.500" width="6" height="7" fill="none" stroke="#5a5a5a"/></svg>
<svg style="position:absolute;left:3376px;top:992px" width="13" height="12"><rect x=".5" y=".5" width="12" height="11" fill="#fff" stroke="#5a5a5a"/><path d="M4.500 .5v7h8" stroke="#5a5a5a" fill="none"/></svg>
<div class="t ui" style="color:#1e3a78;font-size:11px;left:3401px;top:988px;width:40px;height:20px;line-height:20px">100 %</div>
<svg style="position:absolute;left:3439px;top:989px" width="18" height="18" viewBox="-9 -9 18 18"><circle r="7.500" fill="#eef3fb" stroke="#6f83a8"/><path d="M-4 0h8" stroke="#3a4f78" stroke-width="1.800"/></svg>
<svg style="position:absolute;left:3557px;top:989px" width="18" height="18" viewBox="-9 -9 18 18"><circle r="7.500" fill="#eef3fb" stroke="#6f83a8"/><path d="M-4 0h8M0-4v8" stroke="#3a4f78" stroke-width="1.800"/></svg>
<i style="left:3458px;top:998px;width:98px;height:1px;background:#6f83a8"></i>
<i style="left:3458px;top:999px;width:98px;height:1px;background:#e8f0fb"></i>
<svg style="position:absolute;left:3501px;top:990px" width="11" height="16"><path d="M1.500 .5h8v9L5.500 14.500 1.500 9.500z" fill="#e8eef8" stroke="#5f7397"/></svg>
<svg style="position:absolute;left:3584px;top:996px" width="12" height="12"><path d="M10 2h2v2h-2zM6 6h2v2H6zM10 6h2v2h-2zM2 10h2v2H2zM6 10h2v2H6zM10 10h2v2h-2z" fill="#5f7397"/></svg>
</body></html>
